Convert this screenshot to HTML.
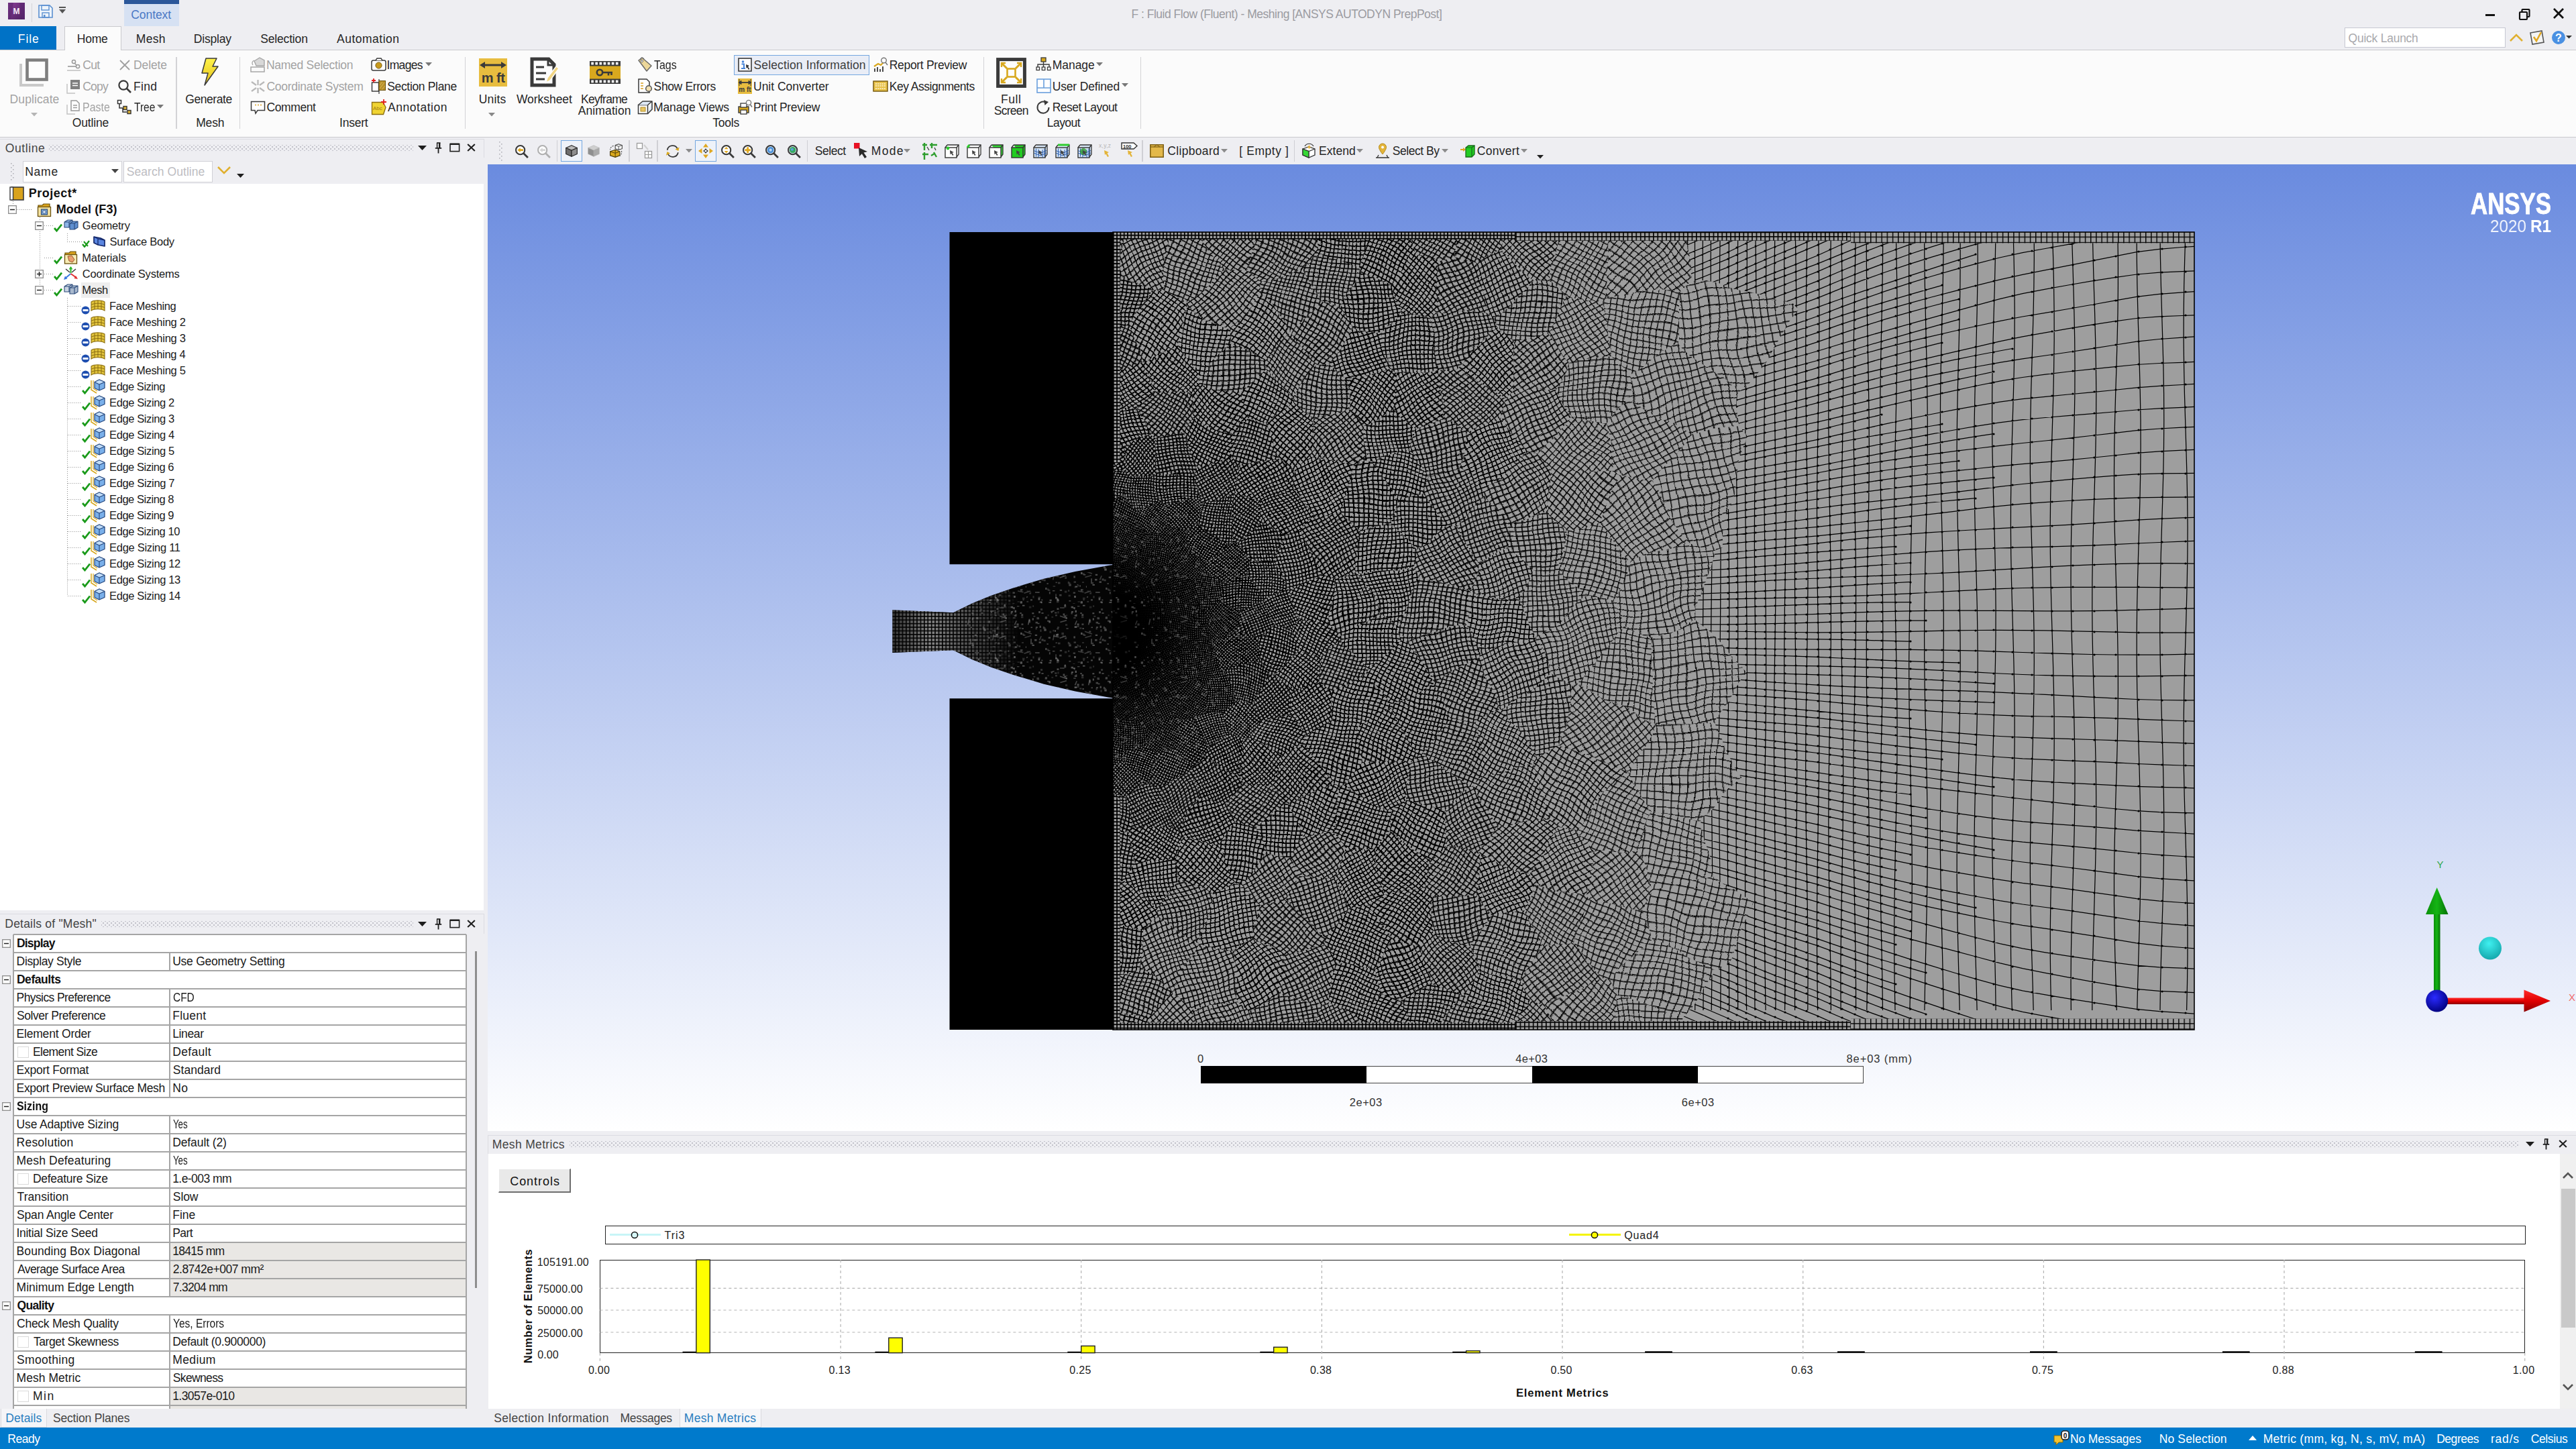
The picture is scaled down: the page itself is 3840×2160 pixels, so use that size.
<!DOCTYPE html><html><head><meta charset="utf-8"><title>Meshing</title><style>html,body{margin:0;padding:0;background:#eeeef2;}
body{width:3840px;height:2160px;position:relative;overflow:hidden;font-family:"Liberation Sans",sans-serif;}
.t{position:absolute;white-space:pre;line-height:1;}
.b{position:absolute;}
.dots{background-image:radial-gradient(circle,#c2c2ca 0.8px,transparent 1.15px),radial-gradient(circle,#c2c2ca 0.8px,transparent 1.15px);background-size:6px 6px;background-position:0 0,3px 3px;}
.hd{background-image:linear-gradient(90deg,#8c8c8c 1.2px,transparent 1.2px);background-size:3px 1.2px;}
.vd{background-image:linear-gradient(#8c8c8c 1.2px,transparent 1.2px);background-size:1.2px 3px;}
</style></head><body>
<div class="b" style="left:0.0px;top:0.0px;width:3840.0px;height:2160.0px;background:#eeeef2;"></div>
<span class="t" style="left:1686.5px;top:13.3px;font-size:17.5px;color:#9b9ba1;letter-spacing:-0.50px;">F : Fluid Flow (Fluent) - Meshing [ANSYS AUTODYN PrepPost]</span>
<svg class="b" style="left:12.0px;top:4.0px;" width="25" height="25" viewBox="0 0 25 25"><defs><linearGradient id="gM" x1="0" y1="0" x2="1" y2="1"><stop offset="0" stop-color="#8b3f98"/><stop offset="1" stop-color="#4a1f5e"/></linearGradient></defs><rect width="25" height="25" fill="url(#gM)"/><path d="M0 0L8 0L4 25L0 25Z" fill="#5a2670" opacity=".6"/><path d="M25 0L17 0L21 25L25 25Z" fill="#5a2670" opacity=".6"/><text x="12.5" y="17" font-family="Liberation Sans" font-weight="700" font-size="12" fill="#f3e9f7" text-anchor="middle">M</text></svg>
<div class="b" style="left:47.0px;top:5.0px;width:1.0px;height:28.0px;background:#d4d4d8;"></div>
<svg class="b" style="left:57.0px;top:7.0px;" width="22" height="20" viewBox="0 0 22 20"><path d="M1 1H17L21 5V19H1Z" fill="#eef4fb" stroke="#5b8fd0" stroke-width="1.6"/><rect x="5" y="1" width="11" height="7" fill="none" stroke="#5b8fd0" stroke-width="1.4"/><rect x="6" y="12" width="10" height="7" fill="none" stroke="#5b8fd0" stroke-width="1.4"/><rect x="8" y="15" width="2.5" height="4" fill="#5b8fd0"/></svg>
<svg class="b" style="left:87.0px;top:10.0px;" width="12" height="11" viewBox="0 0 12 11"><rect x="1" y="0" width="10" height="2" fill="#555"/><path d="M1 4H11L6 10Z" fill="#555"/></svg>
<div class="b" style="left:184.6px;top:0.0px;width:82.0px;height:38.5px;background:#d6e1f3;"></div>
<div class="b" style="left:184.6px;top:0.0px;width:82.0px;height:5.5px;background:#2b579a;"></div>
<span class="t" style="left:195.3px;top:14.3px;font-size:17.5px;color:#4a78c5;letter-spacing:-0.08px;">Context</span>
<div class="b" style="left:3704.5px;top:21.0px;width:14.5px;height:3.0px;background:#111;"></div>
<svg class="b" style="left:3754.0px;top:12.0px;" width="20" height="20" viewBox="0 0 20 20"><rect x="5.5" y="2" width="11" height="11" fill="none" stroke="#111" stroke-width="2.2" rx="1"/><rect x="2" y="6" width="11" height="11" fill="#eeeef2" stroke="#111" stroke-width="2.2" rx="1"/></svg>
<svg class="b" style="left:3804.0px;top:10.0px;" width="20" height="20" viewBox="0 0 20 20"><path d="M3 3L17 17M17 3L3 17" stroke="#111" stroke-width="2.8" fill="none"/></svg>
<div class="b" style="left:0.0px;top:39.0px;width:84.0px;height:35.0px;background:#0072c6;"></div>
<span class="t" style="left:26.8px;top:50.1px;font-size:17.5px;color:#fff;letter-spacing:0.92px;">File</span>
<div class="b" style="left:0.0px;top:73.5px;width:3840.0px;height:1.2px;background:#c9c9cd;"></div>
<div class="b" style="left:96.4px;top:39.3px;width:85.0px;height:36.0px;background:#fbfbfb;border:1.2px solid #c9c9cd;border-bottom:none;box-sizing:border-box;"></div>
<span class="t" style="left:114.8px;top:50.1px;font-size:17.5px;color:#262626;letter-spacing:-0.25px;">Home</span>
<span class="t" style="left:202.8px;top:50.1px;font-size:17.5px;color:#262626;letter-spacing:0.33px;">Mesh</span>
<span class="t" style="left:288.8px;top:50.1px;font-size:17.5px;color:#262626;letter-spacing:-0.21px;">Display</span>
<span class="t" style="left:388.2px;top:50.1px;font-size:17.5px;color:#262626;letter-spacing:-0.16px;">Selection</span>
<span class="t" style="left:502.0px;top:50.1px;font-size:17.5px;color:#262626;letter-spacing:0.50px;">Automation</span>
<div class="b" style="left:3495.4px;top:41.0px;width:239.2px;height:29.8px;background:#fff;border:1.2px solid #c6c8d2;box-sizing:border-box;"></div>
<span class="t" style="left:3500.6px;top:49.1px;font-size:17.5px;color:#a9a9ad;letter-spacing:-0.25px;">Quick Launch</span>
<svg class="b" style="left:3739.0px;top:48.0px;" width="24" height="16" viewBox="0 0 24 16"><path d="M3 13L12 4L21 13" fill="none" stroke="#e0b030" stroke-width="2.6"/></svg>
<svg class="b" style="left:3769.0px;top:44.0px;" width="26" height="24" viewBox="0 0 26 24"><path d="M3 5L20 2L23 19L6 22Z" fill="#f4f4f4" stroke="#555" stroke-width="1.6"/><path d="M8 11L12 17L19 4" fill="none" stroke="#e2a820" stroke-width="2.6"/></svg>
<svg class="b" style="left:3803.0px;top:45.0px;" width="32" height="22" viewBox="0 0 32 22"><circle cx="11" cy="11" r="10" fill="#4a90e2"/><text x="11" y="17" font-family="Liberation Sans" font-weight="700" font-size="16" fill="#fff" text-anchor="middle">?</text><path d="M22 8H31L26.5 12.5Z" fill="#333"/></svg>
<div class="b" style="left:0.0px;top:74.7px;width:3840.0px;height:129.3px;background:#fbfbfb;"></div>
<div class="b" style="left:0.0px;top:203.6px;width:3840.0px;height:1.4px;background:#c9c9cd;"></div>
<svg class="b" style="left:29.0px;top:86.0px;" width="44" height="43" viewBox="0 0 44 43"><path d="M2 9V41H36" fill="none" stroke="#c9c9c9" stroke-width="4"/><rect x="11.5" y="3.5" width="29" height="29" fill="#fdfdfd" stroke="#7f7f7f" stroke-width="4.6"/></svg>
<span class="t" style="left:14.6px;top:139.9px;font-size:17.5px;color:#a3a3a3;letter-spacing:0.10px;">Duplicate</span>
<svg class="b" style="left:45.7px;top:167.6px;" width="10.0" height="6.0" viewBox="0 0 10 6"><path d="M0 0H10L5 5.5Z" fill="#b5b5b5"/></svg>
<svg class="b" style="left:99.0px;top:86.0px;" width="22" height="22" viewBox="0 0 22 22"><path d="M1 19H21" stroke="#bbb" stroke-width="1.4"/><path d="M2 13H14" stroke="#999" stroke-width="1.6"/><circle cx="11" cy="6" r="2.6" fill="none" stroke="#999" stroke-width="1.5"/><circle cx="17" cy="13" r="2.6" fill="none" stroke="#999" stroke-width="1.5"/><path d="M12 8L15 11" stroke="#999" stroke-width="1.5"/></svg>
<span class="t" style="left:123.2px;top:89.4px;font-size:17.5px;color:#a3a3a3;letter-spacing:-0.62px;">Cut</span>
<svg class="b" style="left:99.0px;top:117.0px;" width="22" height="24" viewBox="0 0 22 24"><path d="M1 8V22H13" fill="none" stroke="#c4c4c4" stroke-width="1.5"/><rect x="6" y="2" width="14" height="14" fill="#7f7f7f"/><path d="M9 7H17M9 10.5H17" stroke="#fff" stroke-width="1.6"/></svg>
<span class="t" style="left:123.2px;top:120.9px;font-size:17.5px;color:#a3a3a3;letter-spacing:-0.77px;">Copy</span>
<svg class="b" style="left:99.0px;top:148.0px;" width="22" height="24" viewBox="0 0 22 24"><path d="M1 8V22H13" fill="none" stroke="#c4c4c4" stroke-width="1.5"/><path d="M7 2H15L19 6V17H7Z" fill="#fff" stroke="#999" stroke-width="1.5"/><path d="M10 9H16M10 12.5H16" stroke="#999" stroke-width="1.5"/></svg>
<span class="t" style="left:122.9px;top:152.4px;font-size:17.5px;color:#a3a3a3;transform:scaleX(0.912);transform-origin:0 0;">Paste</span>
<svg class="b" style="left:177.0px;top:88.0px;" width="18" height="18" viewBox="0 0 18 18"><path d="M2 2L16 16M16 2L2 16" stroke="#a0a0a0" stroke-width="1.8"/></svg>
<span class="t" style="left:199.1px;top:89.4px;font-size:17.5px;color:#a3a3a3;letter-spacing:-0.12px;">Delete</span>
<svg class="b" style="left:175.0px;top:118.0px;" width="22" height="22" viewBox="0 0 22 22"><circle cx="9" cy="9" r="6.6" fill="none" stroke="#3a3a3a" stroke-width="2.2"/><path d="M14 14L20 20" stroke="#3a3a3a" stroke-width="2.6"/></svg>
<span class="t" style="left:199.1px;top:120.9px;font-size:17.5px;color:#262626;letter-spacing:0.28px;">Find</span>
<svg class="b" style="left:174.0px;top:148.0px;" width="24" height="24" viewBox="0 0 24 24"><rect x="1.5" y="1.5" width="5" height="5" fill="#fff" stroke="#333" stroke-width="1.5"/><path d="M4 7V13H9M9 13V19H15" fill="none" stroke="#333" stroke-width="1.5"/><rect x="10" y="10.5" width="5" height="5" fill="#d9b036" stroke="#333" stroke-width="1.4"/><rect x="16" y="16.5" width="5" height="5" fill="#d9b036" stroke="#333" stroke-width="1.4"/></svg>
<span class="t" style="left:200.1px;top:152.4px;font-size:17.5px;color:#262626;transform:scaleX(0.888);transform-origin:0 0;">Tree</span>
<svg class="b" style="left:234.4px;top:155.5px;" width="10.0" height="6.0" viewBox="0 0 10 6"><path d="M0 0H10L5 5.5Z" fill="#777"/></svg>
<span class="t" style="left:107.8px;top:175.3px;font-size:17.5px;color:#262626;letter-spacing:-0.15px;">Outline</span>
<div class="b" style="left:262.4px;top:85.0px;width:1.3px;height:107.0px;background:#d3d3d6;"></div>
<svg class="b" style="left:298.0px;top:86.0px;" width="30" height="43" viewBox="0 0 30 43"><defs><linearGradient id="gL" x1="0" y1="0" x2="0" y2="1"><stop offset="0" stop-color="#fff34a"/><stop offset="1" stop-color="#e2bf1a"/></linearGradient></defs><path d="M9 1L25 1L19 13L27 13L7 41L12 23L3 23Z" fill="url(#gL)" stroke="#3a3a3a" stroke-width="1.5" stroke-linejoin="round"/></svg>
<span class="t" style="left:276.2px;top:139.9px;font-size:17.5px;color:#262626;letter-spacing:-0.41px;">Generate</span>
<span class="t" style="left:292.2px;top:175.3px;font-size:17.5px;color:#262626;letter-spacing:-0.17px;">Mesh</span>
<div class="b" style="left:356.8px;top:85.0px;width:1.3px;height:107.0px;background:#d3d3d6;"></div>
<svg class="b" style="left:373.0px;top:85.0px;" width="23" height="24" viewBox="0 0 23 24"><path d="M1 15H21V22H1Z" fill="#fafafa" stroke="#a6a6a6" stroke-width="1.5"/><path d="M6 6L14 1L21 5V13H9Z" fill="#d8d8d8" stroke="#a6a6a6" stroke-width="1.4"/><path d="M4 12C2 9 3 6 6 5" fill="none" stroke="#a6a6a6" stroke-width="1.3"/></svg>
<span class="t" style="left:396.9px;top:89.4px;font-size:17.5px;color:#a3a3a3;letter-spacing:-0.26px;">Named Selection</span>
<svg class="b" style="left:374.0px;top:118.0px;" width="21" height="22" viewBox="0 0 21 22"><path d="M10.5 1V9M10.5 13V21M1 4L8 9M13 13L20 18M20 4L13 9M8 13L1 18" stroke="#b9b9b9" stroke-width="2.2"/></svg>
<span class="t" style="left:397.4px;top:120.9px;font-size:17.5px;color:#a3a3a3;letter-spacing:-0.28px;">Coordinate System</span>
<svg class="b" style="left:373.0px;top:150.0px;" width="23" height="22" viewBox="0 0 23 22"><path d="M1.5 1.5H21.5V14.5H11L8 19L7 14.5H1.5Z" fill="#fff" stroke="#3a3a3a" stroke-width="1.5"/><path d="M7 6.5H9M11 6.5H13M15 6.5H17" stroke="#d9a020" stroke-width="1.4"/></svg>
<span class="t" style="left:397.4px;top:152.4px;font-size:17.5px;color:#262626;letter-spacing:-0.38px;">Comment</span>
<svg class="b" style="left:553.0px;top:86.0px;" width="23" height="22" viewBox="0 0 23 22"><rect x="1" y="4" width="21" height="15" rx="2.5" fill="#fff" stroke="#3a3a3a" stroke-width="1.5"/><path d="M7 4L9 1H15L17 4" fill="#fff" stroke="#3a3a3a" stroke-width="1.4"/><circle cx="11.5" cy="11.5" r="4.6" fill="#c89a1c" stroke="#7a5c10" stroke-width="1"/></svg>
<span class="t" style="left:576.5px;top:89.4px;font-size:17.5px;color:#262626;letter-spacing:-0.66px;">Images</span>
<svg class="b" style="left:633.6px;top:92.5px;" width="10.0" height="6.0" viewBox="0 0 10 6"><path d="M0 0H10L5 5.5Z" fill="#777"/></svg>
<svg class="b" style="left:553.0px;top:117.0px;" width="23" height="24" viewBox="0 0 23 24"><path d="M12 1V23" stroke="#333" stroke-width="1.2"/><rect x="1.5" y="6" width="10" height="13" fill="#fff" stroke="#333" stroke-width="1.4"/><rect x="12" y="3.5" width="9.5" height="14" fill="#b8902a" stroke="#6b520f" stroke-width="1"/><path d="M13 15L20 6M13 10L17 5M16 17L21 11" stroke="#d9b85a" stroke-width="1"/><path d="M1 3H7M4 0V6" stroke="#e02020" stroke-width="1.8"/></svg>
<span class="t" style="left:577.2px;top:120.9px;font-size:17.5px;color:#262626;letter-spacing:-0.33px;">Section Plane</span>
<svg class="b" style="left:553.0px;top:148.0px;" width="24" height="24" viewBox="0 0 24 24"><path d="M1.5 4.5H18L22 12L18.5 22.5H1.5Z" fill="#f0d432" stroke="#8a6d10" stroke-width="1.3"/><text x="3" y="16" font-family="Liberation Sans" font-size="8" fill="#a07a10">Abc</text><path d="M15 4H23M19 0V8" stroke="#e02020" stroke-width="1.8"/></svg>
<span class="t" style="left:578.0px;top:152.4px;font-size:17.5px;color:#262626;letter-spacing:0.54px;">Annotation</span>
<span class="t" style="left:506.1px;top:175.3px;font-size:17.5px;color:#262626;letter-spacing:-0.25px;">Insert</span>
<div class="b" style="left:692.9px;top:85.0px;width:1.3px;height:107.0px;background:#d3d3d6;"></div>
<svg class="b" style="left:714.0px;top:87.0px;" width="42" height="42" viewBox="0 0 42 42"><rect width="42" height="42" fill="#e8bd3f"/><path d="M4 10H38" stroke="#3a3a3a" stroke-width="3"/><path d="M1 10L9 5V15Z M41 10L33 5V15Z" fill="#3a3a3a"/><text x="21" y="36" font-family="Liberation Sans" font-weight="700" font-size="20" fill="#3a3a3a" text-anchor="middle" letter-spacing="-0.5">m ft</text></svg>
<span class="t" style="left:713.8px;top:139.9px;font-size:17.5px;color:#262626;letter-spacing:0.12px;">Units</span>
<svg class="b" style="left:727.6px;top:167.6px;" width="10.0" height="6.0" viewBox="0 0 10 6"><path d="M0 0H10L5 5.5Z" fill="#888"/></svg>
<svg class="b" style="left:790.0px;top:85.0px;" width="44" height="46" viewBox="0 0 44 46"><path d="M3 3H28L36 11V42H3Z" fill="#fdfdfd" stroke="#3a3a3a" stroke-width="5" stroke-linejoin="miter"/><path d="M27 3V12H36" fill="none" stroke="#3a3a3a" stroke-width="3"/><path d="M9 15H21M9 24H24M9 33H22" stroke="#3a3a3a" stroke-width="3"/><path d="M24 38L26 31L39 14L43 17L30 35Z" fill="#f1d584" stroke="#fdfdfd" stroke-width="1.5"/></svg>
<span class="t" style="left:769.9px;top:139.9px;font-size:17.5px;color:#262626;letter-spacing:-0.04px;">Worksheet</span>
<svg class="b" style="left:879.0px;top:91.0px;" width="46" height="34" viewBox="0 0 46 34"><rect x="0" y="0" width="46" height="34" fill="#3a3a3a"/><rect x="0" y="7.5" width="46" height="19" fill="#d8a81e"/><rect x="2.3" y="1.7" width="3.6" height="3.8" fill="#fff"/><rect x="2.3" y="28.5" width="3.6" height="3.8" fill="#fff"/><rect x="8.4" y="1.7" width="3.6" height="3.8" fill="#fff"/><rect x="8.4" y="28.5" width="3.6" height="3.8" fill="#fff"/><rect x="14.5" y="1.7" width="3.6" height="3.8" fill="#fff"/><rect x="14.5" y="28.5" width="3.6" height="3.8" fill="#fff"/><rect x="20.6" y="1.7" width="3.6" height="3.8" fill="#fff"/><rect x="20.6" y="28.5" width="3.6" height="3.8" fill="#fff"/><rect x="26.7" y="1.7" width="3.6" height="3.8" fill="#fff"/><rect x="26.7" y="28.5" width="3.6" height="3.8" fill="#fff"/><rect x="32.8" y="1.7" width="3.6" height="3.8" fill="#fff"/><rect x="32.8" y="28.5" width="3.6" height="3.8" fill="#fff"/><rect x="38.9" y="1.7" width="3.6" height="3.8" fill="#fff"/><rect x="38.9" y="28.5" width="3.6" height="3.8" fill="#fff"/><circle cx="15" cy="17" r="4.2" fill="none" stroke="#3a3a3a" stroke-width="2.6"/><path d="M19 17H34M28 17V21.5M32.5 17V21" stroke="#3a3a3a" stroke-width="2.6"/></svg>
<span class="t" style="left:866.0px;top:139.9px;font-size:17.5px;color:#262626;letter-spacing:-0.74px;">Keyframe</span>
<span class="t" style="left:861.7px;top:156.7px;font-size:17.5px;color:#262626;letter-spacing:0.12px;">Animation</span>
<svg class="b" style="left:950.0px;top:85.0px;" width="23" height="24" viewBox="0 0 23 24"><path d="M2 5L7 1L21 13L14 21Z" fill="#ecd79a" stroke="#6a6a6a" stroke-width="1.5" stroke-linejoin="round"/><circle cx="7" cy="6" r="1.6" fill="#fff" stroke="#6a6a6a"/><path d="M6 5C3 2 8 -1 10 3" fill="none" stroke="#6a6a6a" stroke-width="1.2"/></svg>
<span class="t" style="left:975.2px;top:89.4px;font-size:17.5px;color:#262626;transform:scaleX(0.910);transform-origin:0 0;">Tags</span>
<svg class="b" style="left:950.0px;top:116.0px;" width="24" height="24" viewBox="0 0 24 24"><path d="M2 2H14L18 6V22H2Z" fill="#fff" stroke="#3a3a3a" stroke-width="1.5"/><path d="M5 8H9M5 12H9M5 16H9" stroke="#d9a020" stroke-width="1.5"/><circle cx="17" cy="16" r="4.3" fill="#f0deb0" stroke="#555" stroke-width="1.5"/></svg>
<span class="t" style="left:974.6px;top:120.9px;font-size:17.5px;color:#262626;letter-spacing:-0.37px;">Show Errors</span>
<svg class="b" style="left:950.0px;top:149.0px;" width="24" height="22" viewBox="0 0 24 22"><path d="M1.5 7.5H15.5V20.5H1.5Z" fill="#fff" stroke="#3a3a3a" stroke-width="1.5"/><path d="M1.5 7.5L8 2H22L15.5 7.5M22 2V14L15.5 20.5" fill="#dfeaf7" stroke="#3a3a3a" stroke-width="1.5" stroke-linejoin="round"/><rect x="5" y="11" width="7" height="6" fill="#e8c766" stroke="#b08a20" stroke-width="1"/></svg>
<span class="t" style="left:974.1px;top:152.4px;font-size:17.5px;color:#262626;letter-spacing:-0.14px;">Manage Views</span>
<span class="t" style="left:1062.2px;top:175.3px;font-size:17.5px;color:#262626;letter-spacing:-0.22px;">Tools</span>
<div class="b" style="left:1094.0px;top:81.6px;width:201.8px;height:30.3px;background:#e9edf6;border:1.4px solid #74a7e0;box-sizing:border-box;"></div>
<svg class="b" style="left:1099.5px;top:86.0px;" width="21" height="21" viewBox="0 0 21 21"><rect x="1" y="1" width="19" height="19" fill="#fff" stroke="#3a3a3a" stroke-width="1.6"/><circle cx="7.5" cy="6" r="1.8" fill="#4a86d8"/><path d="M5.5 9.5H9V16H5.5M5 16H11" stroke="#4a86d8" stroke-width="2" fill="none"/><path d="M12 10L17 12L15 13.5L17.5 17L16 18L13.8 14.5L12.5 16Z" fill="#333"/></svg>
<span class="t" style="left:1123.5px;top:89.4px;font-size:17.5px;color:#3d3d3d;letter-spacing:0.13px;">Selection Information</span>
<svg class="b" style="left:1099.5px;top:117.0px;" width="21" height="23" viewBox="0 0 21 23"><rect width="21" height="23" fill="#e8bd3f"/><path d="M2 6H19" stroke="#3a3a3a" stroke-width="1.8"/><path d="M1 6L5 3.3V8.7Z M20 6L16 3.3V8.7Z M2 1V11M19 1V11" fill="#3a3a3a" stroke="#3a3a3a" stroke-width="1"/><text x="10.5" y="20" font-family="Liberation Sans" font-weight="700" font-size="10" fill="#3a3a3a" text-anchor="middle">m ft</text></svg>
<span class="t" style="left:1123.0px;top:120.9px;font-size:17.5px;color:#262626;letter-spacing:-0.01px;">Unit Converter</span>
<svg class="b" style="left:1099.5px;top:148.0px;" width="22" height="24" viewBox="0 0 22 24"><rect x="1" y="11" width="15" height="9" fill="#d9a81e" stroke="#3a3a3a" stroke-width="1.4"/><rect x="4" y="6" width="9" height="6" fill="#fff" stroke="#3a3a3a" stroke-width="1.3"/><rect x="4" y="16" width="9" height="6" fill="#fff" stroke="#3a3a3a" stroke-width="1.3"/><circle cx="16" cy="5" r="3.6" fill="#fff" stroke="#777" stroke-width="1.4"/><path d="M18.5 8L21 11.5" stroke="#777" stroke-width="1.6"/></svg>
<span class="t" style="left:1123.0px;top:152.4px;font-size:17.5px;color:#262626;letter-spacing:-0.31px;">Print Preview</span>
<svg class="b" style="left:1301.0px;top:85.0px;" width="23" height="24" viewBox="0 0 23 24"><path d="M3 22V17M7 22V15M11 22V18M15 22V14" stroke="#3a3a3a" stroke-width="1.8"/><path d="M2 14L8 10L12 12L17 7" fill="none" stroke="#d9a81e" stroke-width="2.2"/><circle cx="16.5" cy="5" r="3.8" fill="#fff" stroke="#777" stroke-width="1.4"/><path d="M19 8L22 12" stroke="#777" stroke-width="1.6"/></svg>
<span class="t" style="left:1325.7px;top:89.4px;font-size:17.5px;color:#262626;letter-spacing:-0.30px;">Report Preview</span>
<svg class="b" style="left:1301.0px;top:120.0px;" width="23" height="17" viewBox="0 0 23 17"><rect x="1" y="1" width="21" height="15" fill="#e8c24a" stroke="#7a5c10" stroke-width="1.5"/><path d="M4 5H19M4 8H19M4 12H19" stroke="#fff7dc" stroke-width="1.6" stroke-dasharray="2 1.2"/></svg>
<span class="t" style="left:1325.7px;top:120.9px;font-size:17.5px;color:#262626;letter-spacing:-0.48px;">Key Assignments</span>
<div class="b" style="left:1465.7px;top:85.0px;width:1.3px;height:107.0px;background:#d3d3d6;"></div>
<svg class="b" style="left:1485.0px;top:85.5px;" width="45" height="45" viewBox="0 0 45 45"><rect x="2.6" y="2.6" width="39.8" height="39.8" fill="#fdfdfd" stroke="#3a3a3a" stroke-width="5"/><rect x="16.5" y="16.5" width="12" height="12" fill="none" stroke="#d8a81e" stroke-width="2.6"/><path d="M16 16L9 9M29 16L36 9M16 29L9 36M29 29L36 36" stroke="#d8a81e" stroke-width="3"/><path d="M8 14V8H14M31 8H37V14M8 31V37H14M37 31V37H31" fill="none" stroke="#d8a81e" stroke-width="2.4"/></svg>
<span class="t" style="left:1492.0px;top:139.9px;font-size:17.5px;color:#262626;letter-spacing:0.55px;">Full</span>
<span class="t" style="left:1481.8px;top:156.7px;font-size:17.5px;color:#262626;letter-spacing:-0.77px;">Screen</span>
<svg class="b" style="left:1544.0px;top:85.0px;" width="23" height="22" viewBox="0 0 23 22"><rect x="8" y="1" width="7" height="6" fill="#d8a81e" stroke="#3a3a3a" stroke-width="1.3"/><path d="M11.5 7V11M3 15V11H20V15M11.5 11V15" fill="none" stroke="#3a3a3a" stroke-width="1.4"/><rect x="1" y="15" width="4.5" height="4.5" fill="#fff" stroke="#3a3a3a" stroke-width="1.3"/><rect x="9.3" y="15" width="4.5" height="4.5" fill="#fff" stroke="#3a3a3a" stroke-width="1.3"/><rect x="17.5" y="15" width="4.5" height="4.5" fill="#fff" stroke="#3a3a3a" stroke-width="1.3"/></svg>
<span class="t" style="left:1568.7px;top:89.4px;font-size:17.5px;color:#262626;letter-spacing:-0.03px;">Manage</span>
<svg class="b" style="left:1634.0px;top:92.5px;" width="10.0" height="6.0" viewBox="0 0 10 6"><path d="M0 0H10L5 5.5Z" fill="#777"/></svg>
<svg class="b" style="left:1544.5px;top:117.0px;" width="22" height="22" viewBox="0 0 22 22"><rect x="1" y="1" width="20" height="20" fill="#fff" stroke="#6a9fdc" stroke-width="1.6"/><path d="M11 1V14M1 14H21" stroke="#6a9fdc" stroke-width="1.6"/></svg>
<span class="t" style="left:1568.7px;top:120.9px;font-size:17.5px;color:#262626;letter-spacing:-0.15px;">User Defined</span>
<svg class="b" style="left:1671.6px;top:124.0px;" width="10.0" height="6.0" viewBox="0 0 10 6"><path d="M0 0H10L5 5.5Z" fill="#777"/></svg>
<svg class="b" style="left:1544.0px;top:149.0px;" width="23" height="22" viewBox="0 0 23 22"><path d="M14 3.2A8.5 8.5 0 1 0 19.5 11" fill="none" stroke="#3a3a3a" stroke-width="2"/><path d="M12 0L19 3L13.5 8Z" fill="#3a3a3a"/></svg>
<span class="t" style="left:1568.7px;top:152.4px;font-size:17.5px;color:#262626;letter-spacing:-0.53px;">Reset Layout</span>
<span class="t" style="left:1560.8px;top:175.3px;font-size:17.5px;color:#262626;letter-spacing:-0.55px;">Layout</span>
<div class="b" style="left:1699.7px;top:85.0px;width:1.3px;height:107.0px;background:#d3d3d6;"></div>
<svg class="b" style="left:744.0px;top:211.0px;" width="6" height="30" viewBox="0 0 6 30"><rect x="0" y="0" width="1.6" height="1.6" fill="#b4b4ba"/><rect x="3" y="3" width="1.6" height="1.6" fill="#b4b4ba"/><rect x="0" y="6" width="1.6" height="1.6" fill="#b4b4ba"/><rect x="3" y="9" width="1.6" height="1.6" fill="#b4b4ba"/><rect x="0" y="12" width="1.6" height="1.6" fill="#b4b4ba"/><rect x="3" y="15" width="1.6" height="1.6" fill="#b4b4ba"/><rect x="0" y="18" width="1.6" height="1.6" fill="#b4b4ba"/><rect x="3" y="21" width="1.6" height="1.6" fill="#b4b4ba"/><rect x="0" y="24" width="1.6" height="1.6" fill="#b4b4ba"/><rect x="3" y="27" width="1.6" height="1.6" fill="#b4b4ba"/></svg>
<svg class="b" style="left:766.5px;top:214.5px;" width="22.5" height="22.5" viewBox="0 0 26 26"><circle cx="10" cy="10" r="7.6" fill="#fff" stroke="#3a3a3a" stroke-width="2.4"/><path d="M15.5 15.5L23 23" stroke="#3a3a3a" stroke-width="3.2"/><path d="M5 10L10 6V8.5H15V11.5H10V14Z" fill="#e0a820"/></svg>
<svg class="b" style="left:799.5px;top:214.5px;" width="22.5" height="22.5" viewBox="0 0 26 26"><circle cx="10" cy="10" r="7.6" fill="#fff" stroke="#b0b0b0" stroke-width="2.4"/><path d="M15.5 15.5L23 23" stroke="#b0b0b0" stroke-width="3.2"/><path d="M5 10L10 6V8.5H15V11.5H10V14Z" fill="#d5d5d5"/></svg>
<div class="b" style="left:830.0px;top:209.0px;width:1.3px;height:32.0px;background:#cfcfd4;"></div>
<div class="b" style="left:835.5px;top:209.0px;width:32.3px;height:32.0px;background:#eef2f9;border:1.4px solid #74a7e0;box-sizing:border-box;"></div>
<svg class="b" style="left:841.7px;top:215.0px;" width="20" height="20" viewBox="0 0 24 24"><path d="M12 2L22 6.5L12 11L2 6.5Z" fill="#b9b9b9" stroke="#2a2a2a" stroke-width="1.4" stroke-linejoin="round"/><path d="M2 6.5L12 11V22L2 17.5Z" fill="#6e6e6e" stroke="#2a2a2a" stroke-width="1.4" stroke-linejoin="round"/><path d="M22 6.5L12 11V22L22 17.5Z" fill="#8d8d8d" stroke="#2a2a2a" stroke-width="1.4" stroke-linejoin="round"/></svg>
<svg class="b" style="left:875.0px;top:215.0px;" width="20" height="20" viewBox="0 0 24 24"><path d="M12 2L22 6.5L12 11L2 6.5Z" fill="#cfcfcf" stroke="#a9a9a9" stroke-width="0.6" stroke-linejoin="round"/><path d="M2 6.5L12 11V22L2 17.5Z" fill="#8f8f8f" stroke="#a9a9a9" stroke-width="0.6" stroke-linejoin="round"/><path d="M22 6.5L12 11V22L22 17.5Z" fill="#a9a9a9" stroke="#a9a9a9" stroke-width="0.6" stroke-linejoin="round"/></svg>
<svg class="b" style="left:907.0px;top:214.0px;" width="22" height="22" viewBox="0 0 26 26"><path d="M3 14L12 11L20 14V21L12 24L3 21Z" fill="#d9a81e" stroke="#4a3a08" stroke-width="1.3"/><path d="M12 11V24M3 14L12 17L20 14" fill="none" stroke="#4a3a08" stroke-width="1.1"/><path d="M12 3L18 1L24 3V9L18 11L12 9Z" fill="#fff" stroke="#333" stroke-width="1.2"/><path d="M18 5V11M12 3L18 5L24 3" fill="none" stroke="#333" stroke-width="1"/><path d="M9 4C5 5 3 8 3 11M23 13C24 17 22 20 20 22" fill="none" stroke="#555" stroke-width="1.3" stroke-dasharray="2.5 1.6"/></svg>
<div class="b" style="left:937.4px;top:209.0px;width:1.3px;height:32.0px;background:#cfcfd4;"></div>
<svg class="b" style="left:948.0px;top:212.0px;" width="26" height="26" viewBox="0 0 26 26"><rect x="1.5" y="1.5" width="8" height="8" fill="#fff" stroke="#9a9a9a" stroke-width="1.3"/><path d="M12 4L18 11" stroke="#cfcfcf" stroke-width="2"/><rect x="13.5" y="13.5" width="10" height="10" fill="#fff" stroke="#9a9a9a" stroke-width="1.3"/><path d="M18.5 13.5V23.5M13.5 18.5H23.5" stroke="#9a9a9a" stroke-width="1.2"/></svg>
<div class="b" style="left:979.4px;top:209.0px;width:1.3px;height:32.0px;background:#cfcfd4;"></div>
<svg class="b" style="left:991.5px;top:214.5px;" width="22" height="21" viewBox="0 0 25 24"><path d="M3 10A9.2 9.2 0 0 1 20.5 8" fill="none" stroke="#3a3a3a" stroke-width="2"/><path d="M21.5 14A9.2 9.2 0 0 1 4 16" fill="none" stroke="#3a3a3a" stroke-width="2"/><path d="M23.5 5L22 11.5L16.5 8.5Z" fill="#d9a81e"/><path d="M1 19L2.8 12.5L8 15.5Z" fill="#d9a81e"/></svg>
<svg class="b" style="left:1021.8px;top:222.0px;" width="10.0" height="6.0" viewBox="0 0 10 6"><path d="M0 0H10L5 5.5Z" fill="#8a8a8a"/></svg>
<div class="b" style="left:1035.5px;top:209.0px;width:32.3px;height:32.0px;background:#eef2f9;border:1.4px solid #74a7e0;box-sizing:border-box;"></div>
<svg class="b" style="left:1039.5px;top:213.0px;" width="24" height="24" viewBox="0 0 24 24"><path d="M12 1L16 6.5H8Z M12 23L16 17.5H8Z M1 12L6.5 8V16Z M23 12L17.5 8V16Z" fill="#e0a820"/><path d="M12 8.2L14 10.5H10Z M12 15.8L14 13.5H10Z M8.2 12L10.5 10V14Z M15.8 12L13.5 10V14Z" fill="#222"/></svg>
<svg class="b" style="left:1074.0px;top:214.5px;" width="22.5" height="22.5" viewBox="0 0 26 26"><circle cx="10" cy="10" r="7.6" fill="#fff" stroke="#3a3a3a" stroke-width="2.4"/><path d="M15.5 15.5L23 23" stroke="#3a3a3a" stroke-width="3.2"/><path d="M10 4.5L13.5 8.5H6.5Z M10 15.5L13.5 11.5H6.5Z" fill="#e0a820"/></svg>
<svg class="b" style="left:1106.3px;top:214.5px;" width="22.5" height="22.5" viewBox="0 0 26 26"><circle cx="10" cy="10" r="7.6" fill="#fff" stroke="#3a3a3a" stroke-width="2.4"/><path d="M15.5 15.5L23 23" stroke="#3a3a3a" stroke-width="3.2"/><path d="M5 10H15M10 5V15" stroke="#e0a820" stroke-width="3.4"/></svg>
<svg class="b" style="left:1139.5px;top:214.5px;" width="22.5" height="22.5" viewBox="0 0 26 26"><circle cx="10" cy="10" r="7.6" fill="#dfe8f2" stroke="#3a3a3a" stroke-width="2.4"/><path d="M15.5 15.5L23 23" stroke="#3a3a3a" stroke-width="3.2"/><circle cx="10" cy="10" r="5.4" fill="#4a90d9"/><circle cx="10" cy="10" r="2.4" fill="#bcd8f4"/></svg>
<svg class="b" style="left:1172.9px;top:214.5px;" width="22.5" height="22.5" viewBox="0 0 26 26"><circle cx="10" cy="10" r="7.6" fill="#dfe8f2" stroke="#3a3a3a" stroke-width="2.4"/><path d="M15.5 15.5L23 23" stroke="#3a3a3a" stroke-width="3.2"/><circle cx="10" cy="10" r="5.4" fill="#35a860"/><circle cx="9" cy="9" r="2.4" fill="#5aa0e0"/></svg>
<div class="b" style="left:1203.1px;top:209.0px;width:1.3px;height:32.0px;background:#cfcfd4;"></div>
<span class="t" style="left:1214.7px;top:217.4px;font-size:17.5px;color:#262626;letter-spacing:-0.45px;">Select</span>
<svg class="b" style="left:1273.0px;top:213.0px;" width="22" height="24" viewBox="0 0 22 24"><rect x="0" y="0" width="8.5" height="8.5" fill="#e81123"/><path d="M7 7L20 13L14.5 14.5L19 21L16 23L11.8 16.3L8 20Z" fill="#2a2a2a"/></svg>
<span class="t" style="left:1298.7px;top:217.4px;font-size:17.5px;color:#262626;letter-spacing:1.38px;">Mode</span>
<svg class="b" style="left:1347.3px;top:222.0px;" width="10.0" height="6.0" viewBox="0 0 10 6"><path d="M0 0H10L5 5.5Z" fill="#8a8a8a"/></svg>
<svg class="b" style="left:1373.0px;top:212.0px;" width="26" height="27" viewBox="0 0 26 27"><path d="M2 4H9M5 1V12M13 4H24M16 1V9M2 18H11M5 15V26M19 15L23 22M15 20L20 17" stroke="#2e9e2e" stroke-width="2.4" fill="none"/><path d="M9 7L12 12M20 8L22 12" stroke="#444" stroke-width="1.4"/></svg>
<svg class="b" style="left:1406.6px;top:213.0px;" width="25" height="25" viewBox="0 0 25 25"><path d="M5 3H22V17L19 21" fill="#fff" stroke="#333" stroke-width="1.3"/><path d="M2 7L5 3M19 7L22 3" stroke="#333" stroke-width="1.3"/><rect x="2" y="7" width="17" height="15" fill="#fff" stroke="#333" stroke-width="1.4"/><circle cx="6" cy="8" r="2.4" fill="#2ecc2e"/><path d="M9 11L15 14L12.5 14.8L14.5 18L13 19L11 15.7L9.5 17.5Z" fill="#444"/></svg>
<svg class="b" style="left:1439.7px;top:213.0px;" width="25" height="25" viewBox="0 0 25 25"><path d="M5 3H22V17L19 21" fill="#fff" stroke="#333" stroke-width="1.3"/><path d="M2 7L5 3M19 7L22 3" stroke="#333" stroke-width="1.3"/><rect x="2" y="7" width="17" height="15" fill="#fff" stroke="#333" stroke-width="1.4"/><path d="M2 7L5 3" stroke="#2ecc2e" stroke-width="3"/><path d="M9 11L15 14L12.5 14.8L14.5 18L13 19L11 15.7L9.5 17.5Z" fill="#444"/></svg>
<svg class="b" style="left:1473.0px;top:213.0px;" width="25" height="25" viewBox="0 0 25 25"><path d="M5 3H22V17L19 21" fill="#35d835" stroke="#333" stroke-width="1.3"/><path d="M2 7L5 3M19 7L22 3" stroke="#333" stroke-width="1.3"/><rect x="2" y="7" width="17" height="15" fill="#fff" stroke="#333" stroke-width="1.4"/><path d="M9 11L15 14L12.5 14.8L14.5 18L13 19L11 15.7L9.5 17.5Z" fill="#444"/></svg>
<svg class="b" style="left:1506.0px;top:213.0px;" width="25" height="25" viewBox="0 0 25 25"><path d="M5 3H22V17L19 21" fill="#22cc22" stroke="#333" stroke-width="1.3"/><path d="M2 7L5 3M19 7L22 3" stroke="#333" stroke-width="1.3"/><rect x="2" y="7" width="17" height="15" fill="#22cc22" stroke="#333" stroke-width="1.4"/><path d="M9 11L15 14L12.5 14.8L14.5 18L13 19L11 15.7L9.5 17.5Z" fill="#444"/></svg>
<svg class="b" style="left:1539.0px;top:213.0px;" width="25" height="25" viewBox="0 0 25 25"><path d="M5 3H22V17L19 21" fill="#d7e6f7" stroke="#333" stroke-width="1.3"/><path d="M2 7L5 3M19 7L22 3" stroke="#333" stroke-width="1.3"/><rect x="2" y="7" width="17" height="15" fill="#d7e6f7" stroke="#333" stroke-width="1.4"/><path d="M2 11.5L12 15.5M2 15L12 19M5.5 8.5V20.5M9 9.5V22M12 15.5L21 11.5M12 19L21 15M15 10V22M18 8.5V20.5" stroke="#2a5db0" stroke-width="1" fill="none"/><path d="M9 11L15 14L12.5 14.8L14.5 18L13 19L11 15.7L9.5 17.5Z" fill="#444"/></svg>
<svg class="b" style="left:1571.9px;top:213.0px;" width="25" height="25" viewBox="0 0 25 25"><path d="M5 3H22V17L19 21" fill="#d7e6f7" stroke="#333" stroke-width="1.3"/><path d="M2 7L5 3M19 7L22 3" stroke="#333" stroke-width="1.3"/><rect x="2" y="7" width="17" height="15" fill="#d7e6f7" stroke="#333" stroke-width="1.4"/><path d="M2 11.5L12 15.5M2 15L12 19M5.5 8.5V20.5M9 9.5V22M12 15.5L21 11.5M12 19L21 15M15 10V22M18 8.5V20.5" stroke="#2a5db0" stroke-width="1" fill="none"/><path d="M5 3H22" stroke="#2ecc2e" stroke-width="3"/><path d="M9 11L15 14L12.5 14.8L14.5 18L13 19L11 15.7L9.5 17.5Z" fill="#444"/></svg>
<svg class="b" style="left:1604.9px;top:213.0px;" width="25" height="25" viewBox="0 0 25 25"><path d="M5 3H22V17L19 21" fill="#d7e6f7" stroke="#333" stroke-width="1.3"/><path d="M2 7L5 3M19 7L22 3" stroke="#333" stroke-width="1.3"/><rect x="2" y="7" width="17" height="15" fill="#d7e6f7" stroke="#333" stroke-width="1.4"/><path d="M2 11.5L12 15.5M2 15L12 19M5.5 8.5V20.5M9 9.5V22M12 15.5L21 11.5M12 19L21 15M15 10V22M18 8.5V20.5" stroke="#2a5db0" stroke-width="1" fill="none"/><circle cx="10" cy="13" r="5" fill="#2a9a2a" opacity=".8"/><path d="M9 11L15 14L12.5 14.8L14.5 18L13 19L11 15.7L9.5 17.5Z" fill="#444"/></svg>
<svg class="b" style="left:1637.0px;top:211.0px;" width="26" height="28" viewBox="0 0 26 28"><text x="1" y="9" font-family="Liberation Sans" font-size="8.5" fill="#b5b5b5" letter-spacing="0.3">x,y,z</text><path d="M9 13L16 16L13.5 17.2L16 22L14 23L11.5 18.4L10 20Z" fill="#e3b43a"/></svg>
<svg class="b" style="left:1670.0px;top:211.0px;" width="28" height="28" viewBox="0 0 28 28"><path d="M2 2H20L25 6.5L20 11H2Z" fill="#fff" stroke="#333" stroke-width="1.4"/><text x="4" y="9.5" font-family="Liberation Sans" font-weight="700" font-size="7.5" fill="#333">100</text><path d="M11 13L18 16L15.5 17.2L18 22L16 23L13.5 18.4L12 20Z" fill="#e3b43a"/></svg>
<div class="b" style="left:1702.4px;top:209.0px;width:1.3px;height:32.0px;background:#cfcfd4;"></div>
<svg class="b" style="left:1714.0px;top:215.0px;" width="21" height="20" viewBox="0 0 21 20"><rect x="0.8" y="0.8" width="19.4" height="18.4" fill="#e3b84a" stroke="#7a5c10" stroke-width="1.5"/><path d="M1 4H20" stroke="#7a5c10" stroke-width="1.2"/><path d="M6 4L10.5 1L15 4" fill="none" stroke="#7a5c10" stroke-width="1"/></svg>
<span class="t" style="left:1740.3px;top:217.4px;font-size:17.5px;color:#262626;letter-spacing:0.32px;">Clipboard</span>
<svg class="b" style="left:1819.8px;top:222.0px;" width="10.0" height="6.0" viewBox="0 0 10 6"><path d="M0 0H10L5 5.5Z" fill="#8a8a8a"/></svg>
<span class="t" style="left:1847.3px;top:217.4px;font-size:17.5px;color:#262626;letter-spacing:0.57px;">[ Empty ]</span>
<div class="b" style="left:1928.6px;top:209.0px;width:1.3px;height:32.0px;background:#cfcfd4;"></div>
<svg class="b" style="left:1940.0px;top:213.0px;" width="23" height="23" viewBox="0 0 23 23"><path d="M2 9L11 6L20 9V18L11 22L2 18Z" fill="#fff" stroke="#333" stroke-width="1.3"/><path d="M2 9L11 12.5L20 9M11 12.5V22" fill="none" stroke="#333" stroke-width="1.2"/><path d="M2 9L11 12.5V22L2 18Z" fill="#35d835" stroke="#333" stroke-width="1.2"/><path d="M5 5C8 0 15 0 18 5" fill="none" stroke="#333" stroke-width="1.2"/><path d="M11.5 3L12.5 5.5L15 6L12.5 7L11.5 9.5L10.5 7L8 6L10.5 5.5Z" fill="#e0a820"/></svg>
<span class="t" style="left:1966.0px;top:217.4px;font-size:17.5px;color:#262626;letter-spacing:0.07px;">Extend</span>
<svg class="b" style="left:2022.2px;top:222.0px;" width="10.0" height="6.0" viewBox="0 0 10 6"><path d="M0 0H10L5 5.5Z" fill="#8a8a8a"/></svg>
<svg class="b" style="left:2050.0px;top:212.0px;" width="22" height="25" viewBox="0 0 22 25"><path d="M11 2A5.5 5.5 0 0 1 16.5 7.5C16.500 11 11 18 11 18C11 18 5.500 11 5.500 7.5A5.5 5.5 0 0 1 11 2Z" fill="#e3b43a" stroke="#b58a1a" stroke-width="1"/><circle cx="11" cy="7.5" r="2" fill="#fff"/><path d="M1 23H21M3 23L5 19M19 23L17 19" stroke="#333" stroke-width="1.3" fill="none"/></svg>
<span class="t" style="left:2075.7px;top:217.4px;font-size:17.5px;color:#262626;letter-spacing:-0.44px;">Select By</span>
<svg class="b" style="left:2148.6px;top:222.0px;" width="10.0" height="6.0" viewBox="0 0 10 6"><path d="M0 0H10L5 5.5Z" fill="#8a8a8a"/></svg>
<svg class="b" style="left:2176.0px;top:214.0px;" width="23" height="22" viewBox="0 0 23 22"><path d="M1 9H7" stroke="#e0a820" stroke-width="2"/><path d="M5 6L9 9L5 12Z" fill="#e0a820"/><path d="M9 6L13 3H22V16L18 20H9Z" fill="#22cc22" stroke="#1a6a1a" stroke-width="1.3"/><path d="M9 6H18V20M18 6L22 3" fill="none" stroke="#1a6a1a" stroke-width="1.2"/></svg>
<span class="t" style="left:2201.7px;top:217.4px;font-size:17.5px;color:#262626;letter-spacing:0.30px;">Convert</span>
<svg class="b" style="left:2267.0px;top:222.0px;" width="10.0" height="6.0" viewBox="0 0 10 6"><path d="M0 0H10L5 5.5Z" fill="#8a8a8a"/></svg>
<svg class="b" style="left:2291.3px;top:230.5px;" width="10.0" height="6.0" viewBox="0 0 10 6"><path d="M0 0H10L5 5.5Z" fill="#222"/></svg>
<div class="b" style="left:0.0px;top:207.0px;width:721.0px;height:27.5px;background:#eeeef2;"></div>
<div class="b" style="left:0.0px;top:206.6px;width:721.0px;height:1.0px;background:#dcdce2;"></div>
<div class="b" style="left:720.5px;top:207.0px;width:1.0px;height:28.0px;background:#dcdce2;"></div>
<span class="t" style="left:7.8px;top:212.6px;font-size:17.5px;color:#444;letter-spacing:0.57px;">Outline</span>
<div class="b dots" style="left:73.0px;top:215.5px;width:543.0px;height:9px"></div>
<svg class="b" style="left:622.8px;top:217.2px;" width="13" height="7.5" viewBox="0 0 13 7.5"><path d="M0 0H13L6.5 7Z" fill="#1e1e1e"/></svg>
<svg class="b" style="left:647.9px;top:211.7px;" width="11" height="17" viewBox="0 0 11 17"><path d="M3 1H8.5" stroke="#1e1e1e" stroke-width="1.6"/><path d="M3.6 1V8.5" stroke="#1e1e1e" stroke-width="1.5"/><rect x="6" y="1" width="2.4" height="7.5" fill="#1e1e1e"/><path d="M0.8 8.8H10.2M5.5 8.8V16.5" stroke="#1e1e1e" stroke-width="1.8"/></svg>
<svg class="b" style="left:670.4px;top:213.2px;" width="16" height="14" viewBox="0 0 16 14"><rect x="1" y="1.6" width="13.6" height="11" fill="none" stroke="#1e1e1e" stroke-width="1.6"/><path d="M1 1.8H14.6" stroke="#1e1e1e" stroke-width="2.4"/></svg>
<svg class="b" style="left:695.9px;top:214.2px;" width="13" height="12" viewBox="0 0 13 12"><path d="M1.2 1L11.8 11M11.8 1L1.2 11" stroke="#1e1e1e" stroke-width="2.1"/></svg>
<div class="b" style="left:0.0px;top:235.0px;width:721.0px;height:38.5px;background:#eeeef2;"></div>
<svg class="b" style="left:16.0px;top:243.0px;" width="6" height="27" viewBox="0 0 6 27"><rect x="0" y="0" width="1.6" height="1.6" fill="#b4b4ba"/><rect x="3" y="3" width="1.6" height="1.6" fill="#b4b4ba"/><rect x="0" y="6" width="1.6" height="1.6" fill="#b4b4ba"/><rect x="3" y="9" width="1.6" height="1.6" fill="#b4b4ba"/><rect x="0" y="12" width="1.6" height="1.6" fill="#b4b4ba"/><rect x="3" y="15" width="1.6" height="1.6" fill="#b4b4ba"/><rect x="0" y="18" width="1.6" height="1.6" fill="#b4b4ba"/><rect x="3" y="21" width="1.6" height="1.6" fill="#b4b4ba"/><rect x="0" y="24" width="1.6" height="1.6" fill="#b4b4ba"/></svg>
<div class="b" style="left:34.0px;top:239.6px;width:147.6px;height:32.2px;background:#fff;border:1.2px solid #d0d0d6;box-sizing:border-box;"></div>
<span class="t" style="left:37.2px;top:247.7px;font-size:17.5px;color:#262626;letter-spacing:0.75px;">Name</span>
<svg class="b" style="left:166.0px;top:252.0px;" width="12" height="7" viewBox="0 0 12 7"><path d="M0 0H11L5.5 6Z" fill="#444"/></svg>
<div class="b" style="left:183.9px;top:239.6px;width:133.5px;height:32.2px;background:#fff;border:1.2px solid #d0d0d6;box-sizing:border-box;"></div>
<span class="t" style="left:188.8px;top:247.7px;font-size:17.5px;color:#bdbdc2;letter-spacing:0.06px;">Search Outline</span>
<svg class="b" style="left:323.0px;top:247.0px;" width="22" height="14" viewBox="0 0 22 14"><path d="M2 2L11 11L20 2" fill="none" stroke="#e0b030" stroke-width="2.6"/></svg>
<svg class="b" style="left:353.0px;top:259.0px;" width="11" height="6" viewBox="0 0 11 6"><path d="M0 0H11L5.5 6Z" fill="#1e1e1e"/></svg>
<div class="b" style="left:0.0px;top:273.5px;width:721.0px;height:1083.2px;background:#fff;"></div>
<div class="b vd" style="left:18.7px;top:300.0px;width:1.2px;height:6.0px"></div>
<div class="b hd" style="left:25.0px;top:312.0px;width:22.0px;height:1.2px"></div>
<div class="b vd" style="left:58.9px;top:324.0px;width:1.2px;height:108.0px"></div>
<div class="b hd" style="left:66.0px;top:336.0px;width:14.0px;height:1.2px"></div>
<div class="b hd" style="left:66.0px;top:384.0px;width:14.0px;height:1.2px"></div>
<div class="b hd" style="left:66.0px;top:408.0px;width:14.0px;height:1.2px"></div>
<div class="b hd" style="left:66.0px;top:432.0px;width:14.0px;height:1.2px"></div>
<div class="b vd" style="left:100.0px;top:348.0px;width:1.2px;height:12.0px"></div>
<div class="b hd" style="left:100.0px;top:360.0px;width:22.0px;height:1.2px"></div>
<div class="b vd" style="left:100.0px;top:444.0px;width:1.2px;height:444.0px"></div>
<div class="b hd" style="left:101.0px;top:456.0px;width:21.0px;height:1.2px"></div>
<div class="b hd" style="left:101.0px;top:480.0px;width:21.0px;height:1.2px"></div>
<div class="b hd" style="left:101.0px;top:504.0px;width:21.0px;height:1.2px"></div>
<div class="b hd" style="left:101.0px;top:528.0px;width:21.0px;height:1.2px"></div>
<div class="b hd" style="left:101.0px;top:552.0px;width:21.0px;height:1.2px"></div>
<div class="b hd" style="left:101.0px;top:576.0px;width:21.0px;height:1.2px"></div>
<div class="b hd" style="left:101.0px;top:600.0px;width:21.0px;height:1.2px"></div>
<div class="b hd" style="left:101.0px;top:624.0px;width:21.0px;height:1.2px"></div>
<div class="b hd" style="left:101.0px;top:648.0px;width:21.0px;height:1.2px"></div>
<div class="b hd" style="left:101.0px;top:672.0px;width:21.0px;height:1.2px"></div>
<div class="b hd" style="left:101.0px;top:696.0px;width:21.0px;height:1.2px"></div>
<div class="b hd" style="left:101.0px;top:720.0px;width:21.0px;height:1.2px"></div>
<div class="b hd" style="left:101.0px;top:744.0px;width:21.0px;height:1.2px"></div>
<div class="b hd" style="left:101.0px;top:768.0px;width:21.0px;height:1.2px"></div>
<div class="b hd" style="left:101.0px;top:792.0px;width:21.0px;height:1.2px"></div>
<div class="b hd" style="left:101.0px;top:816.0px;width:21.0px;height:1.2px"></div>
<div class="b hd" style="left:101.0px;top:840.0px;width:21.0px;height:1.2px"></div>
<div class="b hd" style="left:101.0px;top:864.0px;width:21.0px;height:1.2px"></div>
<div class="b hd" style="left:101.0px;top:888.0px;width:21.0px;height:1.2px"></div>
<svg class="b" style="left:13.5px;top:277.5px;" width="22" height="21" viewBox="0 0 22 21"><rect x="3" y="1" width="18" height="19" fill="#d8a21c" stroke="#3a3a3a" stroke-width="1.6"/><rect x="1" y="1" width="4.5" height="19" fill="#fff" stroke="#3a3a3a" stroke-width="1.4"/></svg>
<span class="t" style="left:42.7px;top:279.3px;font-size:18px;color:#111;font-weight:700;letter-spacing:0.51px;">Project*</span>
<svg class="b" style="left:12.2px;top:305.5px;" width="13" height="13" viewBox="0 0 13 13"><rect x=".7" y=".7" width="11.6" height="11.6" fill="#fff" stroke="#8c8c8c" stroke-width="1.3"/><path d="M3 6.5H10" stroke="#222" stroke-width="1.5"/></svg>
<svg class="b" style="left:54.5px;top:301.5px;" width="22" height="22" viewBox="0 0 22 22"><path d="M2 4H8L10 2H19V7H2Z" fill="#d8a21c" stroke="#6b520f" stroke-width="1.2"/><rect x="1.5" y="6.5" width="19" height="14" fill="#f4e2a0" stroke="#6b520f" stroke-width="1.3"/><rect x="6.5" y="10" width="9" height="8" fill="#7aa7dc" stroke="#33507a" stroke-width="1.2"/><circle cx="11" cy="14" r="2.4" fill="#cfe0f4" stroke="#33507a" stroke-width=".8"/></svg>
<span class="t" style="left:83.7px;top:303.3px;font-size:18px;color:#111;font-weight:700;letter-spacing:0.09px;">Model (F3)</span>
<svg class="b" style="left:52.4px;top:329.5px;" width="13" height="13" viewBox="0 0 13 13"><rect x=".7" y=".7" width="11.6" height="11.6" fill="#fff" stroke="#8c8c8c" stroke-width="1.3"/><path d="M3 6.5H10" stroke="#222" stroke-width="1.5"/></svg>
<svg class="b" style="left:80.3px;top:333.0px;" width="13" height="13" viewBox="0 0 13 13"><path d="M1 7L4.5 11L12 1.5" fill="none" stroke="#1a9a1a" stroke-width="2.8"/></svg>
<svg class="b" style="left:94.5px;top:326.0px;" width="22" height="18" viewBox="0 0 22 18"><path d="M1 5L6 2H13L8 5Z M1 5H8V13H1Z M8 5L13 2V10L8 13Z" fill="#8db4e6" stroke="#2b4a7a" stroke-width="1.1" stroke-linejoin="round"/><path d="M9 7L14 4H21L16 7Z M9 7H16V16H9Z M16 7L21 4V13L16 16Z" fill="#5f8fd0" stroke="#2b4a7a" stroke-width="1.1" stroke-linejoin="round"/></svg>
<span class="t" style="left:122.8px;top:328.1px;font-size:16.5px;color:#1a1a1a;letter-spacing:-0.19px;">Geometry</span>
<svg class="b" style="left:121.5px;top:358.0px;" width="12" height="11" viewBox="0 0 12 11"><path d="M1 6L4 10L11 1" fill="none" stroke="#1a9a1a" stroke-width="2.2"/><path d="M3 2L9 9" stroke="#1a9a1a" stroke-width="2"/></svg>
<svg class="b" style="left:137.5px;top:351.0px;" width="20" height="18" viewBox="0 0 20 18"><path d="M2 2L12 4L18 7V16L8 14L2 11Z" fill="#5b86e0" stroke="#14286a" stroke-width="1.7" stroke-linejoin="round"/><path d="M2 2L8 5L18 7M8 5V14" fill="none" stroke="#14286a" stroke-width="1.3"/></svg>
<span class="t" style="left:163.6px;top:352.1px;font-size:16.5px;color:#1a1a1a;letter-spacing:-0.23px;">Surface Body</span>
<svg class="b" style="left:80.3px;top:381.0px;" width="13" height="13" viewBox="0 0 13 13"><path d="M1 7L4.5 11L12 1.5" fill="none" stroke="#1a9a1a" stroke-width="2.8"/></svg>
<svg class="b" style="left:95.0px;top:372.5px;" width="21" height="21" viewBox="0 0 21 21"><path d="M2 4H8L10 2H18V7H2Z" fill="#d8a21c" stroke="#6b520f" stroke-width="1.2"/><rect x="1.5" y="6.5" width="18" height="13.5" fill="#f7ecb5" stroke="#6b520f" stroke-width="1.3"/><path d="M6 9L12 8L16 14L13 18L8 16Z" fill="#e8a070" stroke="#9a5a30" stroke-width="1"/></svg>
<span class="t" style="left:122.2px;top:376.1px;font-size:16.5px;color:#1a1a1a;letter-spacing:-0.11px;">Materials</span>
<svg class="b" style="left:52.4px;top:401.5px;" width="13" height="13" viewBox="0 0 13 13"><rect x=".7" y=".7" width="11.6" height="11.6" fill="#fff" stroke="#8c8c8c" stroke-width="1.3"/><path d="M3 6.5H10" stroke="#222" stroke-width="1.5"/><path d="M6.5 3V10" stroke="#222" stroke-width="1.5"/></svg>
<svg class="b" style="left:80.3px;top:405.0px;" width="13" height="13" viewBox="0 0 13 13"><path d="M1 7L4.5 11L12 1.5" fill="none" stroke="#1a9a1a" stroke-width="2.8"/></svg>
<svg class="b" style="left:95.0px;top:397.0px;" width="21" height="21" viewBox="0 0 21 21"><path d="M10.5 1V10" stroke="#2eb82e" stroke-width="2"/><path d="M10.5 0L13.5 4.500H7.500Z" fill="#2eb82e"/><path d="M10.5 11L2 18" stroke="#3a78e0" stroke-width="2"/><path d="M0 20L2 14.500L5.500 18.500Z" fill="#3a78e0"/><path d="M10.5 11L19 17" stroke="#e03030" stroke-width="2"/><path d="M21 19L15.500 18L18 14Z" fill="#e03030"/><path d="M3 4L9 9M18 4L12 9" stroke="#333" stroke-width="1.4"/></svg>
<span class="t" style="left:122.8px;top:400.1px;font-size:16.5px;color:#1a1a1a;letter-spacing:-0.21px;">Coordinate Systems</span>
<svg class="b" style="left:52.4px;top:425.5px;" width="13" height="13" viewBox="0 0 13 13"><rect x=".7" y=".7" width="11.6" height="11.6" fill="#fff" stroke="#8c8c8c" stroke-width="1.3"/><path d="M3 6.5H10" stroke="#222" stroke-width="1.5"/></svg>
<svg class="b" style="left:80.3px;top:429.0px;" width="13" height="13" viewBox="0 0 13 13"><path d="M1 7L4.5 11L12 1.5" fill="none" stroke="#1a9a1a" stroke-width="2.8"/></svg>
<div class="b" style="left:121.2px;top:420.5px;width:43.1px;height:23.5px;background:#eeeeee;"></div>
<svg class="b" style="left:94.5px;top:422.0px;" width="22" height="18" viewBox="0 0 22 18"><path d="M1 5L6 2H13L8 5Z M1 5H8V13H1Z M8 5L13 2V10L8 13Z" fill="#c9d4e2" stroke="#2b4a7a" stroke-width="1.1" stroke-linejoin="round"/><path d="M9 7L14 4H21L16 7Z M9 7H16V16H9Z M16 7L21 4V13L16 16Z" fill="#a9b9ce" stroke="#2b4a7a" stroke-width="1.1" stroke-linejoin="round"/></svg>
<span class="t" style="left:122.2px;top:424.1px;font-size:16.5px;color:#1a1a1a;letter-spacing:-0.42px;">Mesh</span>
<svg class="b" style="left:121.0px;top:455.5px;" width="13" height="13" viewBox="0 0 13 13"><circle cx="6.5" cy="6.5" r="6" fill="#1f4fb0"/><rect x="2.5" y="5" width="8" height="3" fill="#fff"/></svg>
<svg class="b" style="left:135.0px;top:445.5px;" width="22" height="19" viewBox="0 0 22 19"><path d="M1 4C5 1 16 1 21 4V17C16 14 5 14 1 17Z" fill="#e2c43c" stroke="#8a6d10" stroke-width="1.1"/><path d="M6 2.500V15.200M11 2V14.800M16 2.500V15.200M1 8.300C6 5.500 16 5.500 21 8.300M1 12.600C6 9.800 16 9.800 21 12.600" fill="none" stroke="#8a6d10" stroke-width="1"/></svg>
<span class="t" style="left:163.1px;top:448.1px;font-size:16.5px;color:#1a1a1a;letter-spacing:-0.36px;">Face Meshing</span>
<svg class="b" style="left:121.0px;top:479.5px;" width="13" height="13" viewBox="0 0 13 13"><circle cx="6.5" cy="6.5" r="6" fill="#1f4fb0"/><rect x="2.5" y="5" width="8" height="3" fill="#fff"/></svg>
<svg class="b" style="left:135.0px;top:469.5px;" width="22" height="19" viewBox="0 0 22 19"><path d="M1 4C5 1 16 1 21 4V17C16 14 5 14 1 17Z" fill="#e2c43c" stroke="#8a6d10" stroke-width="1.1"/><path d="M6 2.500V15.200M11 2V14.800M16 2.500V15.200M1 8.300C6 5.500 16 5.500 21 8.300M1 12.600C6 9.800 16 9.800 21 12.600" fill="none" stroke="#8a6d10" stroke-width="1"/></svg>
<span class="t" style="left:163.1px;top:472.1px;font-size:16.5px;color:#1a1a1a;letter-spacing:-0.27px;">Face Meshing 2</span>
<svg class="b" style="left:121.0px;top:503.5px;" width="13" height="13" viewBox="0 0 13 13"><circle cx="6.5" cy="6.5" r="6" fill="#1f4fb0"/><rect x="2.5" y="5" width="8" height="3" fill="#fff"/></svg>
<svg class="b" style="left:135.0px;top:493.5px;" width="22" height="19" viewBox="0 0 22 19"><path d="M1 4C5 1 16 1 21 4V17C16 14 5 14 1 17Z" fill="#e2c43c" stroke="#8a6d10" stroke-width="1.1"/><path d="M6 2.500V15.200M11 2V14.800M16 2.500V15.200M1 8.300C6 5.500 16 5.500 21 8.300M1 12.600C6 9.800 16 9.800 21 12.600" fill="none" stroke="#8a6d10" stroke-width="1"/></svg>
<span class="t" style="left:163.1px;top:496.1px;font-size:16.5px;color:#1a1a1a;letter-spacing:-0.27px;">Face Meshing 3</span>
<svg class="b" style="left:121.0px;top:527.5px;" width="13" height="13" viewBox="0 0 13 13"><circle cx="6.5" cy="6.5" r="6" fill="#1f4fb0"/><rect x="2.5" y="5" width="8" height="3" fill="#fff"/></svg>
<svg class="b" style="left:135.0px;top:517.5px;" width="22" height="19" viewBox="0 0 22 19"><path d="M1 4C5 1 16 1 21 4V17C16 14 5 14 1 17Z" fill="#e2c43c" stroke="#8a6d10" stroke-width="1.1"/><path d="M6 2.500V15.200M11 2V14.800M16 2.500V15.200M1 8.300C6 5.500 16 5.500 21 8.300M1 12.600C6 9.800 16 9.800 21 12.600" fill="none" stroke="#8a6d10" stroke-width="1"/></svg>
<span class="t" style="left:163.1px;top:520.1px;font-size:16.5px;color:#1a1a1a;letter-spacing:-0.29px;">Face Meshing 4</span>
<svg class="b" style="left:121.0px;top:551.5px;" width="13" height="13" viewBox="0 0 13 13"><circle cx="6.5" cy="6.5" r="6" fill="#1f4fb0"/><rect x="2.5" y="5" width="8" height="3" fill="#fff"/></svg>
<svg class="b" style="left:135.0px;top:541.5px;" width="22" height="19" viewBox="0 0 22 19"><path d="M1 4C5 1 16 1 21 4V17C16 14 5 14 1 17Z" fill="#e2c43c" stroke="#8a6d10" stroke-width="1.1"/><path d="M6 2.500V15.200M11 2V14.800M16 2.500V15.200M1 8.300C6 5.500 16 5.500 21 8.300M1 12.600C6 9.800 16 9.800 21 12.600" fill="none" stroke="#8a6d10" stroke-width="1"/></svg>
<span class="t" style="left:163.1px;top:544.1px;font-size:16.5px;color:#1a1a1a;letter-spacing:-0.27px;">Face Meshing 5</span>
<svg class="b" style="left:121.5px;top:575.0px;" width="13" height="13" viewBox="0 0 13 13"><path d="M1 7L4.5 11L12 1.5" fill="none" stroke="#1a9a1a" stroke-width="2.8"/></svg>
<svg class="b" style="left:135.0px;top:564.5px;" width="22" height="22" viewBox="0 0 22 22"><path d="M1 2V16L9 21" fill="none" stroke="#d8a81e" stroke-width="1.5"/><path d="M4 2V14L10 18" fill="none" stroke="#d8a81e" stroke-width="1.2"/><path d="M13 1L21 4.500V13.500L13 17L6 13.500V4.500Z" fill="#7ab0ea" stroke="#23467e" stroke-width="1.2" stroke-linejoin="round"/><path d="M6 4.500L13 8L21 4.500M13 8V17" fill="none" stroke="#23467e" stroke-width="1.1"/><path d="M13 1L21 4.500L13 8L6 4.500Z" fill="#c0dcf8" stroke="#23467e" stroke-width="1"/></svg>
<span class="t" style="left:163.1px;top:568.1px;font-size:16.5px;color:#1a1a1a;letter-spacing:-0.47px;">Edge Sizing</span>
<svg class="b" style="left:121.5px;top:599.0px;" width="13" height="13" viewBox="0 0 13 13"><path d="M1 7L4.5 11L12 1.5" fill="none" stroke="#1a9a1a" stroke-width="2.8"/></svg>
<svg class="b" style="left:135.0px;top:588.5px;" width="22" height="22" viewBox="0 0 22 22"><path d="M1 2V16L9 21" fill="none" stroke="#d8a81e" stroke-width="1.5"/><path d="M4 2V14L10 18" fill="none" stroke="#d8a81e" stroke-width="1.2"/><path d="M13 1L21 4.500V13.500L13 17L6 13.500V4.500Z" fill="#7ab0ea" stroke="#23467e" stroke-width="1.2" stroke-linejoin="round"/><path d="M6 4.500L13 8L21 4.500M13 8V17" fill="none" stroke="#23467e" stroke-width="1.1"/><path d="M13 1L21 4.500L13 8L6 4.500Z" fill="#c0dcf8" stroke="#23467e" stroke-width="1"/></svg>
<span class="t" style="left:163.1px;top:592.1px;font-size:16.5px;color:#1a1a1a;letter-spacing:-0.40px;">Edge Sizing 2</span>
<svg class="b" style="left:121.5px;top:623.0px;" width="13" height="13" viewBox="0 0 13 13"><path d="M1 7L4.5 11L12 1.5" fill="none" stroke="#1a9a1a" stroke-width="2.8"/></svg>
<svg class="b" style="left:135.0px;top:612.5px;" width="22" height="22" viewBox="0 0 22 22"><path d="M1 2V16L9 21" fill="none" stroke="#d8a81e" stroke-width="1.5"/><path d="M4 2V14L10 18" fill="none" stroke="#d8a81e" stroke-width="1.2"/><path d="M13 1L21 4.500V13.500L13 17L6 13.500V4.500Z" fill="#7ab0ea" stroke="#23467e" stroke-width="1.2" stroke-linejoin="round"/><path d="M6 4.500L13 8L21 4.500M13 8V17" fill="none" stroke="#23467e" stroke-width="1.1"/><path d="M13 1L21 4.500L13 8L6 4.500Z" fill="#c0dcf8" stroke="#23467e" stroke-width="1"/></svg>
<span class="t" style="left:163.1px;top:616.1px;font-size:16.5px;color:#1a1a1a;letter-spacing:-0.40px;">Edge Sizing 3</span>
<svg class="b" style="left:121.5px;top:647.0px;" width="13" height="13" viewBox="0 0 13 13"><path d="M1 7L4.5 11L12 1.5" fill="none" stroke="#1a9a1a" stroke-width="2.8"/></svg>
<svg class="b" style="left:135.0px;top:636.5px;" width="22" height="22" viewBox="0 0 22 22"><path d="M1 2V16L9 21" fill="none" stroke="#d8a81e" stroke-width="1.5"/><path d="M4 2V14L10 18" fill="none" stroke="#d8a81e" stroke-width="1.2"/><path d="M13 1L21 4.500V13.500L13 17L6 13.500V4.500Z" fill="#7ab0ea" stroke="#23467e" stroke-width="1.2" stroke-linejoin="round"/><path d="M6 4.500L13 8L21 4.500M13 8V17" fill="none" stroke="#23467e" stroke-width="1.1"/><path d="M13 1L21 4.500L13 8L6 4.500Z" fill="#c0dcf8" stroke="#23467e" stroke-width="1"/></svg>
<span class="t" style="left:163.1px;top:640.1px;font-size:16.5px;color:#1a1a1a;letter-spacing:-0.40px;">Edge Sizing 4</span>
<svg class="b" style="left:121.5px;top:671.0px;" width="13" height="13" viewBox="0 0 13 13"><path d="M1 7L4.5 11L12 1.5" fill="none" stroke="#1a9a1a" stroke-width="2.8"/></svg>
<svg class="b" style="left:135.0px;top:660.5px;" width="22" height="22" viewBox="0 0 22 22"><path d="M1 2V16L9 21" fill="none" stroke="#d8a81e" stroke-width="1.5"/><path d="M4 2V14L10 18" fill="none" stroke="#d8a81e" stroke-width="1.2"/><path d="M13 1L21 4.500V13.500L13 17L6 13.500V4.500Z" fill="#7ab0ea" stroke="#23467e" stroke-width="1.2" stroke-linejoin="round"/><path d="M6 4.500L13 8L21 4.500M13 8V17" fill="none" stroke="#23467e" stroke-width="1.1"/><path d="M13 1L21 4.500L13 8L6 4.500Z" fill="#c0dcf8" stroke="#23467e" stroke-width="1"/></svg>
<span class="t" style="left:163.1px;top:664.1px;font-size:16.5px;color:#1a1a1a;letter-spacing:-0.40px;">Edge Sizing 5</span>
<svg class="b" style="left:121.5px;top:695.0px;" width="13" height="13" viewBox="0 0 13 13"><path d="M1 7L4.5 11L12 1.5" fill="none" stroke="#1a9a1a" stroke-width="2.8"/></svg>
<svg class="b" style="left:135.0px;top:684.5px;" width="22" height="22" viewBox="0 0 22 22"><path d="M1 2V16L9 21" fill="none" stroke="#d8a81e" stroke-width="1.5"/><path d="M4 2V14L10 18" fill="none" stroke="#d8a81e" stroke-width="1.2"/><path d="M13 1L21 4.500V13.500L13 17L6 13.500V4.500Z" fill="#7ab0ea" stroke="#23467e" stroke-width="1.2" stroke-linejoin="round"/><path d="M6 4.500L13 8L21 4.500M13 8V17" fill="none" stroke="#23467e" stroke-width="1.1"/><path d="M13 1L21 4.500L13 8L6 4.500Z" fill="#c0dcf8" stroke="#23467e" stroke-width="1"/></svg>
<span class="t" style="left:163.1px;top:688.1px;font-size:16.5px;color:#1a1a1a;letter-spacing:-0.45px;">Edge Sizing 6</span>
<svg class="b" style="left:121.5px;top:719.0px;" width="13" height="13" viewBox="0 0 13 13"><path d="M1 7L4.5 11L12 1.5" fill="none" stroke="#1a9a1a" stroke-width="2.8"/></svg>
<svg class="b" style="left:135.0px;top:708.5px;" width="22" height="22" viewBox="0 0 22 22"><path d="M1 2V16L9 21" fill="none" stroke="#d8a81e" stroke-width="1.5"/><path d="M4 2V14L10 18" fill="none" stroke="#d8a81e" stroke-width="1.2"/><path d="M13 1L21 4.500V13.500L13 17L6 13.500V4.500Z" fill="#7ab0ea" stroke="#23467e" stroke-width="1.2" stroke-linejoin="round"/><path d="M6 4.500L13 8L21 4.500M13 8V17" fill="none" stroke="#23467e" stroke-width="1.1"/><path d="M13 1L21 4.500L13 8L6 4.500Z" fill="#c0dcf8" stroke="#23467e" stroke-width="1"/></svg>
<span class="t" style="left:163.1px;top:712.1px;font-size:16.5px;color:#1a1a1a;letter-spacing:-0.38px;">Edge Sizing 7</span>
<svg class="b" style="left:121.5px;top:743.0px;" width="13" height="13" viewBox="0 0 13 13"><path d="M1 7L4.5 11L12 1.5" fill="none" stroke="#1a9a1a" stroke-width="2.8"/></svg>
<svg class="b" style="left:135.0px;top:732.5px;" width="22" height="22" viewBox="0 0 22 22"><path d="M1 2V16L9 21" fill="none" stroke="#d8a81e" stroke-width="1.5"/><path d="M4 2V14L10 18" fill="none" stroke="#d8a81e" stroke-width="1.2"/><path d="M13 1L21 4.500V13.500L13 17L6 13.500V4.500Z" fill="#7ab0ea" stroke="#23467e" stroke-width="1.2" stroke-linejoin="round"/><path d="M6 4.500L13 8L21 4.500M13 8V17" fill="none" stroke="#23467e" stroke-width="1.1"/><path d="M13 1L21 4.500L13 8L6 4.500Z" fill="#c0dcf8" stroke="#23467e" stroke-width="1"/></svg>
<span class="t" style="left:163.1px;top:736.1px;font-size:16.5px;color:#1a1a1a;letter-spacing:-0.45px;">Edge Sizing 8</span>
<svg class="b" style="left:121.5px;top:767.0px;" width="13" height="13" viewBox="0 0 13 13"><path d="M1 7L4.5 11L12 1.5" fill="none" stroke="#1a9a1a" stroke-width="2.8"/></svg>
<svg class="b" style="left:135.0px;top:756.5px;" width="22" height="22" viewBox="0 0 22 22"><path d="M1 2V16L9 21" fill="none" stroke="#d8a81e" stroke-width="1.5"/><path d="M4 2V14L10 18" fill="none" stroke="#d8a81e" stroke-width="1.2"/><path d="M13 1L21 4.500V13.500L13 17L6 13.500V4.500Z" fill="#7ab0ea" stroke="#23467e" stroke-width="1.2" stroke-linejoin="round"/><path d="M6 4.500L13 8L21 4.500M13 8V17" fill="none" stroke="#23467e" stroke-width="1.1"/><path d="M13 1L21 4.500L13 8L6 4.500Z" fill="#c0dcf8" stroke="#23467e" stroke-width="1"/></svg>
<span class="t" style="left:163.1px;top:760.1px;font-size:16.5px;color:#1a1a1a;letter-spacing:-0.45px;">Edge Sizing 9</span>
<svg class="b" style="left:121.5px;top:791.0px;" width="13" height="13" viewBox="0 0 13 13"><path d="M1 7L4.5 11L12 1.5" fill="none" stroke="#1a9a1a" stroke-width="2.8"/></svg>
<svg class="b" style="left:135.0px;top:780.5px;" width="22" height="22" viewBox="0 0 22 22"><path d="M1 2V16L9 21" fill="none" stroke="#d8a81e" stroke-width="1.5"/><path d="M4 2V14L10 18" fill="none" stroke="#d8a81e" stroke-width="1.2"/><path d="M13 1L21 4.500V13.500L13 17L6 13.500V4.500Z" fill="#7ab0ea" stroke="#23467e" stroke-width="1.2" stroke-linejoin="round"/><path d="M6 4.500L13 8L21 4.500M13 8V17" fill="none" stroke="#23467e" stroke-width="1.1"/><path d="M13 1L21 4.500L13 8L6 4.500Z" fill="#c0dcf8" stroke="#23467e" stroke-width="1"/></svg>
<span class="t" style="left:163.1px;top:784.1px;font-size:16.5px;color:#1a1a1a;letter-spacing:-0.44px;">Edge Sizing 10</span>
<svg class="b" style="left:121.5px;top:815.0px;" width="13" height="13" viewBox="0 0 13 13"><path d="M1 7L4.5 11L12 1.5" fill="none" stroke="#1a9a1a" stroke-width="2.8"/></svg>
<svg class="b" style="left:135.0px;top:804.5px;" width="22" height="22" viewBox="0 0 22 22"><path d="M1 2V16L9 21" fill="none" stroke="#d8a81e" stroke-width="1.5"/><path d="M4 2V14L10 18" fill="none" stroke="#d8a81e" stroke-width="1.2"/><path d="M13 1L21 4.500V13.500L13 17L6 13.500V4.500Z" fill="#7ab0ea" stroke="#23467e" stroke-width="1.2" stroke-linejoin="round"/><path d="M6 4.500L13 8L21 4.500M13 8V17" fill="none" stroke="#23467e" stroke-width="1.1"/><path d="M13 1L21 4.500L13 8L6 4.500Z" fill="#c0dcf8" stroke="#23467e" stroke-width="1"/></svg>
<span class="t" style="left:163.1px;top:808.1px;font-size:16.5px;color:#1a1a1a;letter-spacing:-0.30px;">Edge Sizing 11</span>
<svg class="b" style="left:121.5px;top:839.0px;" width="13" height="13" viewBox="0 0 13 13"><path d="M1 7L4.5 11L12 1.5" fill="none" stroke="#1a9a1a" stroke-width="2.8"/></svg>
<svg class="b" style="left:135.0px;top:828.5px;" width="22" height="22" viewBox="0 0 22 22"><path d="M1 2V16L9 21" fill="none" stroke="#d8a81e" stroke-width="1.5"/><path d="M4 2V14L10 18" fill="none" stroke="#d8a81e" stroke-width="1.2"/><path d="M13 1L21 4.500V13.500L13 17L6 13.500V4.500Z" fill="#7ab0ea" stroke="#23467e" stroke-width="1.2" stroke-linejoin="round"/><path d="M6 4.500L13 8L21 4.500M13 8V17" fill="none" stroke="#23467e" stroke-width="1.1"/><path d="M13 1L21 4.500L13 8L6 4.500Z" fill="#c0dcf8" stroke="#23467e" stroke-width="1"/></svg>
<span class="t" style="left:163.1px;top:832.1px;font-size:16.5px;color:#1a1a1a;letter-spacing:-0.38px;">Edge Sizing 12</span>
<svg class="b" style="left:121.5px;top:863.0px;" width="13" height="13" viewBox="0 0 13 13"><path d="M1 7L4.5 11L12 1.5" fill="none" stroke="#1a9a1a" stroke-width="2.8"/></svg>
<svg class="b" style="left:135.0px;top:852.5px;" width="22" height="22" viewBox="0 0 22 22"><path d="M1 2V16L9 21" fill="none" stroke="#d8a81e" stroke-width="1.5"/><path d="M4 2V14L10 18" fill="none" stroke="#d8a81e" stroke-width="1.2"/><path d="M13 1L21 4.500V13.500L13 17L6 13.500V4.500Z" fill="#7ab0ea" stroke="#23467e" stroke-width="1.2" stroke-linejoin="round"/><path d="M6 4.500L13 8L21 4.500M13 8V17" fill="none" stroke="#23467e" stroke-width="1.1"/><path d="M13 1L21 4.500L13 8L6 4.500Z" fill="#c0dcf8" stroke="#23467e" stroke-width="1"/></svg>
<span class="t" style="left:163.1px;top:856.1px;font-size:16.5px;color:#1a1a1a;letter-spacing:-0.38px;">Edge Sizing 13</span>
<svg class="b" style="left:121.5px;top:887.0px;" width="13" height="13" viewBox="0 0 13 13"><path d="M1 7L4.5 11L12 1.5" fill="none" stroke="#1a9a1a" stroke-width="2.8"/></svg>
<svg class="b" style="left:135.0px;top:876.5px;" width="22" height="22" viewBox="0 0 22 22"><path d="M1 2V16L9 21" fill="none" stroke="#d8a81e" stroke-width="1.5"/><path d="M4 2V14L10 18" fill="none" stroke="#d8a81e" stroke-width="1.2"/><path d="M13 1L21 4.500V13.500L13 17L6 13.500V4.500Z" fill="#7ab0ea" stroke="#23467e" stroke-width="1.2" stroke-linejoin="round"/><path d="M6 4.500L13 8L21 4.500M13 8V17" fill="none" stroke="#23467e" stroke-width="1.1"/><path d="M13 1L21 4.500L13 8L6 4.500Z" fill="#c0dcf8" stroke="#23467e" stroke-width="1"/></svg>
<span class="t" style="left:163.1px;top:880.1px;font-size:16.5px;color:#1a1a1a;letter-spacing:-0.38px;">Edge Sizing 14</span>
<div class="b" style="left:0.0px;top:1362.0px;width:721.0px;height:30.5px;background:#eeeef2;"></div>
<div class="b" style="left:0.0px;top:1361.6px;width:721.0px;height:1.0px;background:#dcdce2;"></div>
<div class="b" style="left:720.5px;top:1362.0px;width:1.0px;height:30.0px;background:#dcdce2;"></div>
<span class="t" style="left:7.3px;top:1369.3px;font-size:17.5px;color:#444;letter-spacing:0.21px;">Details of "Mesh"</span>
<div class="b dots" style="left:151.0px;top:1372.5px;width:465.0px;height:9px"></div>
<svg class="b" style="left:622.9px;top:1374.2px;" width="13" height="7.5" viewBox="0 0 13 7.5"><path d="M0 0H13L6.5 7Z" fill="#1e1e1e"/></svg>
<svg class="b" style="left:647.7px;top:1368.7px;" width="11" height="17" viewBox="0 0 11 17"><path d="M3 1H8.5" stroke="#1e1e1e" stroke-width="1.6"/><path d="M3.6 1V8.5" stroke="#1e1e1e" stroke-width="1.5"/><rect x="6" y="1" width="2.4" height="7.5" fill="#1e1e1e"/><path d="M0.8 8.8H10.2M5.5 8.8V16.5" stroke="#1e1e1e" stroke-width="1.8"/></svg>
<svg class="b" style="left:670.0px;top:1370.2px;" width="16" height="14" viewBox="0 0 16 14"><rect x="1" y="1.6" width="13.6" height="11" fill="none" stroke="#1e1e1e" stroke-width="1.6"/><path d="M1 1.8H14.6" stroke="#1e1e1e" stroke-width="2.4"/></svg>
<svg class="b" style="left:695.9px;top:1371.2px;" width="13" height="12" viewBox="0 0 13 12"><path d="M1.2 1L11.8 11M11.8 1L1.2 11" stroke="#1e1e1e" stroke-width="2.1"/></svg>
<div class="b" style="left:0.0px;top:1392.0px;width:721.0px;height:708.5px;background:#eeeef2;"></div>
<div class="b" style="left:20.0px;top:1392.9px;width:675.2px;height:707.5px;background:#fff;"></div>
<svg class="b" style="left:3.0px;top:1400.2px;" width="13" height="13" viewBox="0 0 13 13"><rect x=".7" y=".7" width="11.6" height="11.6" fill="#fff" stroke="#8c8c8c" stroke-width="1.3"/><path d="M3 6.500H10" stroke="#222" stroke-width="1.5"/></svg>
<span class="t" style="left:24.9px;top:1397.9px;font-size:17.5px;color:#111;font-weight:700;letter-spacing:-0.79px;">Display</span>
<div class="b" style="left:20.0px;top:1392.0px;width:675.2px;height:1.8px;background:#a5a5a5;"></div>
<span class="t" style="left:24.6px;top:1424.9px;font-size:17.5px;color:#1a1a1a;letter-spacing:-0.35px;">Display Style</span>
<span class="t" style="left:257.2px;top:1424.9px;font-size:17.5px;color:#1a1a1a;letter-spacing:-0.24px;">Use Geometry Setting</span>
<div class="b" style="left:252.0px;top:1419.9px;width:1.8px;height:27.0px;background:#a5a5a5;"></div>
<div class="b" style="left:20.0px;top:1419.0px;width:675.2px;height:1.8px;background:#a5a5a5;"></div>
<svg class="b" style="left:3.0px;top:1454.2px;" width="13" height="13" viewBox="0 0 13 13"><rect x=".7" y=".7" width="11.6" height="11.6" fill="#fff" stroke="#8c8c8c" stroke-width="1.3"/><path d="M3 6.500H10" stroke="#222" stroke-width="1.5"/></svg>
<span class="t" style="left:24.9px;top:1451.9px;font-size:17.5px;color:#111;font-weight:700;letter-spacing:-0.43px;">Defaults</span>
<div class="b" style="left:20.0px;top:1446.0px;width:675.2px;height:1.8px;background:#a5a5a5;"></div>
<span class="t" style="left:24.6px;top:1478.9px;font-size:17.5px;color:#1a1a1a;letter-spacing:-0.60px;">Physics Preference</span>
<span class="t" style="left:257.8px;top:1478.9px;font-size:17.5px;color:#1a1a1a;transform:scaleX(0.884);transform-origin:0 0;">CFD</span>
<div class="b" style="left:252.0px;top:1473.9px;width:1.8px;height:27.0px;background:#a5a5a5;"></div>
<div class="b" style="left:20.0px;top:1473.0px;width:675.2px;height:1.8px;background:#a5a5a5;"></div>
<span class="t" style="left:25.1px;top:1505.9px;font-size:17.5px;color:#1a1a1a;letter-spacing:-0.47px;">Solver Preference</span>
<span class="t" style="left:257.2px;top:1505.9px;font-size:17.5px;color:#1a1a1a;letter-spacing:0.25px;">Fluent</span>
<div class="b" style="left:252.0px;top:1500.9px;width:1.8px;height:27.0px;background:#a5a5a5;"></div>
<div class="b" style="left:20.0px;top:1500.0px;width:675.2px;height:1.8px;background:#a5a5a5;"></div>
<span class="t" style="left:24.6px;top:1532.9px;font-size:17.5px;color:#1a1a1a;letter-spacing:-0.21px;">Element Order</span>
<span class="t" style="left:257.2px;top:1532.9px;font-size:17.5px;color:#1a1a1a;letter-spacing:-0.35px;">Linear</span>
<div class="b" style="left:252.0px;top:1527.9px;width:1.8px;height:27.0px;background:#a5a5a5;"></div>
<div class="b" style="left:20.0px;top:1527.0px;width:675.2px;height:1.8px;background:#a5a5a5;"></div>
<div class="b" style="left:25.9px;top:1559.9px;width:17.0px;height:17.0px;background:#fff;border:1.2px solid #d9d9d9;box-sizing:border-box;"></div>
<span class="t" style="left:49.0px;top:1559.9px;font-size:17.5px;color:#1a1a1a;letter-spacing:-0.57px;">Element Size</span>
<span class="t" style="left:257.2px;top:1559.9px;font-size:17.5px;color:#1a1a1a;letter-spacing:0.33px;">Default</span>
<div class="b" style="left:252.0px;top:1554.9px;width:1.8px;height:27.0px;background:#a5a5a5;"></div>
<div class="b" style="left:20.0px;top:1554.0px;width:675.2px;height:1.8px;background:#a5a5a5;"></div>
<span class="t" style="left:24.6px;top:1586.9px;font-size:17.5px;color:#1a1a1a;letter-spacing:-0.25px;">Export Format</span>
<span class="t" style="left:257.8px;top:1586.9px;font-size:17.5px;color:#1a1a1a;letter-spacing:0.04px;">Standard</span>
<div class="b" style="left:252.0px;top:1581.9px;width:1.8px;height:27.0px;background:#a5a5a5;"></div>
<div class="b" style="left:20.0px;top:1581.0px;width:675.2px;height:1.8px;background:#a5a5a5;"></div>
<span class="t" style="left:24.6px;top:1613.9px;font-size:17.5px;color:#1a1a1a;letter-spacing:-0.34px;">Export Preview Surface Mesh</span>
<span class="t" style="left:257.2px;top:1613.9px;font-size:17.5px;color:#1a1a1a;letter-spacing:0.50px;">No</span>
<div class="b" style="left:252.0px;top:1608.9px;width:1.8px;height:27.0px;background:#a5a5a5;"></div>
<div class="b" style="left:20.0px;top:1608.0px;width:675.2px;height:1.8px;background:#a5a5a5;"></div>
<svg class="b" style="left:3.0px;top:1643.2px;" width="13" height="13" viewBox="0 0 13 13"><rect x=".7" y=".7" width="11.6" height="11.6" fill="#fff" stroke="#8c8c8c" stroke-width="1.3"/><path d="M3 6.500H10" stroke="#222" stroke-width="1.5"/></svg>
<span class="t" style="left:25.4px;top:1640.9px;font-size:17.5px;color:#111;font-weight:700;transform:scaleX(0.910);transform-origin:0 0;">Sizing</span>
<div class="b" style="left:20.0px;top:1635.0px;width:675.2px;height:1.8px;background:#a5a5a5;"></div>
<span class="t" style="left:24.6px;top:1667.9px;font-size:17.5px;color:#1a1a1a;letter-spacing:-0.17px;">Use Adaptive Sizing</span>
<span class="t" style="left:258.3px;top:1667.9px;font-size:17.5px;color:#1a1a1a;transform:scaleX(0.757);transform-origin:0 0;">Yes</span>
<div class="b" style="left:252.0px;top:1662.9px;width:1.8px;height:27.0px;background:#a5a5a5;"></div>
<div class="b" style="left:20.0px;top:1662.0px;width:675.2px;height:1.8px;background:#a5a5a5;"></div>
<span class="t" style="left:24.6px;top:1694.9px;font-size:17.5px;color:#1a1a1a;letter-spacing:0.22px;">Resolution</span>
<span class="t" style="left:257.2px;top:1694.9px;font-size:17.5px;color:#1a1a1a;letter-spacing:-0.10px;">Default (2)</span>
<div class="b" style="left:252.0px;top:1689.9px;width:1.8px;height:27.0px;background:#a5a5a5;"></div>
<div class="b" style="left:20.0px;top:1689.0px;width:675.2px;height:1.8px;background:#a5a5a5;"></div>
<span class="t" style="left:24.6px;top:1721.9px;font-size:17.5px;color:#1a1a1a;letter-spacing:0.17px;">Mesh Defeaturing</span>
<span class="t" style="left:258.3px;top:1721.9px;font-size:17.5px;color:#1a1a1a;transform:scaleX(0.757);transform-origin:0 0;">Yes</span>
<div class="b" style="left:252.0px;top:1716.9px;width:1.8px;height:27.0px;background:#a5a5a5;"></div>
<div class="b" style="left:20.0px;top:1716.0px;width:675.2px;height:1.8px;background:#a5a5a5;"></div>
<div class="b" style="left:25.9px;top:1748.9px;width:17.0px;height:17.0px;background:#fff;border:1.2px solid #d9d9d9;box-sizing:border-box;"></div>
<span class="t" style="left:49.0px;top:1748.9px;font-size:17.5px;color:#1a1a1a;letter-spacing:-0.29px;">Defeature Size</span>
<span class="t" style="left:257.2px;top:1748.9px;font-size:17.5px;color:#1a1a1a;letter-spacing:-0.56px;">1.e-003 mm</span>
<div class="b" style="left:252.0px;top:1743.9px;width:1.8px;height:27.0px;background:#a5a5a5;"></div>
<div class="b" style="left:20.0px;top:1743.0px;width:675.2px;height:1.8px;background:#a5a5a5;"></div>
<span class="t" style="left:25.6px;top:1775.9px;font-size:17.5px;color:#1a1a1a;letter-spacing:0.06px;">Transition</span>
<span class="t" style="left:257.8px;top:1775.9px;font-size:17.5px;color:#1a1a1a;letter-spacing:-0.08px;">Slow</span>
<div class="b" style="left:252.0px;top:1770.9px;width:1.8px;height:27.0px;background:#a5a5a5;"></div>
<div class="b" style="left:20.0px;top:1770.0px;width:675.2px;height:1.8px;background:#a5a5a5;"></div>
<span class="t" style="left:25.1px;top:1802.9px;font-size:17.5px;color:#1a1a1a;letter-spacing:-0.19px;">Span Angle Center</span>
<span class="t" style="left:257.2px;top:1802.9px;font-size:17.5px;color:#1a1a1a;">Fine</span>
<div class="b" style="left:252.0px;top:1797.9px;width:1.8px;height:27.0px;background:#a5a5a5;"></div>
<div class="b" style="left:20.0px;top:1797.0px;width:675.2px;height:1.8px;background:#a5a5a5;"></div>
<span class="t" style="left:24.4px;top:1829.9px;font-size:17.5px;color:#1a1a1a;letter-spacing:-0.25px;">Initial Size Seed</span>
<span class="t" style="left:257.2px;top:1829.9px;font-size:17.5px;color:#1a1a1a;letter-spacing:-0.58px;">Part</span>
<div class="b" style="left:252.0px;top:1824.9px;width:1.8px;height:27.0px;background:#a5a5a5;"></div>
<div class="b" style="left:20.0px;top:1824.0px;width:675.2px;height:1.8px;background:#a5a5a5;"></div>
<div class="b" style="left:252.8px;top:1851.9px;width:442.4px;height:27.0px;background:#e9e7e4;"></div>
<span class="t" style="left:24.6px;top:1856.9px;font-size:17.5px;color:#1a1a1a;letter-spacing:0.07px;">Bounding Box Diagonal</span>
<span class="t" style="left:257.2px;top:1856.9px;font-size:17.5px;color:#1a1a1a;letter-spacing:-0.68px;">18415 mm</span>
<div class="b" style="left:252.0px;top:1851.9px;width:1.8px;height:27.0px;background:#a5a5a5;"></div>
<div class="b" style="left:20.0px;top:1851.0px;width:675.2px;height:1.8px;background:#a5a5a5;"></div>
<div class="b" style="left:252.8px;top:1878.9px;width:442.4px;height:27.0px;background:#e9e7e4;"></div>
<span class="t" style="left:25.9px;top:1883.9px;font-size:17.5px;color:#1a1a1a;letter-spacing:-0.55px;">Average Surface Area</span>
<span class="t" style="left:257.8px;top:1883.9px;font-size:17.5px;color:#1a1a1a;letter-spacing:-0.50px;">2.8742e+007 mm²</span>
<div class="b" style="left:252.0px;top:1878.9px;width:1.8px;height:27.0px;background:#a5a5a5;"></div>
<div class="b" style="left:20.0px;top:1878.0px;width:675.2px;height:1.8px;background:#a5a5a5;"></div>
<div class="b" style="left:252.8px;top:1905.9px;width:442.4px;height:27.0px;background:#e9e7e4;"></div>
<span class="t" style="left:24.6px;top:1910.9px;font-size:17.5px;color:#1a1a1a;">Minimum Edge Length</span>
<span class="t" style="left:257.8px;top:1910.9px;font-size:17.5px;color:#1a1a1a;letter-spacing:-0.72px;">7.3204 mm</span>
<div class="b" style="left:252.0px;top:1905.9px;width:1.8px;height:27.0px;background:#a5a5a5;"></div>
<div class="b" style="left:20.0px;top:1905.0px;width:675.2px;height:1.8px;background:#a5a5a5;"></div>
<svg class="b" style="left:3.0px;top:1940.2px;" width="13" height="13" viewBox="0 0 13 13"><rect x=".7" y=".7" width="11.6" height="11.6" fill="#fff" stroke="#8c8c8c" stroke-width="1.3"/><path d="M3 6.500H10" stroke="#222" stroke-width="1.5"/></svg>
<span class="t" style="left:25.4px;top:1937.9px;font-size:17.5px;color:#111;font-weight:700;letter-spacing:-0.62px;">Quality</span>
<div class="b" style="left:20.0px;top:1932.0px;width:675.2px;height:1.8px;background:#a5a5a5;"></div>
<span class="t" style="left:25.1px;top:1964.9px;font-size:17.5px;color:#1a1a1a;letter-spacing:-0.28px;">Check Mesh Quality</span>
<span class="t" style="left:258.3px;top:1964.9px;font-size:17.5px;color:#1a1a1a;transform:scaleX(0.886);transform-origin:0 0;">Yes, Errors</span>
<div class="b" style="left:252.0px;top:1959.9px;width:1.8px;height:27.0px;background:#a5a5a5;"></div>
<div class="b" style="left:20.0px;top:1959.0px;width:675.2px;height:1.8px;background:#a5a5a5;"></div>
<div class="b" style="left:25.9px;top:1991.9px;width:17.0px;height:17.0px;background:#fff;border:1.2px solid #d9d9d9;box-sizing:border-box;"></div>
<span class="t" style="left:50.0px;top:1991.9px;font-size:17.5px;color:#1a1a1a;letter-spacing:-0.43px;">Target Skewness</span>
<span class="t" style="left:257.2px;top:1991.9px;font-size:17.5px;color:#1a1a1a;letter-spacing:-0.34px;">Default (0.900000)</span>
<div class="b" style="left:252.0px;top:1986.9px;width:1.8px;height:27.0px;background:#a5a5a5;"></div>
<div class="b" style="left:20.0px;top:1986.0px;width:675.2px;height:1.8px;background:#a5a5a5;"></div>
<span class="t" style="left:25.1px;top:2018.9px;font-size:17.5px;color:#1a1a1a;letter-spacing:0.31px;">Smoothing</span>
<span class="t" style="left:257.2px;top:2018.9px;font-size:17.5px;color:#1a1a1a;letter-spacing:0.40px;">Medium</span>
<div class="b" style="left:252.0px;top:2013.9px;width:1.8px;height:27.0px;background:#a5a5a5;"></div>
<div class="b" style="left:20.0px;top:2013.0px;width:675.2px;height:1.8px;background:#a5a5a5;"></div>
<span class="t" style="left:24.6px;top:2045.9px;font-size:17.5px;color:#1a1a1a;letter-spacing:0.03px;">Mesh Metric</span>
<span class="t" style="left:257.8px;top:2045.9px;font-size:17.5px;color:#1a1a1a;letter-spacing:-0.64px;">Skewness</span>
<div class="b" style="left:252.0px;top:2040.9px;width:1.8px;height:27.0px;background:#a5a5a5;"></div>
<div class="b" style="left:20.0px;top:2040.0px;width:675.2px;height:1.8px;background:#a5a5a5;"></div>
<div class="b" style="left:252.8px;top:2067.9px;width:442.4px;height:27.0px;background:#e9e7e4;"></div>
<div class="b" style="left:25.9px;top:2072.9px;width:17.0px;height:17.0px;background:#fff;border:1.2px solid #d9d9d9;box-sizing:border-box;"></div>
<span class="t" style="left:49.0px;top:2072.9px;font-size:17.5px;color:#1a1a1a;letter-spacing:1.50px;">Min</span>
<span class="t" style="left:257.2px;top:2072.9px;font-size:17.5px;color:#1a1a1a;letter-spacing:-0.55px;">1.3057e-010</span>
<div class="b" style="left:252.0px;top:2067.9px;width:1.8px;height:27.0px;background:#a5a5a5;"></div>
<div class="b" style="left:20.0px;top:2067.0px;width:675.2px;height:1.8px;background:#a5a5a5;"></div>
<div class="b" style="left:252.8px;top:2094.9px;width:442.4px;height:5.5px;background:#e9e7e4;"></div>
<div class="b" style="left:25.9px;top:2099.9px;width:17.0px;height:0.5px;background:#fff;border:1.2px solid #d9d9d9;box-sizing:border-box;border-bottom:none;"></div>
<div class="b" style="left:252.0px;top:2094.9px;width:1.8px;height:5.5px;background:#a5a5a5;"></div>
<div class="b" style="left:20.0px;top:2094.0px;width:675.2px;height:1.8px;background:#a5a5a5;"></div>
<div class="b" style="left:19.3px;top:1392.9px;width:1.8px;height:707.5px;background:#a5a5a5;"></div>
<div class="b" style="left:694.3px;top:1392.9px;width:1.8px;height:707.5px;background:#a5a5a5;"></div>
<div class="b" style="left:708.0px;top:1418.0px;width:3.4px;height:502.0px;background:#8e8e8e;"></div>
<div class="b" style="left:0.0px;top:2100.4px;width:721.0px;height:27.6px;background:#eeeef2;"></div>
<div class="b" style="left:1.0px;top:2100.4px;width:68.5px;height:27.6px;background:#f5f5f8;border:1px solid #dadade;box-sizing:border-box;border-top:none;"></div>
<span class="t" style="left:8.3px;top:2105.7px;font-size:17.5px;color:#2b7fc0;letter-spacing:0.06px;">Details</span>
<span class="t" style="left:79.0px;top:2105.7px;font-size:17.5px;color:#444;letter-spacing:-0.18px;">Section Planes</span>
<div class="b" style="left:727px;top:244.7px;width:3113px;height:1441.3px;background:linear-gradient(#6a8bdf 0%,#ffffff 100%)"></div>
<span class="t" style="left:3683.2px;top:280.8px;font-size:45px;color:#fff;font-weight:700;transform:scaleX(0.774);transform-origin:0 0;-webkit-text-stroke:0.9px #fff;">ANSYS</span>
<span class="t" style="left:3711.8px;top:323.9px;font-size:26px;color:#eef2fc;transform:scaleX(0.933);transform-origin:0 0;">2020</span>
<span class="t" style="left:3771.6px;top:323.9px;font-size:26px;color:#fff;font-weight:700;transform:scaleX(0.935);transform-origin:0 0;">R1</span>
<svg class="b" style="left:3600.0px;top:1270.0px;" width="240" height="260" viewBox="0 0 240 260"><defs><radialGradient id="gb" cx=".4" cy=".35" r=".7"><stop offset="0" stop-color="#2a2aff"/><stop offset="1" stop-color="#00007a"/></radialGradient><radialGradient id="gc" cx=".45" cy=".3" r=".75"><stop offset="0" stop-color="#3ff0f0"/><stop offset="1" stop-color="#12a3a8"/></radialGradient><linearGradient id="gg" x1="0" x2="1"><stop offset="0" stop-color="#0a8f0a"/><stop offset=".5" stop-color="#14b414"/><stop offset="1" stop-color="#067006"/></linearGradient><linearGradient id="gr" x1="0" x2="0" y1="0" y2="1"><stop offset="0" stop-color="#ff2a2a"/><stop offset=".5" stop-color="#e00000"/><stop offset="1" stop-color="#8a0000"/></linearGradient></defs><rect x="28" y="92" width="9.500" height="130" fill="url(#gg)"/><path d="M32.700 53L49.500 93H16Z" fill="url(#gg)"/><rect x="34" y="217.500" width="130" height="9.500" fill="url(#gr)"/><path d="M202 222L162.500 205.500V238.500Z" fill="url(#gr)"/><circle cx="32.700" cy="222" r="16.500" fill="url(#gb)"/><circle cx="112" cy="143.500" r="17" fill="url(#gc)"/><text x="37.500" y="23.5" font-family="Liberation Sans" font-size="15" fill="#2ea84a" text-anchor="middle">Y</text><text x="229" y="222" font-family="Liberation Sans" font-size="15" fill="#f06a6a">X</text></svg>
<div class="b" style="left:1789.5px;top:1588.6px;width:988.4px;height:26.0px;background:#fff;border:1.3px solid #444;box-sizing:border-box;"></div>
<div class="b" style="left:1789.5px;top:1588.6px;width:247.1px;height:26.0px;background:#000;"></div>
<div class="b" style="left:2283.7px;top:1588.6px;width:247.1px;height:26.0px;background:#000;"></div>
<span class="t" style="left:1784.9px;top:1570.4px;font-size:16.5px;color:#333;letter-spacing:-0.25px;">0</span>
<span class="t" style="left:2259.2px;top:1570.4px;font-size:16.5px;color:#333;letter-spacing:0.38px;">4e+03</span>
<span class="t" style="left:2752.5px;top:1570.4px;font-size:16.5px;color:#333;letter-spacing:0.89px;">8e+03 (mm)</span>
<span class="t" style="left:2011.8px;top:1635.4px;font-size:16.5px;color:#333;letter-spacing:0.50px;">2e+03</span>
<span class="t" style="left:2506.8px;top:1635.4px;font-size:16.5px;color:#333;letter-spacing:0.50px;">6e+03</span>
<svg class="b" style="left:0;top:0" width="3840" height="1700" viewBox="0 0 3840 1700">
<defs>
<clipPath id="mc"><rect x="1659.0" y="346.0" width="1612.0" height="1189.0"/></clipPath>
<clipPath id="nc"><path d="M1330.3 909.3L1421.0 913.2L1449.0 899.5L1477.0 888.0L1509.6 876.7L1556.0 862.7L1602.8 852.0L1655.0 842.4L1660.0 842.0L1660.0 1040.4L1655.0 1040.0L1602.8 1030.4L1556.0 1019.7L1509.6 1005.7L1477.0 994.4L1449.0 982.9L1421.0 969.2L1330.3 973.1Z"/></clipPath>
<filter id="wob" x="1619.0" y="306.0" width="1116.0" height="1269.0" filterUnits="userSpaceOnUse" color-interpolation-filters="sRGB">
<feTurbulence type="fractalNoise" baseFrequency="0.012" numOctaves="2" seed="5" result="n"/>
<feDisplacementMap in="SourceGraphic" in2="n" scale="22" xChannelSelector="R" yChannelSelector="G"/><feGaussianBlur stdDeviation="0.45"/>
</filter>
<pattern id="p5" width="5.3" height="5.3" patternUnits="userSpaceOnUse"><rect width="5.3" height="5.3" fill="#9e9e9e"/><path d="M0 0H5.3M0 0V5.3" stroke="#000" stroke-width="3.4"/></pattern><pattern id="p6" width="6.4" height="6.4" patternUnits="userSpaceOnUse"><rect width="6.4" height="6.4" fill="#9e9e9e"/><path d="M0 0H6.4M0 0V6.4" stroke="#000" stroke-width="3.2"/></pattern><pattern id="p8" width="8.2" height="8.2" patternUnits="userSpaceOnUse"><rect width="8.2" height="8.2" fill="#9e9e9e"/><path d="M0 0H8.2M0 0V8.2" stroke="#000" stroke-width="2.8"/></pattern><pattern id="p4" width="5.4" height="5.4" patternUnits="userSpaceOnUse"><rect width="5.4" height="5.4" fill="#8c8c8c"/><path d="M0 0H5.4M0 0V5.4" stroke="#000" stroke-width="3.2"/></pattern>
<pattern id="q0" width="3.10" height="3.10" patternUnits="userSpaceOnUse" patternTransform="translate(1785 940) rotate(-4) translate(3.1 1.0)"><rect width="3.20" height="3.20" fill="#9e9e9e"/><path d="M0 0H3.10M0 0V3.10" stroke="#000" stroke-width="3.70"/></pattern><pattern id="q1" width="7.58" height="7.58" patternUnits="userSpaceOnUse" patternTransform="translate(2284 371) rotate(-45) translate(2.8 0.5)"><rect width="7.68" height="7.68" fill="#9e9e9e"/><path d="M0 0H7.58M0 0V7.58" stroke="#000" stroke-width="3.18"/></pattern><pattern id="q2" width="7.35" height="7.35" patternUnits="userSpaceOnUse" patternTransform="translate(1805 1458) rotate(-16) translate(1.7 2.8)"><rect width="7.45" height="7.45" fill="#9e9e9e"/><path d="M0 0H7.35M0 0V7.35" stroke="#000" stroke-width="3.27"/></pattern><pattern id="q3" width="7.03" height="7.03" patternUnits="userSpaceOnUse" patternTransform="translate(1723 493) rotate(36) translate(5.0 0.9)"><rect width="7.13" height="7.13" fill="#9e9e9e"/><path d="M0 0H7.03M0 0V7.03" stroke="#000" stroke-width="3.40"/></pattern><pattern id="q5" width="6.33" height="6.33" patternUnits="userSpaceOnUse" patternTransform="translate(2039 954) rotate(0) translate(1.9 5.4)"><rect width="6.43" height="6.43" fill="#9e9e9e"/><path d="M0 0H6.33M0 0V6.33" stroke="#000" stroke-width="3.69"/></pattern><pattern id="q6" width="8.16" height="8.16" patternUnits="userSpaceOnUse" patternTransform="translate(2349 669) rotate(42) translate(0.7 3.4)"><rect width="8.26" height="8.26" fill="#9e9e9e"/><path d="M0 0H8.16M0 0V8.16" stroke="#000" stroke-width="2.94"/></pattern><pattern id="q7" width="6.27" height="6.27" patternUnits="userSpaceOnUse" patternTransform="translate(1795 1289) rotate(38) translate(2.7 1.0)"><rect width="6.37" height="6.37" fill="#9e9e9e"/><path d="M0 0H6.27M0 0V6.27" stroke="#000" stroke-width="3.70"/></pattern><pattern id="q8" width="8.23" height="8.23" patternUnits="userSpaceOnUse" patternTransform="translate(2357 955) rotate(-15) translate(7.5 6.9)"><rect width="8.33" height="8.33" fill="#9e9e9e"/><path d="M0 0H8.23M0 0V8.23" stroke="#000" stroke-width="2.91"/></pattern><pattern id="q9" width="11.34" height="11.34" patternUnits="userSpaceOnUse" patternTransform="translate(2511 1000) rotate(-6) translate(1.6 3.2)"><rect width="11.44" height="11.44" fill="#9e9e9e"/><path d="M0 0H11.34M0 0V11.34" stroke="#000" stroke-width="2.80"/></pattern><pattern id="q11" width="7.13" height="7.13" patternUnits="userSpaceOnUse" patternTransform="translate(2234 921) rotate(4) translate(5.1 5.2)"><rect width="7.23" height="7.23" fill="#9e9e9e"/><path d="M0 0H7.13M0 0V7.13" stroke="#000" stroke-width="3.36"/></pattern><pattern id="q12" width="6.32" height="6.32" patternUnits="userSpaceOnUse" patternTransform="translate(2022 1051) rotate(15) translate(0.9 3.2)"><rect width="6.42" height="6.42" fill="#9e9e9e"/><path d="M0 0H6.32M0 0V6.32" stroke="#000" stroke-width="3.69"/></pattern><pattern id="q13" width="6.86" height="6.86" patternUnits="userSpaceOnUse" patternTransform="translate(1897 1306) rotate(-33) translate(1.6 3.9)"><rect width="6.96" height="6.96" fill="#9e9e9e"/><path d="M0 0H6.86M0 0V6.86" stroke="#000" stroke-width="3.47"/></pattern><pattern id="q14" width="12.69" height="12.69" patternUnits="userSpaceOnUse" patternTransform="translate(2565 492) rotate(-8) translate(9.0 1.6)"><rect width="12.79" height="12.79" fill="#9e9e9e"/><path d="M0 0H12.69M0 0V12.69" stroke="#000" stroke-width="2.80"/></pattern><pattern id="q15" width="6.71" height="6.71" patternUnits="userSpaceOnUse" patternTransform="translate(2142 671) rotate(-14) translate(5.9 5.7)"><rect width="6.81" height="6.81" fill="#9e9e9e"/><path d="M0 0H6.71M0 0V6.71" stroke="#000" stroke-width="3.53"/></pattern><pattern id="q16" width="7.34" height="7.34" patternUnits="userSpaceOnUse" patternTransform="translate(1737 1419) rotate(-23) translate(5.5 0.9)"><rect width="7.44" height="7.44" fill="#9e9e9e"/><path d="M0 0H7.34M0 0V7.34" stroke="#000" stroke-width="3.27"/></pattern><pattern id="q17" width="6.57" height="6.57" patternUnits="userSpaceOnUse" patternTransform="translate(2103 515) rotate(-6) translate(2.8 0.8)"><rect width="6.67" height="6.67" fill="#9e9e9e"/><path d="M0 0H6.57M0 0V6.57" stroke="#000" stroke-width="3.59"/></pattern><pattern id="q18" width="8.25" height="8.25" patternUnits="userSpaceOnUse" patternTransform="translate(2360 580) rotate(-2) translate(2.2 1.6)"><rect width="8.35" height="8.35" fill="#9e9e9e"/><path d="M0 0H8.25M0 0V8.25" stroke="#000" stroke-width="2.90"/></pattern><pattern id="q19" width="6.19" height="6.19" patternUnits="userSpaceOnUse" patternTransform="translate(1684 579) rotate(-42) translate(1.6 5.2)"><rect width="6.29" height="6.29" fill="#9e9e9e"/><path d="M0 0H6.19M0 0V6.19" stroke="#000" stroke-width="3.70"/></pattern><pattern id="q20" width="6.13" height="6.13" patternUnits="userSpaceOnUse" patternTransform="translate(2014 903) rotate(-8) translate(3.0 6.1)"><rect width="6.23" height="6.23" fill="#9e9e9e"/><path d="M0 0H6.13M0 0V6.13" stroke="#000" stroke-width="3.70"/></pattern><pattern id="q21" width="6.61" height="6.61" patternUnits="userSpaceOnUse" patternTransform="translate(2007 356) rotate(7) translate(2.7 4.8)"><rect width="6.71" height="6.71" fill="#9e9e9e"/><path d="M0 0H6.61M0 0V6.61" stroke="#000" stroke-width="3.57"/></pattern><pattern id="q22" width="7.32" height="7.32" patternUnits="userSpaceOnUse" patternTransform="translate(1818 1541) rotate(-18) translate(1.8 6.2)"><rect width="7.42" height="7.42" fill="#9e9e9e"/><path d="M0 0H7.32M0 0V7.32" stroke="#000" stroke-width="3.28"/></pattern><pattern id="q23" width="6.68" height="6.68" patternUnits="userSpaceOnUse" patternTransform="translate(2134 1171) rotate(-11) translate(3.7 5.1)"><rect width="6.78" height="6.78" fill="#9e9e9e"/><path d="M0 0H6.68M0 0V6.68" stroke="#000" stroke-width="3.54"/></pattern><pattern id="q24" width="7.27" height="7.27" patternUnits="userSpaceOnUse" patternTransform="translate(1707 377) rotate(-27) translate(3.3 0.5)"><rect width="7.37" height="7.37" fill="#9e9e9e"/><path d="M0 0H7.27M0 0V7.27" stroke="#000" stroke-width="3.30"/></pattern><pattern id="q25" width="6.38" height="6.38" patternUnits="userSpaceOnUse" patternTransform="translate(1975 720) rotate(-24) translate(2.7 4.2)"><rect width="6.48" height="6.48" fill="#9e9e9e"/><path d="M0 0H6.38M0 0V6.38" stroke="#000" stroke-width="3.67"/></pattern><pattern id="q26" width="6.43" height="6.43" patternUnits="userSpaceOnUse" patternTransform="translate(1675 1351) rotate(-32) translate(3.9 5.0)"><rect width="6.53" height="6.53" fill="#9e9e9e"/><path d="M0 0H6.43M0 0V6.43" stroke="#000" stroke-width="3.65"/></pattern><pattern id="q27" width="3.12" height="3.12" patternUnits="userSpaceOnUse" patternTransform="translate(1714 1059) rotate(-28) translate(2.2 2.0)"><rect width="3.22" height="3.22" fill="#9e9e9e"/><path d="M0 0H3.12M0 0V3.12" stroke="#000" stroke-width="3.70"/></pattern><pattern id="q29" width="6.56" height="6.56" patternUnits="userSpaceOnUse" patternTransform="translate(1958 1215) rotate(23) translate(4.3 1.2)"><rect width="6.66" height="6.66" fill="#9e9e9e"/><path d="M0 0H6.56M0 0V6.56" stroke="#000" stroke-width="3.59"/></pattern><pattern id="q30" width="6.82" height="6.82" patternUnits="userSpaceOnUse" patternTransform="translate(2170 1367) rotate(-12) translate(0.3 4.6)"><rect width="6.92" height="6.92" fill="#9e9e9e"/><path d="M0 0H6.82M0 0V6.82" stroke="#000" stroke-width="3.49"/></pattern><pattern id="q31" width="5.67" height="5.67" patternUnits="userSpaceOnUse" patternTransform="translate(1878 717) rotate(-34) translate(2.8 3.4)"><rect width="5.77" height="5.77" fill="#9e9e9e"/><path d="M0 0H5.67M0 0V5.67" stroke="#000" stroke-width="3.70"/></pattern><pattern id="q32" width="6.95" height="6.95" patternUnits="userSpaceOnUse" patternTransform="translate(1922 1519) rotate(-12) translate(4.1 5.8)"><rect width="7.05" height="7.05" fill="#9e9e9e"/><path d="M0 0H6.95M0 0V6.95" stroke="#000" stroke-width="3.43"/></pattern><pattern id="q34" width="9.53" height="9.53" patternUnits="userSpaceOnUse" patternTransform="translate(2437 384) rotate(-44) translate(2.6 9.1)"><rect width="9.63" height="9.63" fill="#9e9e9e"/><path d="M0 0H9.53M0 0V9.53" stroke="#000" stroke-width="2.80"/></pattern><pattern id="q35" width="3.13" height="3.13" patternUnits="userSpaceOnUse" patternTransform="translate(1720 824) rotate(11) translate(1.0 1.9)"><rect width="3.23" height="3.23" fill="#9e9e9e"/><path d="M0 0H3.13M0 0V3.13" stroke="#000" stroke-width="3.70"/></pattern><pattern id="q36" width="8.14" height="8.14" patternUnits="userSpaceOnUse" patternTransform="translate(2348 1173) rotate(35) translate(2.4 4.7)"><rect width="8.24" height="8.24" fill="#9e9e9e"/><path d="M0 0H8.14M0 0V8.14" stroke="#000" stroke-width="2.95"/></pattern><pattern id="q37" width="10.42" height="10.42" patternUnits="userSpaceOnUse" patternTransform="translate(2474 1457) rotate(10) translate(8.7 2.7)"><rect width="10.52" height="10.52" fill="#9e9e9e"/><path d="M0 0H10.42M0 0V10.42" stroke="#000" stroke-width="2.80"/></pattern><pattern id="q38" width="4.14" height="4.14" patternUnits="userSpaceOnUse" patternTransform="translate(1807 1093) rotate(-21) translate(1.4 1.0)"><rect width="4.24" height="4.24" fill="#9e9e9e"/><path d="M0 0H4.14M0 0V4.14" stroke="#000" stroke-width="3.70"/></pattern><pattern id="q39" width="3.24" height="3.24" patternUnits="userSpaceOnUse" patternTransform="translate(1801 872) rotate(-5) translate(2.3 2.9)"><rect width="3.34" height="3.34" fill="#9e9e9e"/><path d="M0 0H3.24M0 0V3.24" stroke="#000" stroke-width="3.70"/></pattern><pattern id="q40" width="6.52" height="6.52" patternUnits="userSpaceOnUse" patternTransform="translate(2029 533) rotate(-18) translate(1.4 4.7)"><rect width="6.62" height="6.62" fill="#9e9e9e"/><path d="M0 0H6.52M0 0V6.52" stroke="#000" stroke-width="3.61"/></pattern><pattern id="q41" width="5.51" height="5.51" patternUnits="userSpaceOnUse" patternTransform="translate(1907 768) rotate(-32) translate(5.4 4.9)"><rect width="5.61" height="5.61" fill="#9e9e9e"/><path d="M0 0H5.51M0 0V5.51" stroke="#000" stroke-width="3.70"/></pattern><pattern id="q42" width="6.84" height="6.84" patternUnits="userSpaceOnUse" patternTransform="translate(2175 431) rotate(-27) translate(1.6 5.7)"><rect width="6.94" height="6.94" fill="#9e9e9e"/><path d="M0 0H6.84M0 0V6.84" stroke="#000" stroke-width="3.48"/></pattern><pattern id="q43" width="7.67" height="7.67" patternUnits="userSpaceOnUse" patternTransform="translate(2294 616) rotate(-28) translate(3.7 7.1)"><rect width="7.77" height="7.77" fill="#9e9e9e"/><path d="M0 0H7.67M0 0V7.67" stroke="#000" stroke-width="3.14"/></pattern><pattern id="q44" width="7.15" height="7.15" patternUnits="userSpaceOnUse" patternTransform="translate(2235 1106) rotate(27) translate(1.0 0.8)"><rect width="7.25" height="7.25" fill="#9e9e9e"/><path d="M0 0H7.15M0 0V7.15" stroke="#000" stroke-width="3.35"/></pattern><pattern id="q45" width="6.29" height="6.29" patternUnits="userSpaceOnUse" patternTransform="translate(1992 1114) rotate(12) translate(1.9 4.6)"><rect width="6.39" height="6.39" fill="#9e9e9e"/><path d="M0 0H6.29M0 0V6.29" stroke="#000" stroke-width="3.70"/></pattern><pattern id="q46" width="6.05" height="6.05" patternUnits="userSpaceOnUse" patternTransform="translate(1982 814) rotate(-33) translate(3.5 3.1)"><rect width="6.15" height="6.15" fill="#9e9e9e"/><path d="M0 0H6.05M0 0V6.05" stroke="#000" stroke-width="3.70"/></pattern><pattern id="q47" width="3.02" height="3.02" patternUnits="userSpaceOnUse" patternTransform="translate(1740 1015) rotate(-35) translate(2.0 0.3)"><rect width="3.12" height="3.12" fill="#9e9e9e"/><path d="M0 0H3.02M0 0V3.02" stroke="#000" stroke-width="3.70"/></pattern><pattern id="q49" width="11.08" height="11.08" patternUnits="userSpaceOnUse" patternTransform="translate(2501 1162) rotate(1) translate(2.2 6.3)"><rect width="11.18" height="11.18" fill="#9e9e9e"/><path d="M0 0H11.08M0 0V11.08" stroke="#000" stroke-width="2.80"/></pattern><pattern id="q50" width="8.82" height="8.82" patternUnits="userSpaceOnUse" patternTransform="translate(2408 1309) rotate(-41) translate(8.4 7.8)"><rect width="8.92" height="8.92" fill="#9e9e9e"/><path d="M0 0H8.82M0 0V8.82" stroke="#000" stroke-width="2.80"/></pattern><pattern id="q51" width="9.89" height="9.89" patternUnits="userSpaceOnUse" patternTransform="translate(2452 659) rotate(-27) translate(1.8 2.1)"><rect width="9.99" height="9.99" fill="#9e9e9e"/><path d="M0 0H9.89M0 0V9.89" stroke="#000" stroke-width="2.80"/></pattern><pattern id="q52" width="3.70" height="3.70" patternUnits="userSpaceOnUse" patternTransform="translate(1795 808) rotate(32) translate(1.0 2.9)"><rect width="3.80" height="3.80" fill="#9e9e9e"/><path d="M0 0H3.70M0 0V3.70" stroke="#000" stroke-width="3.70"/></pattern><pattern id="q53" width="7.62" height="7.62" patternUnits="userSpaceOnUse" patternTransform="translate(2289 1064) rotate(-7) translate(3.2 0.7)"><rect width="7.72" height="7.72" fill="#9e9e9e"/><path d="M0 0H7.62M0 0V7.62" stroke="#000" stroke-width="3.16"/></pattern><pattern id="q54" width="5.25" height="5.25" patternUnits="userSpaceOnUse" patternTransform="translate(1902 1089) rotate(22) translate(5.2 1.4)"><rect width="5.35" height="5.35" fill="#9e9e9e"/><path d="M0 0H5.25M0 0V5.25" stroke="#000" stroke-width="3.70"/></pattern><pattern id="q55" width="6.53" height="6.53" patternUnits="userSpaceOnUse" patternTransform="translate(2026 1224) rotate(20) translate(2.4 1.0)"><rect width="6.63" height="6.63" fill="#9e9e9e"/><path d="M0 0H6.53M0 0V6.53" stroke="#000" stroke-width="3.61"/></pattern><pattern id="q56" width="6.51" height="6.51" patternUnits="userSpaceOnUse" patternTransform="translate(2087 1005) rotate(24) translate(5.6 6.5)"><rect width="6.61" height="6.61" fill="#9e9e9e"/><path d="M0 0H6.51M0 0V6.51" stroke="#000" stroke-width="3.62"/></pattern><pattern id="q57" width="4.45" height="4.45" patternUnits="userSpaceOnUse" patternTransform="translate(1750 729) rotate(-3) translate(4.0 0.4)"><rect width="4.55" height="4.55" fill="#9e9e9e"/><path d="M0 0H4.45M0 0V4.45" stroke="#000" stroke-width="3.70"/></pattern><pattern id="q59" width="10.47" height="10.47" patternUnits="userSpaceOnUse" patternTransform="translate(2476 877) rotate(-7) translate(7.3 1.1)"><rect width="10.57" height="10.57" fill="#9e9e9e"/><path d="M0 0H10.47M0 0V10.47" stroke="#000" stroke-width="2.80"/></pattern><pattern id="q60" width="7.14" height="7.14" patternUnits="userSpaceOnUse" patternTransform="translate(2235 1321) rotate(-22) translate(3.6 5.8)"><rect width="7.24" height="7.24" fill="#9e9e9e"/><path d="M0 0H7.14M0 0V7.14" stroke="#000" stroke-width="3.35"/></pattern><pattern id="q61" width="6.47" height="6.47" patternUnits="userSpaceOnUse" patternTransform="translate(2041 446) rotate(-7) translate(1.3 4.0)"><rect width="6.57" height="6.57" fill="#9e9e9e"/><path d="M0 0H6.47M0 0V6.47" stroke="#000" stroke-width="3.63"/></pattern><pattern id="q62" width="7.75" height="7.75" patternUnits="userSpaceOnUse" patternTransform="translate(2303 886) rotate(-3) translate(2.7 7.7)"><rect width="7.85" height="7.85" fill="#9e9e9e"/><path d="M0 0H7.75M0 0V7.75" stroke="#000" stroke-width="3.11"/></pattern><pattern id="q63" width="6.56" height="6.56" patternUnits="userSpaceOnUse" patternTransform="translate(2101 1366) rotate(34) translate(1.7 2.9)"><rect width="6.66" height="6.66" fill="#9e9e9e"/><path d="M0 0H6.56M0 0V6.56" stroke="#000" stroke-width="3.59"/></pattern><pattern id="q64" width="6.84" height="6.84" patternUnits="userSpaceOnUse" patternTransform="translate(2176 498) rotate(-14) translate(2.6 6.2)"><rect width="6.94" height="6.94" fill="#9e9e9e"/><path d="M0 0H6.84M0 0V6.84" stroke="#000" stroke-width="3.48"/></pattern><pattern id="q65" width="7.28" height="7.28" patternUnits="userSpaceOnUse" patternTransform="translate(1830 350) rotate(39) translate(0.9 5.8)"><rect width="7.38" height="7.38" fill="#9e9e9e"/><path d="M0 0H7.28M0 0V7.28" stroke="#000" stroke-width="3.30"/></pattern><pattern id="q66" width="2.89" height="2.89" patternUnits="userSpaceOnUse" patternTransform="translate(1720 892) rotate(-19) translate(0.5 0.4)"><rect width="2.99" height="2.99" fill="#9e9e9e"/><path d="M0 0H2.89M0 0V2.89" stroke="#000" stroke-width="3.70"/></pattern><pattern id="q67" width="3.22" height="3.22" patternUnits="userSpaceOnUse" patternTransform="translate(1776 842) rotate(44) translate(1.6 0.8)"><rect width="3.32" height="3.32" fill="#9e9e9e"/><path d="M0 0H3.22M0 0V3.22" stroke="#000" stroke-width="3.70"/></pattern><pattern id="q68" width="5.92" height="5.92" patternUnits="userSpaceOnUse" patternTransform="translate(1868 1199) rotate(36) translate(3.4 1.1)"><rect width="6.02" height="6.02" fill="#9e9e9e"/><path d="M0 0H5.92M0 0V5.92" stroke="#000" stroke-width="3.70"/></pattern><pattern id="q69" width="7.02" height="7.02" patternUnits="userSpaceOnUse" patternTransform="translate(2221 684) rotate(-24) translate(6.4 6.1)"><rect width="7.12" height="7.12" fill="#9e9e9e"/><path d="M0 0H7.02M0 0V7.02" stroke="#000" stroke-width="3.41"/></pattern><pattern id="q70" width="6.96" height="6.96" patternUnits="userSpaceOnUse" patternTransform="translate(1919 1384) rotate(42) translate(1.7 5.2)"><rect width="7.06" height="7.06" fill="#9e9e9e"/><path d="M0 0H6.96M0 0V6.96" stroke="#000" stroke-width="3.43"/></pattern><pattern id="q71" width="4.43" height="4.43" patternUnits="userSpaceOnUse" patternTransform="translate(1817 774) rotate(8) translate(3.6 1.0)"><rect width="4.53" height="4.53" fill="#9e9e9e"/><path d="M0 0H4.43M0 0V4.43" stroke="#000" stroke-width="3.70"/></pattern><pattern id="q72" width="6.50" height="6.50" patternUnits="userSpaceOnUse" patternTransform="translate(2035 1409) rotate(27) translate(0.3 5.5)"><rect width="6.60" height="6.60" fill="#9e9e9e"/><path d="M0 0H6.50M0 0V6.50" stroke="#000" stroke-width="3.62"/></pattern><pattern id="q73" width="9.52" height="9.52" patternUnits="userSpaceOnUse" patternTransform="translate(2437 778) rotate(-38) translate(9.5 5.7)"><rect width="9.62" height="9.62" fill="#9e9e9e"/><path d="M0 0H9.52M0 0V9.52" stroke="#000" stroke-width="2.80"/></pattern><pattern id="q74" width="3.44" height="3.44" patternUnits="userSpaceOnUse" patternTransform="translate(1811 1031) rotate(-1) translate(2.6 1.0)"><rect width="3.54" height="3.54" fill="#9e9e9e"/><path d="M0 0H3.44M0 0V3.44" stroke="#000" stroke-width="3.70"/></pattern><pattern id="q75" width="4.16" height="4.16" patternUnits="userSpaceOnUse" patternTransform="translate(1740 1138) rotate(30) translate(2.1 0.7)"><rect width="4.26" height="4.26" fill="#9e9e9e"/><path d="M0 0H4.16M0 0V4.16" stroke="#000" stroke-width="3.70"/></pattern><pattern id="q76" width="6.64" height="6.64" patternUnits="userSpaceOnUse" patternTransform="translate(2123 1506) rotate(8) translate(5.0 1.0)"><rect width="6.74" height="6.74" fill="#9e9e9e"/><path d="M0 0H6.64M0 0V6.64" stroke="#000" stroke-width="3.56"/></pattern><pattern id="q77" width="3.28" height="3.28" patternUnits="userSpaceOnUse" patternTransform="translate(1824 925) rotate(45) translate(1.1 0.6)"><rect width="3.38" height="3.38" fill="#9e9e9e"/><path d="M0 0H3.28M0 0V3.28" stroke="#000" stroke-width="3.70"/></pattern><pattern id="q78" width="6.80" height="6.80" patternUnits="userSpaceOnUse" patternTransform="translate(2165 737) rotate(-19) translate(2.4 4.4)"><rect width="6.90" height="6.90" fill="#9e9e9e"/><path d="M0 0H6.80M0 0V6.80" stroke="#000" stroke-width="3.50"/></pattern><pattern id="q79" width="3.14" height="3.14" patternUnits="userSpaceOnUse" patternTransform="translate(1683 809) rotate(26) translate(1.0 0.8)"><rect width="3.24" height="3.24" fill="#9e9e9e"/><path d="M0 0H3.14M0 0V3.14" stroke="#000" stroke-width="3.70"/></pattern><pattern id="q80" width="6.75" height="6.75" patternUnits="userSpaceOnUse" patternTransform="translate(2153 969) rotate(-13) translate(2.0 5.7)"><rect width="6.85" height="6.85" fill="#9e9e9e"/><path d="M0 0H6.75M0 0V6.75" stroke="#000" stroke-width="3.51"/></pattern><pattern id="q81" width="6.44" height="6.44" patternUnits="userSpaceOnUse" patternTransform="translate(2069 819) rotate(-2) translate(1.8 6.0)"><rect width="6.54" height="6.54" fill="#9e9e9e"/><path d="M0 0H6.44M0 0V6.44" stroke="#000" stroke-width="3.64"/></pattern><pattern id="q82" width="7.00" height="7.00" patternUnits="userSpaceOnUse" patternTransform="translate(1909 371) rotate(27) translate(0.7 1.3)"><rect width="7.10" height="7.10" fill="#9e9e9e"/><path d="M0 0H7.00M0 0V7.00" stroke="#000" stroke-width="3.41"/></pattern><pattern id="q83" width="6.59" height="6.59" patternUnits="userSpaceOnUse" patternTransform="translate(2109 776) rotate(1) translate(4.4 4.4)"><rect width="6.69" height="6.69" fill="#9e9e9e"/><path d="M0 0H6.59M0 0V6.59" stroke="#000" stroke-width="3.58"/></pattern><pattern id="q84" width="3.03" height="3.03" patternUnits="userSpaceOnUse" patternTransform="translate(1661 1052) rotate(-44) translate(3.0 0.5)"><rect width="3.13" height="3.13" fill="#9e9e9e"/><path d="M0 0H3.03M0 0V3.03" stroke="#000" stroke-width="3.70"/></pattern><pattern id="q85" width="6.51" height="6.51" patternUnits="userSpaceOnUse" patternTransform="translate(2088 1286) rotate(43) translate(3.9 3.3)"><rect width="6.61" height="6.61" fill="#9e9e9e"/><path d="M0 0H6.51M0 0V6.51" stroke="#000" stroke-width="3.61"/></pattern><pattern id="q86" width="6.46" height="6.46" patternUnits="userSpaceOnUse" patternTransform="translate(2045 744) rotate(1) translate(3.5 6.3)"><rect width="6.56" height="6.56" fill="#9e9e9e"/><path d="M0 0H6.46M0 0V6.46" stroke="#000" stroke-width="3.64"/></pattern><pattern id="q87" width="7.23" height="7.23" patternUnits="userSpaceOnUse" patternTransform="translate(2244 1409) rotate(15) translate(0.7 2.4)"><rect width="7.33" height="7.33" fill="#9e9e9e"/><path d="M0 0H7.23M0 0V7.23" stroke="#000" stroke-width="3.32"/></pattern><pattern id="q88" width="6.61" height="6.61" patternUnits="userSpaceOnUse" patternTransform="translate(2116 596) rotate(-32) translate(4.6 4.2)"><rect width="6.71" height="6.71" fill="#9e9e9e"/><path d="M0 0H6.61M0 0V6.61" stroke="#000" stroke-width="3.57"/></pattern><pattern id="q89" width="8.35" height="8.35" patternUnits="userSpaceOnUse" patternTransform="translate(2370 826) rotate(12) translate(3.8 4.0)"><rect width="8.45" height="8.45" fill="#9e9e9e"/><path d="M0 0H8.35M0 0V8.35" stroke="#000" stroke-width="2.86"/></pattern><pattern id="q90" width="6.80" height="6.80" patternUnits="userSpaceOnUse" patternTransform="translate(1960 1337) rotate(-21) translate(0.4 3.0)"><rect width="6.90" height="6.90" fill="#9e9e9e"/><path d="M0 0H6.80M0 0V6.80" stroke="#000" stroke-width="3.50"/></pattern><pattern id="q91" width="6.08" height="6.08" patternUnits="userSpaceOnUse" patternTransform="translate(1935 1157) rotate(-45) translate(1.1 5.1)"><rect width="6.18" height="6.18" fill="#9e9e9e"/><path d="M0 0H6.08M0 0V6.08" stroke="#000" stroke-width="3.70"/></pattern><pattern id="q92" width="6.76" height="6.76" patternUnits="userSpaceOnUse" patternTransform="translate(1838 555) rotate(3) translate(6.6 4.7)"><rect width="6.86" height="6.86" fill="#9e9e9e"/><path d="M0 0H6.76M0 0V6.76" stroke="#000" stroke-width="3.51"/></pattern><pattern id="q93" width="7.13" height="7.13" patternUnits="userSpaceOnUse" patternTransform="translate(2233 1499) rotate(19) translate(1.1 6.0)"><rect width="7.23" height="7.23" fill="#9e9e9e"/><path d="M0 0H7.13M0 0V7.13" stroke="#000" stroke-width="3.36"/></pattern><pattern id="q94" width="3.68" height="3.68" patternUnits="userSpaceOnUse" patternTransform="translate(1846 971) rotate(-41) translate(0.4 3.4)"><rect width="3.78" height="3.78" fill="#9e9e9e"/><path d="M0 0H3.68M0 0V3.68" stroke="#000" stroke-width="3.70"/></pattern><pattern id="q95" width="6.69" height="6.69" patternUnits="userSpaceOnUse" patternTransform="translate(2136 911) rotate(6) translate(4.5 4.8)"><rect width="6.79" height="6.79" fill="#9e9e9e"/><path d="M0 0H6.69M0 0V6.69" stroke="#000" stroke-width="3.54"/></pattern><pattern id="q96" width="6.48" height="6.48" patternUnits="userSpaceOnUse" patternTransform="translate(1922 643) rotate(41) translate(3.4 4.9)"><rect width="6.58" height="6.58" fill="#9e9e9e"/><path d="M0 0H6.48M0 0V6.48" stroke="#000" stroke-width="3.63"/></pattern><pattern id="q97" width="7.27" height="7.27" patternUnits="userSpaceOnUse" patternTransform="translate(2249 1193) rotate(27) translate(6.6 6.3)"><rect width="7.37" height="7.37" fill="#9e9e9e"/><path d="M0 0H7.27M0 0V7.27" stroke="#000" stroke-width="3.31"/></pattern><pattern id="q98" width="4.16" height="4.16" patternUnits="userSpaceOnUse" patternTransform="translate(1672 1154) rotate(-43) translate(3.2 1.1)"><rect width="4.26" height="4.26" fill="#9e9e9e"/><path d="M0 0H4.16M0 0V4.16" stroke="#000" stroke-width="3.70"/></pattern><pattern id="q99" width="6.74" height="6.74" patternUnits="userSpaceOnUse" patternTransform="translate(2150 1431) rotate(-37) translate(1.4 3.3)"><rect width="6.84" height="6.84" fill="#9e9e9e"/><path d="M0 0H6.74M0 0V6.74" stroke="#000" stroke-width="3.52"/></pattern><pattern id="q100" width="6.22" height="6.22" patternUnits="userSpaceOnUse" patternTransform="translate(1823 612) rotate(41) translate(4.5 5.8)"><rect width="6.32" height="6.32" fill="#9e9e9e"/><path d="M0 0H6.22M0 0V6.22" stroke="#000" stroke-width="3.70"/></pattern><pattern id="q101" width="5.13" height="5.13" patternUnits="userSpaceOnUse" patternTransform="translate(1752 681) rotate(-11) translate(4.5 1.8)"><rect width="5.23" height="5.23" fill="#9e9e9e"/><path d="M0 0H5.13M0 0V5.13" stroke="#000" stroke-width="3.70"/></pattern><pattern id="q102" width="7.12" height="7.12" patternUnits="userSpaceOnUse" patternTransform="translate(1879 1448) rotate(-31) translate(4.6 4.0)"><rect width="7.22" height="7.22" fill="#9e9e9e"/><path d="M0 0H7.12M0 0V7.12" stroke="#000" stroke-width="3.36"/></pattern><pattern id="q103" width="4.70" height="4.70" patternUnits="userSpaceOnUse" patternTransform="translate(1905 963) rotate(13) translate(3.5 3.0)"><rect width="4.80" height="4.80" fill="#9e9e9e"/><path d="M0 0H4.70M0 0V4.70" stroke="#000" stroke-width="3.70"/></pattern><pattern id="q104" width="4.80" height="4.80" patternUnits="userSpaceOnUse" patternTransform="translate(1911 913) rotate(-27) translate(2.3 4.4)"><rect width="4.90" height="4.90" fill="#9e9e9e"/><path d="M0 0H4.80M0 0V4.80" stroke="#000" stroke-width="3.70"/></pattern><pattern id="q105" width="4.90" height="4.90" patternUnits="userSpaceOnUse" patternTransform="translate(1697 684) rotate(-45) translate(4.4 0.5)"><rect width="5.00" height="5.00" fill="#9e9e9e"/><path d="M0 0H4.90M0 0V4.90" stroke="#000" stroke-width="3.70"/></pattern><pattern id="q106" width="8.23" height="8.23" patternUnits="userSpaceOnUse" patternTransform="translate(2358 386) rotate(26) translate(6.8 7.4)"><rect width="8.33" height="8.33" fill="#9e9e9e"/><path d="M0 0H8.23M0 0V8.23" stroke="#000" stroke-width="2.91"/></pattern><pattern id="q107" width="7.93" height="7.93" patternUnits="userSpaceOnUse" patternTransform="translate(2324 1450) rotate(-40) translate(3.7 2.1)"><rect width="8.03" height="8.03" fill="#9e9e9e"/><path d="M0 0H7.93M0 0V7.93" stroke="#000" stroke-width="3.03"/></pattern><pattern id="q108" width="8.22" height="8.22" patternUnits="userSpaceOnUse" patternTransform="translate(2357 1515) rotate(43) translate(7.2 2.2)"><rect width="8.32" height="8.32" fill="#9e9e9e"/><path d="M0 0H8.22M0 0V8.22" stroke="#000" stroke-width="2.91"/></pattern><pattern id="q109" width="3.08" height="3.08" patternUnits="userSpaceOnUse" patternTransform="translate(1763 878) rotate(-22) translate(2.7 2.9)"><rect width="3.18" height="3.18" fill="#9e9e9e"/><path d="M0 0H3.08M0 0V3.08" stroke="#000" stroke-width="3.70"/></pattern><pattern id="q110" width="6.87" height="6.87" patternUnits="userSpaceOnUse" patternTransform="translate(1942 1456) rotate(-26) translate(2.5 1.7)"><rect width="6.97" height="6.97" fill="#9e9e9e"/><path d="M0 0H6.87M0 0V6.87" stroke="#000" stroke-width="3.47"/></pattern><pattern id="q111" width="5.74" height="5.74" patternUnits="userSpaceOnUse" patternTransform="translate(1714 1255) rotate(33) translate(1.6 0.9)"><rect width="5.84" height="5.84" fill="#9e9e9e"/><path d="M0 0H5.74M0 0V5.74" stroke="#000" stroke-width="3.70"/></pattern><pattern id="q112" width="6.70" height="6.70" patternUnits="userSpaceOnUse" patternTransform="translate(2139 344) rotate(29) translate(6.6 4.9)"><rect width="6.80" height="6.80" fill="#9e9e9e"/><path d="M0 0H6.70M0 0V6.70" stroke="#000" stroke-width="3.54"/></pattern><pattern id="q113" width="6.62" height="6.62" patternUnits="userSpaceOnUse" patternTransform="translate(2117 1070) rotate(16) translate(1.3 2.9)"><rect width="6.72" height="6.72" fill="#9e9e9e"/><path d="M0 0H6.62M0 0V6.62" stroke="#000" stroke-width="3.57"/></pattern><pattern id="q114" width="7.29" height="7.29" patternUnits="userSpaceOnUse" patternTransform="translate(1827 450) rotate(45) translate(3.3 0.5)"><rect width="7.39" height="7.39" fill="#9e9e9e"/><path d="M0 0H7.29M0 0V7.29" stroke="#000" stroke-width="3.29"/></pattern><pattern id="q115" width="6.93" height="6.93" patternUnits="userSpaceOnUse" patternTransform="translate(1927 543) rotate(34) translate(1.6 0.9)"><rect width="7.03" height="7.03" fill="#9e9e9e"/><path d="M0 0H6.93M0 0V6.93" stroke="#000" stroke-width="3.44"/></pattern><pattern id="q116" width="4.13" height="4.13" patternUnits="userSpaceOnUse" patternTransform="translate(1855 1020) rotate(11) translate(1.4 1.6)"><rect width="4.23" height="4.23" fill="#9e9e9e"/><path d="M0 0H4.13M0 0V4.13" stroke="#000" stroke-width="3.70"/></pattern><pattern id="q117" width="3.12" height="3.12" patternUnits="userSpaceOnUse" patternTransform="translate(1783 984) rotate(-6) translate(0.3 1.3)"><rect width="3.22" height="3.22" fill="#9e9e9e"/><path d="M0 0H3.12M0 0V3.12" stroke="#000" stroke-width="3.70"/></pattern><pattern id="q118" width="6.77" height="6.77" patternUnits="userSpaceOnUse" patternTransform="translate(2157 829) rotate(-28) translate(2.8 1.4)"><rect width="6.87" height="6.87" fill="#9e9e9e"/><path d="M0 0H6.77M0 0V6.77" stroke="#000" stroke-width="3.51"/></pattern><pattern id="q119" width="7.62" height="7.62" patternUnits="userSpaceOnUse" patternTransform="translate(2288 808) rotate(-5) translate(4.9 3.9)"><rect width="7.72" height="7.72" fill="#9e9e9e"/><path d="M0 0H7.62M0 0V7.62" stroke="#000" stroke-width="3.16"/></pattern><pattern id="q120" width="4.54" height="4.54" patternUnits="userSpaceOnUse" patternTransform="translate(1883 864) rotate(-4) translate(0.9 2.2)"><rect width="4.64" height="4.64" fill="#9e9e9e"/><path d="M0 0H4.54M0 0V4.54" stroke="#000" stroke-width="3.70"/></pattern><pattern id="q121" width="7.43" height="7.43" patternUnits="userSpaceOnUse" patternTransform="translate(1778 391) rotate(20) translate(2.3 3.3)"><rect width="7.53" height="7.53" fill="#9e9e9e"/><path d="M0 0H7.43M0 0V7.43" stroke="#000" stroke-width="3.24"/></pattern><pattern id="q122" width="5.30" height="5.30" patternUnits="userSpaceOnUse" patternTransform="translate(1942 997) rotate(34) translate(4.9 4.6)"><rect width="5.40" height="5.40" fill="#9e9e9e"/><path d="M0 0H5.30M0 0V5.30" stroke="#000" stroke-width="3.70"/></pattern><pattern id="q123" width="5.96" height="5.96" patternUnits="userSpaceOnUse" patternTransform="translate(1735 613) rotate(36) translate(4.1 4.7)"><rect width="6.06" height="6.06" fill="#9e9e9e"/><path d="M0 0H5.96M0 0V5.96" stroke="#000" stroke-width="3.70"/></pattern><pattern id="q124" width="6.66" height="6.66" patternUnits="userSpaceOnUse" patternTransform="translate(1684 1481) rotate(20) translate(2.3 3.9)"><rect width="6.76" height="6.76" fill="#9e9e9e"/><path d="M0 0H6.66M0 0V6.66" stroke="#000" stroke-width="3.55"/></pattern><pattern id="q125" width="6.91" height="6.91" patternUnits="userSpaceOnUse" patternTransform="translate(1933 447) rotate(16) translate(2.4 1.5)"><rect width="7.01" height="7.01" fill="#9e9e9e"/><path d="M0 0H6.91M0 0V6.91" stroke="#000" stroke-width="3.45"/></pattern><pattern id="q126" width="7.53" height="7.53" patternUnits="userSpaceOnUse" patternTransform="translate(2279 469) rotate(5) translate(0.2 1.4)"><rect width="7.63" height="7.63" fill="#9e9e9e"/><path d="M0 0H7.53M0 0V7.53" stroke="#000" stroke-width="3.20"/></pattern><pattern id="q127" width="6.54" height="6.54" patternUnits="userSpaceOnUse" patternTransform="translate(2025 1474) rotate(20) translate(5.4 3.2)"><rect width="6.64" height="6.64" fill="#9e9e9e"/><path d="M0 0H6.54M0 0V6.54" stroke="#000" stroke-width="3.60"/></pattern><pattern id="q128" width="5.71" height="5.71" patternUnits="userSpaceOnUse" patternTransform="translate(1807 1221) rotate(-21) translate(1.7 1.9)"><rect width="5.81" height="5.81" fill="#9e9e9e"/><path d="M0 0H5.71M0 0V5.71" stroke="#000" stroke-width="3.70"/></pattern><pattern id="q129" width="6.67" height="6.67" patternUnits="userSpaceOnUse" patternTransform="translate(1992 1543) rotate(-26) translate(6.1 2.1)"><rect width="6.77" height="6.77" fill="#9e9e9e"/><path d="M0 0H6.67M0 0V6.67" stroke="#000" stroke-width="3.55"/></pattern><pattern id="q130" width="7.06" height="7.06" patternUnits="userSpaceOnUse" patternTransform="translate(2225 542) rotate(-41) translate(6.5 3.0)"><rect width="7.16" height="7.16" fill="#9e9e9e"/><path d="M0 0H7.06M0 0V7.06" stroke="#000" stroke-width="3.39"/></pattern><pattern id="q131" width="9.59" height="9.59" patternUnits="userSpaceOnUse" patternTransform="translate(2440 491) rotate(11) translate(2.1 3.8)"><rect width="9.69" height="9.69" fill="#9e9e9e"/><path d="M0 0H9.59M0 0V9.59" stroke="#000" stroke-width="2.80"/></pattern><pattern id="q132" width="6.06" height="6.06" patternUnits="userSpaceOnUse" patternTransform="translate(1868 661) rotate(16) translate(5.8 1.6)"><rect width="6.16" height="6.16" fill="#9e9e9e"/><path d="M0 0H6.06M0 0V6.06" stroke="#000" stroke-width="3.70"/></pattern><pattern id="q133" width="1.83" height="1.83" patternUnits="userSpaceOnUse" patternTransform="translate(1682 926) rotate(-32) translate(1.2 1.4)"><rect width="1.93" height="1.93" fill="#9e9e9e"/><path d="M0 0H1.83M0 0V1.83" stroke="#000" stroke-width="3.70"/></pattern><pattern id="q134" width="6.45" height="6.45" patternUnits="userSpaceOnUse" patternTransform="translate(2072 646) rotate(-4) translate(2.5 2.8)"><rect width="6.55" height="6.55" fill="#9e9e9e"/><path d="M0 0H6.45M0 0V6.45" stroke="#000" stroke-width="3.64"/></pattern><pattern id="q135" width="7.90" height="7.90" patternUnits="userSpaceOnUse" patternTransform="translate(2321 1366) rotate(31) translate(1.4 3.0)"><rect width="8.00" height="8.00" fill="#9e9e9e"/><path d="M0 0H7.90M0 0V7.90" stroke="#000" stroke-width="3.04"/></pattern><pattern id="q136" width="3.25" height="3.25" patternUnits="userSpaceOnUse" patternTransform="translate(1684 1097) rotate(-6) translate(2.9 1.9)"><rect width="3.35" height="3.35" fill="#9e9e9e"/><path d="M0 0H3.25M0 0V3.25" stroke="#000" stroke-width="3.70"/></pattern><pattern id="q137" width="4.87" height="4.87" patternUnits="userSpaceOnUse" patternTransform="translate(1650 683) rotate(-35) translate(2.5 3.8)"><rect width="4.97" height="4.97" fill="#9e9e9e"/><path d="M0 0H4.87M0 0V4.87" stroke="#000" stroke-width="3.70"/></pattern><pattern id="q138" width="8.02" height="8.02" patternUnits="userSpaceOnUse" patternTransform="translate(2334 1293) rotate(-31) translate(7.4 7.8)"><rect width="8.12" height="8.12" fill="#9e9e9e"/><path d="M0 0H8.02M0 0V8.02" stroke="#000" stroke-width="3.00"/></pattern><pattern id="q139" width="6.75" height="6.75" patternUnits="userSpaceOnUse" patternTransform="translate(1971 499) rotate(32) translate(0.3 2.3)"><rect width="6.85" height="6.85" fill="#9e9e9e"/><path d="M0 0H6.75M0 0V6.75" stroke="#000" stroke-width="3.52"/></pattern><pattern id="q140" width="5.00" height="5.00" patternUnits="userSpaceOnUse" patternTransform="translate(1758 1189) rotate(-28) translate(4.3 0.9)"><rect width="5.10" height="5.10" fill="#9e9e9e"/><path d="M0 0H5.00M0 0V5.00" stroke="#000" stroke-width="3.70"/></pattern><pattern id="q141" width="5.10" height="5.10" patternUnits="userSpaceOnUse" patternTransform="translate(1813 1167) rotate(-32) translate(3.6 0.9)"><rect width="5.20" height="5.20" fill="#9e9e9e"/><path d="M0 0H5.10M0 0V5.10" stroke="#000" stroke-width="3.70"/></pattern><pattern id="q142" width="6.62" height="6.62" patternUnits="userSpaceOnUse" patternTransform="translate(2119 1231) rotate(24) translate(4.9 6.1)"><rect width="6.72" height="6.72" fill="#9e9e9e"/><path d="M0 0H6.62M0 0V6.62" stroke="#000" stroke-width="3.57"/></pattern><pattern id="q143" width="5.40" height="5.40" patternUnits="userSpaceOnUse" patternTransform="translate(1954 948) rotate(32) translate(0.4 1.7)"><rect width="5.50" height="5.50" fill="#9e9e9e"/><path d="M0 0H5.40M0 0V5.40" stroke="#000" stroke-width="3.70"/></pattern><pattern id="q144" width="4.87" height="4.87" patternUnits="userSpaceOnUse" patternTransform="translate(1882 812) rotate(-4) translate(1.5 1.2)"><rect width="4.97" height="4.97" fill="#9e9e9e"/><path d="M0 0H4.87M0 0V4.87" stroke="#000" stroke-width="3.70"/></pattern><pattern id="q145" width="4.78" height="4.78" patternUnits="userSpaceOnUse" patternTransform="translate(1830 1126) rotate(-29) translate(3.4 0.7)"><rect width="4.88" height="4.88" fill="#9e9e9e"/><path d="M0 0H4.78M0 0V4.78" stroke="#000" stroke-width="3.70"/></pattern><pattern id="q146" width="3.92" height="3.92" patternUnits="userSpaceOnUse" patternTransform="translate(1772 1108) rotate(35) translate(3.6 2.4)"><rect width="4.02" height="4.02" fill="#9e9e9e"/><path d="M0 0H3.92M0 0V3.92" stroke="#000" stroke-width="3.70"/></pattern><pattern id="q147" width="6.40" height="6.40" patternUnits="userSpaceOnUse" patternTransform="translate(2059 1104) rotate(21) translate(4.8 1.9)"><rect width="6.50" height="6.50" fill="#9e9e9e"/><path d="M0 0H6.40M0 0V6.40" stroke="#000" stroke-width="3.66"/></pattern><pattern id="q148" width="10.80" height="10.80" patternUnits="userSpaceOnUse" patternTransform="translate(2489 1267) rotate(11) translate(1.8 7.3)"><rect width="10.90" height="10.90" fill="#9e9e9e"/><path d="M0 0H10.80M0 0V10.80" stroke="#000" stroke-width="2.80"/></pattern><pattern id="q149" width="6.60" height="6.60" patternUnits="userSpaceOnUse" patternTransform="translate(2114 427) rotate(41) translate(5.4 0.9)"><rect width="6.70" height="6.70" fill="#9e9e9e"/><path d="M0 0H6.60M0 0V6.60" stroke="#000" stroke-width="3.58"/></pattern><pattern id="q150" width="6.68" height="6.68" patternUnits="userSpaceOnUse" patternTransform="translate(1989 647) rotate(-43) translate(3.2 0.6)"><rect width="6.78" height="6.78" fill="#9e9e9e"/><path d="M0 0H6.68M0 0V6.68" stroke="#000" stroke-width="3.55"/></pattern><pattern id="q151" width="5.53" height="5.53" patternUnits="userSpaceOnUse" patternTransform="translate(1676 638) rotate(-12) translate(0.6 4.5)"><rect width="5.63" height="5.63" fill="#9e9e9e"/><path d="M0 0H5.53M0 0V5.53" stroke="#000" stroke-width="3.70"/></pattern><pattern id="q152" width="5.45" height="5.45" patternUnits="userSpaceOnUse" patternTransform="translate(1954 897) rotate(19) translate(2.2 3.9)"><rect width="5.55" height="5.55" fill="#9e9e9e"/><path d="M0 0H5.45M0 0V5.45" stroke="#000" stroke-width="3.70"/></pattern><pattern id="q153" width="7.09" height="7.09" patternUnits="userSpaceOnUse" patternTransform="translate(1834 1366) rotate(-11) translate(5.5 1.1)"><rect width="7.19" height="7.19" fill="#9e9e9e"/><path d="M0 0H7.09M0 0V7.09" stroke="#000" stroke-width="3.38"/></pattern><pattern id="q155" width="2.98" height="2.98" patternUnits="userSpaceOnUse" patternTransform="translate(1756 914) rotate(6) translate(2.1 1.6)"><rect width="3.08" height="3.08" fill="#9e9e9e"/><path d="M0 0H2.98M0 0V2.98" stroke="#000" stroke-width="3.70"/></pattern><pattern id="q156" width="8.46" height="8.46" patternUnits="userSpaceOnUse" patternTransform="translate(2384 1081) rotate(-38) translate(2.9 8.4)"><rect width="8.56" height="8.56" fill="#9e9e9e"/><path d="M0 0H8.46M0 0V8.46" stroke="#000" stroke-width="2.82"/></pattern><pattern id="q157" width="6.82" height="6.82" patternUnits="userSpaceOnUse" patternTransform="translate(2171 1304) rotate(38) translate(1.0 5.7)"><rect width="6.92" height="6.92" fill="#9e9e9e"/><path d="M0 0H6.82M0 0V6.82" stroke="#000" stroke-width="3.49"/></pattern><pattern id="q158" width="6.88" height="6.88" patternUnits="userSpaceOnUse" patternTransform="translate(2187 1026) rotate(18) translate(6.4 5.6)"><rect width="6.98" height="6.98" fill="#9e9e9e"/><path d="M0 0H6.88M0 0V6.88" stroke="#000" stroke-width="3.46"/></pattern><pattern id="q160" width="6.41" height="6.41" patternUnits="userSpaceOnUse" patternTransform="translate(1674 1540) rotate(19) translate(3.1 3.8)"><rect width="6.51" height="6.51" fill="#9e9e9e"/><path d="M0 0H6.41M0 0V6.41" stroke="#000" stroke-width="3.66"/></pattern><pattern id="q161" width="8.80" height="8.80" patternUnits="userSpaceOnUse" patternTransform="translate(2407 1228) rotate(26) translate(1.6 1.6)"><rect width="8.90" height="8.90" fill="#9e9e9e"/><path d="M0 0H8.80M0 0V8.80" stroke="#000" stroke-width="2.80"/></pattern><pattern id="q162" width="6.18" height="6.18" patternUnits="userSpaceOnUse" patternTransform="translate(1666 1417) rotate(6) translate(5.7 5.6)"><rect width="6.28" height="6.28" fill="#9e9e9e"/><path d="M0 0H6.18M0 0V6.18" stroke="#000" stroke-width="3.70"/></pattern><pattern id="q163" width="2.89" height="2.89" patternUnits="userSpaceOnUse" patternTransform="translate(1663 862) rotate(4) translate(1.4 1.6)"><rect width="2.99" height="2.99" fill="#9e9e9e"/><path d="M0 0H2.89M0 0V2.89" stroke="#000" stroke-width="3.70"/></pattern><pattern id="q164" width="6.41" height="6.41" patternUnits="userSpaceOnUse" patternTransform="translate(2061 1166) rotate(-26) translate(4.5 3.2)"><rect width="6.51" height="6.51" fill="#9e9e9e"/><path d="M0 0H6.41M0 0V6.41" stroke="#000" stroke-width="3.66"/></pattern><pattern id="q165" width="3.93" height="3.93" patternUnits="userSpaceOnUse" patternTransform="translate(1761 767) rotate(41) translate(2.1 3.4)"><rect width="4.03" height="4.03" fill="#9e9e9e"/><path d="M0 0H3.93M0 0V3.93" stroke="#000" stroke-width="3.70"/></pattern><pattern id="q166" width="5.90" height="5.90" patternUnits="userSpaceOnUse" patternTransform="translate(1660 1271) rotate(5) translate(4.5 4.6)"><rect width="6.00" height="6.00" fill="#9e9e9e"/><path d="M0 0H5.90M0 0V5.90" stroke="#000" stroke-width="3.70"/></pattern><pattern id="q168" width="5.13" height="5.13" patternUnits="userSpaceOnUse" patternTransform="translate(1811 710) rotate(-27) translate(5.0 5.1)"><rect width="5.23" height="5.23" fill="#9e9e9e"/><path d="M0 0H5.13M0 0V5.13" stroke="#000" stroke-width="3.70"/></pattern><pattern id="q169" width="6.99" height="6.99" patternUnits="userSpaceOnUse" patternTransform="translate(2218 796) rotate(-16) translate(5.0 5.7)"><rect width="7.09" height="7.09" fill="#9e9e9e"/><path d="M0 0H6.99M0 0V6.99" stroke="#000" stroke-width="3.42"/></pattern><pattern id="q170" width="8.14" height="8.14" patternUnits="userSpaceOnUse" patternTransform="translate(2347 742) rotate(38) translate(3.2 1.8)"><rect width="8.24" height="8.24" fill="#9e9e9e"/><path d="M0 0H8.14M0 0V8.14" stroke="#000" stroke-width="2.95"/></pattern><pattern id="q171" width="10.98" height="10.98" patternUnits="userSpaceOnUse" patternTransform="translate(2497 575) rotate(-14) translate(9.8 5.7)"><rect width="11.08" height="11.08" fill="#9e9e9e"/><path d="M0 0H10.98M0 0V10.98" stroke="#000" stroke-width="2.80"/></pattern><pattern id="q172" width="6.73" height="6.73" patternUnits="userSpaceOnUse" patternTransform="translate(1768 1350) rotate(-18) translate(3.2 3.9)"><rect width="6.83" height="6.83" fill="#9e9e9e"/><path d="M0 0H6.73M0 0V6.73" stroke="#000" stroke-width="3.52"/></pattern><pattern id="q173" width="6.87" height="6.87" patternUnits="userSpaceOnUse" patternTransform="translate(2184 597) rotate(-42) translate(2.2 1.3)"><rect width="6.97" height="6.97" fill="#9e9e9e"/><path d="M0 0H6.87M0 0V6.87" stroke="#000" stroke-width="3.47"/></pattern><pattern id="q174" width="3.55" height="3.55" patternUnits="userSpaceOnUse" patternTransform="translate(1721 770) rotate(35) translate(0.2 1.6)"><rect width="3.65" height="3.65" fill="#9e9e9e"/><path d="M0 0H3.55M0 0V3.55" stroke="#000" stroke-width="3.70"/></pattern><pattern id="q175" width="6.06" height="6.06" patternUnits="userSpaceOnUse" patternTransform="translate(1661 457) rotate(7) translate(2.3 0.2)"><rect width="6.16" height="6.16" fill="#9e9e9e"/><path d="M0 0H6.06M0 0V6.06" stroke="#000" stroke-width="3.70"/></pattern><pattern id="q176" width="6.69" height="6.69" patternUnits="userSpaceOnUse" patternTransform="translate(1987 417) rotate(3) translate(4.3 5.3)"><rect width="6.79" height="6.79" fill="#9e9e9e"/><path d="M0 0H6.69M0 0V6.69" stroke="#000" stroke-width="3.54"/></pattern><pattern id="q177" width="6.43" height="6.43" patternUnits="userSpaceOnUse" patternTransform="translate(2067 1524) rotate(25) translate(5.5 6.4)"><rect width="6.53" height="6.53" fill="#9e9e9e"/><path d="M0 0H6.43M0 0V6.43" stroke="#000" stroke-width="3.65"/></pattern><pattern id="q178" width="6.45" height="6.45" patternUnits="userSpaceOnUse" patternTransform="translate(2072 878) rotate(-8) translate(0.4 2.1)"><rect width="6.55" height="6.55" fill="#9e9e9e"/><path d="M0 0H6.45M0 0V6.45" stroke="#000" stroke-width="3.64"/></pattern><pattern id="q179" width="6.53" height="6.53" patternUnits="userSpaceOnUse" patternTransform="translate(2026 1298) rotate(-35) translate(5.5 3.0)"><rect width="6.63" height="6.63" fill="#9e9e9e"/><path d="M0 0H6.53M0 0V6.53" stroke="#000" stroke-width="3.60"/></pattern><pattern id="q180" width="6.48" height="6.48" patternUnits="userSpaceOnUse" patternTransform="translate(1745 553) rotate(40) translate(2.0 5.3)"><rect width="6.58" height="6.58" fill="#9e9e9e"/><path d="M0 0H6.48M0 0V6.48" stroke="#000" stroke-width="3.63"/></pattern><pattern id="q181" width="3.33" height="3.33" patternUnits="userSpaceOnUse" patternTransform="translate(1731 1097) rotate(36) translate(0.7 1.2)"><rect width="3.43" height="3.43" fill="#9e9e9e"/><path d="M0 0H3.33M0 0V3.33" stroke="#000" stroke-width="3.70"/></pattern><pattern id="q182" width="3.79" height="3.79" patternUnits="userSpaceOnUse" patternTransform="translate(1828 845) rotate(-40) translate(0.4 3.7)"><rect width="3.89" height="3.89" fill="#9e9e9e"/><path d="M0 0H3.79M0 0V3.79" stroke="#000" stroke-width="3.70"/></pattern><pattern id="q183" width="4.12" height="4.12" patternUnits="userSpaceOnUse" patternTransform="translate(1870 925) rotate(-22) translate(4.0 1.8)"><rect width="4.22" height="4.22" fill="#9e9e9e"/><path d="M0 0H4.12M0 0V4.12" stroke="#000" stroke-width="3.70"/></pattern><pattern id="q184" width="4.23" height="4.23" patternUnits="userSpaceOnUse" patternTransform="translate(1659 724) rotate(10) translate(1.9 1.2)"><rect width="4.33" height="4.33" fill="#9e9e9e"/><path d="M0 0H4.23M0 0V4.23" stroke="#000" stroke-width="3.70"/></pattern><pattern id="q185" width="6.52" height="6.52" patternUnits="userSpaceOnUse" patternTransform="translate(2090 1448) rotate(-24) translate(1.4 4.8)"><rect width="6.62" height="6.62" fill="#9e9e9e"/><path d="M0 0H6.52M0 0V6.52" stroke="#000" stroke-width="3.61"/></pattern><pattern id="q186" width="7.54" height="7.54" patternUnits="userSpaceOnUse" patternTransform="translate(1739 1544) rotate(-41) translate(5.1 3.1)"><rect width="7.64" height="7.64" fill="#9e9e9e"/><path d="M0 0H7.54M0 0V7.54" stroke="#000" stroke-width="3.19"/></pattern><pattern id="q187" width="3.44" height="3.44" patternUnits="userSpaceOnUse" patternTransform="translate(1667 764) rotate(33) translate(2.2 1.5)"><rect width="3.54" height="3.54" fill="#9e9e9e"/><path d="M0 0H3.44M0 0V3.44" stroke="#000" stroke-width="3.70"/></pattern><pattern id="q188" width="1.88" height="1.88" patternUnits="userSpaceOnUse" patternTransform="translate(1676 967) rotate(13) translate(1.1 1.1)"><rect width="1.98" height="1.98" fill="#9e9e9e"/><path d="M0 0H1.88M0 0V1.88" stroke="#000" stroke-width="3.70"/></pattern><pattern id="q189" width="6.74" height="6.74" patternUnits="userSpaceOnUse" patternTransform="translate(1975 584) rotate(12) translate(2.6 4.3)"><rect width="6.84" height="6.84" fill="#9e9e9e"/><path d="M0 0H6.74M0 0V6.74" stroke="#000" stroke-width="3.52"/></pattern><pattern id="q190" width="7.26" height="7.26" patternUnits="userSpaceOnUse" patternTransform="translate(2248 1003) rotate(-17) translate(0.6 2.0)"><rect width="7.36" height="7.36" fill="#9e9e9e"/><path d="M0 0H7.26M0 0V7.26" stroke="#000" stroke-width="3.31"/></pattern><pattern id="q191" width="3.20" height="3.20" patternUnits="userSpaceOnUse" patternTransform="translate(1773 1037) rotate(33) translate(2.3 0.3)"><rect width="3.30" height="3.30" fill="#9e9e9e"/><path d="M0 0H3.20M0 0V3.20" stroke="#000" stroke-width="3.70"/></pattern><pattern id="q192" width="6.43" height="6.43" patternUnits="userSpaceOnUse" patternTransform="translate(2068 383) rotate(29) translate(4.4 4.1)"><rect width="6.53" height="6.53" fill="#9e9e9e"/><path d="M0 0H6.43M0 0V6.43" stroke="#000" stroke-width="3.65"/></pattern><pattern id="q193" width="5.33" height="5.33" patternUnits="userSpaceOnUse" patternTransform="translate(1875 1135) rotate(-43) translate(2.9 1.4)"><rect width="5.43" height="5.43" fill="#9e9e9e"/><path d="M0 0H5.33M0 0V5.33" stroke="#000" stroke-width="3.70"/></pattern><pattern id="q194" width="8.57" height="8.57" patternUnits="userSpaceOnUse" patternTransform="translate(2396 1388) rotate(22) translate(4.6 1.9)"><rect width="8.67" height="8.67" fill="#9e9e9e"/><path d="M0 0H8.57M0 0V8.57" stroke="#000" stroke-width="2.80"/></pattern><pattern id="q195" width="8.17" height="8.17" patternUnits="userSpaceOnUse" patternTransform="translate(2351 499) rotate(-30) translate(4.7 0.8)"><rect width="8.27" height="8.27" fill="#9e9e9e"/><path d="M0 0H8.17M0 0V8.17" stroke="#000" stroke-width="2.94"/></pattern><pattern id="q196" width="2.87" height="2.87" patternUnits="userSpaceOnUse" patternTransform="translate(1731 966) rotate(-28) translate(0.6 1.0)"><rect width="2.97" height="2.97" fill="#9e9e9e"/><path d="M0 0H2.87M0 0V2.87" stroke="#000" stroke-width="3.70"/></pattern><pattern id="q197" width="4.47" height="4.47" patternUnits="userSpaceOnUse" patternTransform="translate(1851 1072) rotate(34) translate(4.3 1.3)"><rect width="4.57" height="4.57" fill="#9e9e9e"/><path d="M0 0H4.47M0 0V4.47" stroke="#000" stroke-width="3.70"/></pattern><pattern id="q198" width="11.52" height="11.52" patternUnits="userSpaceOnUse" patternTransform="translate(2519 1370) rotate(12) translate(8.5 0.7)"><rect width="11.62" height="11.62" fill="#9e9e9e"/><path d="M0 0H11.52M0 0V11.52" stroke="#000" stroke-width="2.80"/></pattern><pattern id="q199" width="5.05" height="5.05" patternUnits="userSpaceOnUse" patternTransform="translate(1651 1212) rotate(9) translate(3.9 2.1)"><rect width="5.15" height="5.15" fill="#9e9e9e"/><path d="M0 0H5.05M0 0V5.05" stroke="#000" stroke-width="3.70"/></pattern><pattern id="q200" width="4.87" height="4.87" patternUnits="userSpaceOnUse" patternTransform="translate(1896 1044) rotate(-37) translate(1.5 0.1)"><rect width="4.97" height="4.97" fill="#9e9e9e"/><path d="M0 0H4.87M0 0V4.87" stroke="#000" stroke-width="3.70"/></pattern><pattern id="q201" width="5.65" height="5.65" patternUnits="userSpaceOnUse" patternTransform="translate(1952 1049) rotate(-29) translate(1.7 3.6)"><rect width="5.75" height="5.75" fill="#9e9e9e"/><path d="M0 0H5.65M0 0V5.65" stroke="#000" stroke-width="3.70"/></pattern><pattern id="q202" width="6.46" height="6.46" patternUnits="userSpaceOnUse" patternTransform="translate(2043 591) rotate(35) translate(4.2 5.4)"><rect width="6.56" height="6.56" fill="#9e9e9e"/><path d="M0 0H6.46M0 0V6.46" stroke="#000" stroke-width="3.63"/></pattern><pattern id="q203" width="4.05" height="4.05" patternUnits="userSpaceOnUse" patternTransform="translate(1702 738) rotate(-1) translate(0.5 3.4)"><rect width="4.15" height="4.15" fill="#9e9e9e"/><path d="M0 0H4.05M0 0V4.05" stroke="#000" stroke-width="3.70"/></pattern><pattern id="q204" width="2.87" height="2.87" patternUnits="userSpaceOnUse" patternTransform="translate(1699 1004) rotate(-23) translate(0.9 0.2)"><rect width="2.97" height="2.97" fill="#9e9e9e"/><path d="M0 0H2.87M0 0V2.87" stroke="#000" stroke-width="3.70"/></pattern><pattern id="q205" width="6.78" height="6.78" patternUnits="userSpaceOnUse" patternTransform="translate(1964 1276) rotate(-33) translate(0.3 0.3)"><rect width="6.88" height="6.88" fill="#9e9e9e"/><path d="M0 0H6.78M0 0V6.78" stroke="#000" stroke-width="3.50"/></pattern><pattern id="q206" width="5.04" height="5.04" patternUnits="userSpaceOnUse" patternTransform="translate(1714 1206) rotate(-24) translate(1.0 3.4)"><rect width="5.14" height="5.14" fill="#9e9e9e"/><path d="M0 0H5.04M0 0V5.04" stroke="#000" stroke-width="3.70"/></pattern><pattern id="q207" width="7.14" height="7.14" patternUnits="userSpaceOnUse" patternTransform="translate(1874 497) rotate(35) translate(3.2 2.6)"><rect width="7.24" height="7.24" fill="#9e9e9e"/><path d="M0 0H7.14M0 0V7.14" stroke="#000" stroke-width="3.36"/></pattern><pattern id="q208" width="5.98" height="5.98" patternUnits="userSpaceOnUse" patternTransform="translate(1994 992) rotate(18) translate(5.3 1.8)"><rect width="6.08" height="6.08" fill="#9e9e9e"/><path d="M0 0H5.98M0 0V5.98" stroke="#000" stroke-width="3.70"/></pattern><pattern id="q209" width="6.90" height="6.90" patternUnits="userSpaceOnUse" patternTransform="translate(2192 1229) rotate(-27) translate(0.5 3.7)"><rect width="7.00" height="7.00" fill="#9e9e9e"/><path d="M0 0H6.90M0 0V6.90" stroke="#000" stroke-width="3.46"/></pattern><pattern id="q210" width="2.85" height="2.85" patternUnits="userSpaceOnUse" patternTransform="translate(1660 1012) rotate(-29) translate(0.7 2.7)"><rect width="2.95" height="2.95" fill="#9e9e9e"/><path d="M0 0H2.85M0 0V2.85" stroke="#000" stroke-width="3.70"/></pattern><pattern id="q211" width="6.94" height="6.94" patternUnits="userSpaceOnUse" patternTransform="translate(2203 351) rotate(32) translate(6.1 4.9)"><rect width="7.04" height="7.04" fill="#9e9e9e"/><path d="M0 0H6.94M0 0V6.94" stroke="#000" stroke-width="3.44"/></pattern><pattern id="q212" width="6.81" height="6.81" patternUnits="userSpaceOnUse" patternTransform="translate(2169 1119) rotate(22) translate(5.5 6.0)"><rect width="6.91" height="6.91" fill="#9e9e9e"/><path d="M0 0H6.81M0 0V6.81" stroke="#000" stroke-width="3.49"/></pattern><pattern id="q213" width="5.31" height="5.31" patternUnits="userSpaceOnUse" patternTransform="translate(1928 837) rotate(-13) translate(2.6 4.3)"><rect width="5.41" height="5.41" fill="#9e9e9e"/><path d="M0 0H5.31M0 0V5.31" stroke="#000" stroke-width="3.70"/></pattern><pattern id="q214" width="3.26" height="3.26" patternUnits="userSpaceOnUse" patternTransform="translate(1757 812) rotate(42) translate(2.2 2.7)"><rect width="3.36" height="3.36" fill="#9e9e9e"/><path d="M0 0H3.26M0 0V3.26" stroke="#000" stroke-width="3.70"/></pattern><pattern id="q215" width="7.21" height="7.21" patternUnits="userSpaceOnUse" patternTransform="translate(2242 857) rotate(-15) translate(2.6 6.3)"><rect width="7.31" height="7.31" fill="#9e9e9e"/><path d="M0 0H7.21M0 0V7.21" stroke="#000" stroke-width="3.33"/></pattern><pattern id="q216" width="7.43" height="7.43" patternUnits="userSpaceOnUse" patternTransform="translate(2268 731) rotate(-31) translate(2.3 2.0)"><rect width="7.53" height="7.53" fill="#9e9e9e"/><path d="M0 0H7.43M0 0V7.43" stroke="#000" stroke-width="3.24"/></pattern><pattern id="q217" width="6.00" height="6.00" patternUnits="userSpaceOnUse" patternTransform="translate(1657 513) rotate(27) translate(0.6 4.9)"><rect width="6.10" height="6.10" fill="#9e9e9e"/><path d="M0 0H6.00M0 0V6.00" stroke="#000" stroke-width="3.70"/></pattern><pattern id="q218" width="6.00" height="6.00" patternUnits="userSpaceOnUse" patternTransform="translate(1649 346) rotate(-20) translate(5.0 5.1)"><rect width="6.10" height="6.10" fill="#9e9e9e"/><path d="M0 0H6.00M0 0V6.00" stroke="#000" stroke-width="3.70"/></pattern><pattern id="q219" width="6.56" height="6.56" patternUnits="userSpaceOnUse" patternTransform="translate(1880 600) rotate(22) translate(6.1 2.3)"><rect width="6.66" height="6.66" fill="#9e9e9e"/><path d="M0 0H6.56M0 0V6.56" stroke="#000" stroke-width="3.59"/></pattern><pattern id="q220" width="6.86" height="6.86" patternUnits="userSpaceOnUse" patternTransform="translate(2183 1540) rotate(14) translate(4.0 1.9)"><rect width="6.96" height="6.96" fill="#9e9e9e"/><path d="M0 0H6.86M0 0V6.86" stroke="#000" stroke-width="3.47"/></pattern><pattern id="q221" width="6.30" height="6.30" patternUnits="userSpaceOnUse" patternTransform="translate(1854 1264) rotate(12) translate(2.6 5.1)"><rect width="6.40" height="6.40" fill="#9e9e9e"/><path d="M0 0H6.30M0 0V6.30" stroke="#000" stroke-width="3.70"/></pattern><pattern id="q222" width="9.54" height="9.54" patternUnits="userSpaceOnUse" patternTransform="translate(2441 1541) rotate(2) translate(4.9 4.3)"><rect width="9.64" height="9.64" fill="#9e9e9e"/><path d="M0 0H9.54M0 0V9.54" stroke="#000" stroke-width="2.80"/></pattern><pattern id="q223" width="7.36" height="7.36" patternUnits="userSpaceOnUse" patternTransform="translate(2260 1260) rotate(41) translate(6.3 4.4)"><rect width="7.46" height="7.46" fill="#9e9e9e"/><path d="M0 0H7.36M0 0V7.36" stroke="#000" stroke-width="3.26"/></pattern><pattern id="q224" width="3.48" height="3.48" patternUnits="userSpaceOnUse" patternTransform="translate(1656 1120) rotate(9) translate(1.2 2.6)"><rect width="3.58" height="3.58" fill="#9e9e9e"/><path d="M0 0H3.48M0 0V3.48" stroke="#000" stroke-width="3.70"/></pattern><pattern id="q225" width="3.87" height="3.87" patternUnits="userSpaceOnUse" patternTransform="translate(1851 890) rotate(1) translate(3.6 2.3)"><rect width="3.97" height="3.97" fill="#9e9e9e"/><path d="M0 0H3.87M0 0V3.87" stroke="#000" stroke-width="3.70"/></pattern><pattern id="q226" width="6.52" height="6.52" patternUnits="userSpaceOnUse" patternTransform="translate(2091 709) rotate(11) translate(4.4 4.7)"><rect width="6.62" height="6.62" fill="#9e9e9e"/><path d="M0 0H6.52M0 0V6.52" stroke="#000" stroke-width="3.61"/></pattern><pattern id="q227" width="7.59" height="7.59" patternUnits="userSpaceOnUse" patternTransform="translate(2285 1543) rotate(-43) translate(1.3 1.1)"><rect width="7.69" height="7.69" fill="#9e9e9e"/><path d="M0 0H7.59M0 0V7.59" stroke="#000" stroke-width="3.17"/></pattern><pattern id="q228" width="4.92" height="4.92" patternUnits="userSpaceOnUse" patternTransform="translate(1860 774) rotate(38) translate(4.7 2.4)"><rect width="5.02" height="5.02" fill="#9e9e9e"/><path d="M0 0H4.92M0 0V4.92" stroke="#000" stroke-width="3.70"/></pattern><pattern id="q229" width="7.01" height="7.01" patternUnits="userSpaceOnUse" patternTransform="translate(1794 511) rotate(9) translate(3.0 3.4)"><rect width="7.11" height="7.11" fill="#9e9e9e"/><path d="M0 0H7.01M0 0V7.01" stroke="#000" stroke-width="3.41"/></pattern><pattern id="q230" width="7.66" height="7.66" patternUnits="userSpaceOnUse" patternTransform="translate(2293 542) rotate(-36) translate(5.4 0.0)"><rect width="7.76" height="7.76" fill="#9e9e9e"/><path d="M0 0H7.66M0 0V7.66" stroke="#000" stroke-width="3.15"/></pattern><pattern id="q231" width="11.66" height="11.66" patternUnits="userSpaceOnUse" patternTransform="translate(2524 724) rotate(-12) translate(8.2 2.9)"><rect width="11.76" height="11.76" fill="#9e9e9e"/><path d="M0 0H11.66M0 0V11.66" stroke="#000" stroke-width="2.80"/></pattern><pattern id="q232" width="9.04" height="9.04" patternUnits="userSpaceOnUse" patternTransform="translate(2417 1008) rotate(7) translate(5.2 8.9)"><rect width="9.14" height="9.14" fill="#9e9e9e"/><path d="M0 0H9.04M0 0V9.04" stroke="#000" stroke-width="2.80"/></pattern><pattern id="q233" width="2.96" height="2.96" patternUnits="userSpaceOnUse" patternTransform="translate(1705 859) rotate(32) translate(1.9 1.4)"><rect width="3.06" height="3.06" fill="#9e9e9e"/><path d="M0 0H2.96M0 0V2.96" stroke="#000" stroke-width="3.70"/></pattern><pattern id="q234" width="1.95" height="1.95" patternUnits="userSpaceOnUse" patternTransform="translate(1651 905) rotate(-0) translate(0.8 0.7)"><rect width="2.05" height="2.05" fill="#9e9e9e"/><path d="M0 0H1.95M0 0V1.95" stroke="#000" stroke-width="3.70"/></pattern><pattern id="q235" width="6.28" height="6.28" patternUnits="userSpaceOnUse" patternTransform="translate(1718 1311) rotate(-10) translate(6.2 0.9)"><rect width="6.38" height="6.38" fill="#9e9e9e"/><path d="M0 0H6.28M0 0V6.28" stroke="#000" stroke-width="3.70"/></pattern><pattern id="q236" width="3.78" height="3.78" patternUnits="userSpaceOnUse" patternTransform="translate(1701 1130) rotate(18) translate(3.5 2.1)"><rect width="3.88" height="3.88" fill="#9e9e9e"/><path d="M0 0H3.78M0 0V3.78" stroke="#000" stroke-width="3.70"/></pattern><pattern id="q237" width="5.67" height="5.67" patternUnits="userSpaceOnUse" patternTransform="translate(1801 661) rotate(29) translate(3.0 5.5)"><rect width="5.77" height="5.77" fill="#9e9e9e"/><path d="M0 0H5.67M0 0V5.67" stroke="#000" stroke-width="3.70"/></pattern><pattern id="q238" width="6.42" height="6.42" patternUnits="userSpaceOnUse" patternTransform="translate(1907 1243) rotate(0) translate(3.8 0.2)"><rect width="6.52" height="6.52" fill="#9e9e9e"/><path d="M0 0H6.42M0 0V6.42" stroke="#000" stroke-width="3.65"/></pattern><pattern id="q239" width="7.15" height="7.15" patternUnits="userSpaceOnUse" patternTransform="translate(2236 418) rotate(-23) translate(1.6 5.9)"><rect width="7.25" height="7.25" fill="#9e9e9e"/><path d="M0 0H7.15M0 0V7.15" stroke="#000" stroke-width="3.35"/></pattern><pattern id="q240" width="2.80" height="2.80" patternUnits="userSpaceOnUse" patternTransform="translate(1719 931) rotate(-4) translate(1.1 1.9)"><rect width="2.90" height="2.90" fill="#9e9e9e"/><path d="M0 0H2.80M0 0V2.80" stroke="#000" stroke-width="3.70"/></pattern><pattern id="spk" width="90" height="90" patternUnits="userSpaceOnUse"><rect x="84.9" y="46.0" width="3.5" height="1.6" fill="#9a9a9a" opacity="0.71"/><rect x="33.9" y="72.2" width="1.8" height="3.3" fill="#9a9a9a" opacity="0.68"/><rect x="81.2" y="42.9" width="2.3" height="3.1" fill="#9a9a9a" opacity="0.94"/><rect x="33.3" y="87.2" width="3.4" height="1.8" fill="#9a9a9a" opacity="0.72"/><rect x="63.4" y="84.9" width="2.9" height="1.7" fill="#9a9a9a" opacity="0.65"/><rect x="44.4" y="45.0" width="3.5" height="2.2" fill="#9a9a9a" opacity="0.48"/><rect x="47.0" y="57.7" width="3.5" height="2.7" fill="#9a9a9a" opacity="0.51"/><rect x="83.7" y="44.3" width="2.9" height="2.4" fill="#9a9a9a" opacity="0.48"/><rect x="62.3" y="69.4" width="1.8" height="2.4" fill="#9a9a9a" opacity="0.57"/><rect x="15.4" y="19.9" width="3.5" height="3.3" fill="#9a9a9a" opacity="0.58"/><rect x="66.6" y="3.8" width="3.4" height="2.6" fill="#9a9a9a" opacity="0.84"/><rect x="24.8" y="33.9" width="2.2" height="3.5" fill="#9a9a9a" opacity="0.61"/><rect x="45.0" y="86.0" width="3.4" height="2.3" fill="#9a9a9a" opacity="0.53"/><rect x="72.6" y="9.7" width="2.3" height="3.3" fill="#9a9a9a" opacity="0.90"/><rect x="21.0" y="7.1" width="3.1" height="2.8" fill="#9a9a9a" opacity="0.49"/><rect x="45.5" y="6.4" width="2.9" height="2.6" fill="#9a9a9a" opacity="0.77"/><rect x="7.9" y="58.0" width="2.2" height="2.5" fill="#9a9a9a" opacity="0.55"/><rect x="57.1" y="51.1" width="2.8" height="1.5" fill="#9a9a9a" opacity="0.49"/><rect x="6.5" y="34.5" width="2.5" height="1.6" fill="#9a9a9a" opacity="0.75"/><rect x="43.9" y="45.0" width="2.7" height="3.5" fill="#9a9a9a" opacity="0.70"/><rect x="8.4" y="13.2" width="2.9" height="2.1" fill="#9a9a9a" opacity="0.80"/><rect x="46.0" y="34.2" width="3.0" height="1.8" fill="#9a9a9a" opacity="0.52"/><rect x="26.3" y="37.4" width="3.4" height="3.2" fill="#9a9a9a" opacity="0.84"/><rect x="56.8" y="0.7" width="2.0" height="2.5" fill="#9a9a9a" opacity="0.89"/><rect x="32.7" y="49.6" width="3.3" height="2.2" fill="#9a9a9a" opacity="0.80"/><rect x="53.6" y="47.3" width="2.8" height="2.5" fill="#9a9a9a" opacity="0.42"/><rect x="80.7" y="87.3" width="3.2" height="2.2" fill="#9a9a9a" opacity="0.73"/><rect x="69.4" y="5.6" width="3.1" height="1.6" fill="#9a9a9a" opacity="0.91"/><rect x="21.7" y="86.7" width="1.9" height="2.6" fill="#9a9a9a" opacity="0.85"/><rect x="88.9" y="63.5" width="3.2" height="2.3" fill="#9a9a9a" opacity="0.80"/><rect x="34.6" y="83.7" width="3.1" height="2.2" fill="#9a9a9a" opacity="0.82"/><rect x="6.0" y="83.3" width="2.9" height="2.1" fill="#9a9a9a" opacity="0.74"/><rect x="70.6" y="56.5" width="3.4" height="2.3" fill="#9a9a9a" opacity="0.54"/><rect x="33.4" y="25.4" width="2.5" height="3.1" fill="#9a9a9a" opacity="0.87"/><rect x="56.9" y="70.7" width="3.5" height="2.9" fill="#9a9a9a" opacity="0.40"/><rect x="56.3" y="1.8" width="2.9" height="3.6" fill="#9a9a9a" opacity="0.64"/><rect x="84.0" y="1.8" width="3.5" height="1.8" fill="#9a9a9a" opacity="0.85"/><rect x="26.8" y="35.4" width="1.7" height="1.5" fill="#9a9a9a" opacity="0.80"/><rect x="67.1" y="11.1" width="2.8" height="2.0" fill="#9a9a9a" opacity="0.89"/><rect x="12.1" y="52.9" width="3.4" height="2.6" fill="#9a9a9a" opacity="0.75"/><rect x="72.9" y="63.6" width="3.2" height="1.9" fill="#9a9a9a" opacity="0.90"/><rect x="45.3" y="82.4" width="2.9" height="3.0" fill="#9a9a9a" opacity="0.92"/><rect x="9.5" y="78.3" width="2.0" height="3.2" fill="#9a9a9a" opacity="0.48"/><rect x="42.2" y="12.5" width="3.2" height="2.0" fill="#9a9a9a" opacity="0.63"/><rect x="71.6" y="33.4" width="3.3" height="2.5" fill="#9a9a9a" opacity="0.92"/><rect x="69.4" y="89.4" width="3.0" height="2.1" fill="#9a9a9a" opacity="0.67"/><rect x="84.6" y="83.2" width="2.0" height="2.0" fill="#9a9a9a" opacity="0.50"/><rect x="56.3" y="17.5" width="3.0" height="2.1" fill="#9a9a9a" opacity="0.85"/><rect x="22.2" y="83.4" width="2.1" height="1.5" fill="#9a9a9a" opacity="0.45"/><rect x="73.5" y="15.3" width="2.0" height="3.6" fill="#9a9a9a" opacity="0.60"/><rect x="57.8" y="49.0" width="2.4" height="3.4" fill="#9a9a9a" opacity="0.37"/><rect x="34.3" y="40.6" width="2.9" height="3.0" fill="#9a9a9a" opacity="0.35"/><rect x="8.8" y="21.5" width="2.1" height="3.1" fill="#9a9a9a" opacity="0.80"/><rect x="83.5" y="36.2" width="2.3" height="1.7" fill="#9a9a9a" opacity="0.89"/><rect x="80.9" y="86.0" width="3.0" height="3.3" fill="#9a9a9a" opacity="0.69"/><rect x="75.5" y="29.4" width="3.1" height="3.1" fill="#9a9a9a" opacity="0.72"/><rect x="75.5" y="60.9" width="1.9" height="1.5" fill="#9a9a9a" opacity="0.55"/><rect x="17.6" y="81.5" width="2.6" height="3.0" fill="#9a9a9a" opacity="0.91"/><rect x="71.2" y="78.0" width="2.6" height="3.1" fill="#9a9a9a" opacity="0.92"/><rect x="39.6" y="63.1" width="3.5" height="1.9" fill="#9a9a9a" opacity="0.39"/><rect x="43.3" y="80.1" width="2.5" height="1.9" fill="#9a9a9a" opacity="0.94"/><rect x="42.4" y="39.4" width="1.6" height="2.3" fill="#9a9a9a" opacity="0.94"/><rect x="39.0" y="70.0" width="3.4" height="1.4" fill="#9a9a9a" opacity="0.77"/><rect x="12.8" y="45.8" width="3.3" height="2.2" fill="#9a9a9a" opacity="0.78"/><rect x="25.7" y="53.7" width="3.0" height="2.6" fill="#9a9a9a" opacity="0.54"/><rect x="66.6" y="12.4" width="2.1" height="3.1" fill="#9a9a9a" opacity="0.65"/><rect x="8.5" y="61.0" width="3.4" height="1.8" fill="#9a9a9a" opacity="0.90"/><rect x="0.4" y="85.9" width="2.7" height="2.0" fill="#9a9a9a" opacity="0.45"/><rect x="39.3" y="38.9" width="2.5" height="2.5" fill="#9a9a9a" opacity="0.40"/><rect x="22.4" y="13.1" width="3.2" height="1.7" fill="#9a9a9a" opacity="0.75"/><path d="M7.1 52.2l-0.1 8.0" stroke="#8a8a8a" stroke-width="1.6" opacity=".8"/><path d="M59.9 24.8l-9.5 2.7" stroke="#8a8a8a" stroke-width="1.6" opacity=".8"/><path d="M58.9 48.0l-9.3 3.3" stroke="#8a8a8a" stroke-width="1.6" opacity=".8"/><path d="M2.0 79.6l-7.8 2.7" stroke="#8a8a8a" stroke-width="1.6" opacity=".8"/><path d="M4.6 22.7l-1.9 8.7" stroke="#8a8a8a" stroke-width="1.6" opacity=".8"/><path d="M75.2 25.3l-2.7 6.1" stroke="#8a8a8a" stroke-width="1.6" opacity=".8"/><path d="M13.0 73.0l6.6 0.1" stroke="#8a8a8a" stroke-width="1.6" opacity=".8"/><path d="M50.1 18.2l10.8 3.7" stroke="#8a8a8a" stroke-width="1.6" opacity=".8"/><path d="M40.1 48.0l8.3 1.6" stroke="#8a8a8a" stroke-width="1.6" opacity=".8"/><path d="M41.5 10.4l-5.1 1.5" stroke="#8a8a8a" stroke-width="1.6" opacity=".8"/></pattern>
<radialGradient id="pg" gradientUnits="userSpaceOnUse" cx="1659.0" cy="941.2" r="300"><stop offset="0" stop-color="#fff" stop-opacity="0"/><stop offset=".15" stop-color="#fff" stop-opacity=".7"/><stop offset=".6" stop-color="#fff" stop-opacity=".8"/><stop offset="1" stop-color="#fff" stop-opacity="0"/></radialGradient><mask id="pm"><rect x="1659.0" y="600" width="320" height="700" fill="url(#pg)"/></mask>
<radialGradient id="halo"><stop offset="0" stop-color="#000" stop-opacity="1"/><stop offset=".3" stop-color="#000" stop-opacity=".97"/><stop offset=".55" stop-color="#000" stop-opacity=".5"/><stop offset=".8" stop-color="#000" stop-opacity=".18"/><stop offset="1" stop-color="#000" stop-opacity="0"/></radialGradient>
<linearGradient id="nf" x1="1330" x2="1520" gradientUnits="userSpaceOnUse"><stop offset="0" stop-color="#fff" stop-opacity=".35"/><stop offset=".3" stop-color="#fff" stop-opacity=".95"/><stop offset=".6" stop-color="#fff" stop-opacity=".55"/><stop offset="1" stop-color="#fff" stop-opacity="0"/></linearGradient>
<mask id="nm"><rect x="1330" y="880" width="200" height="130" fill="url(#nf)"/></mask>
</defs>
<rect x="1415.5" y="346.0" width="244.5" height="495.20000000000005" fill="#000"/>
<rect x="1415.5" y="1041.2" width="244.5" height="493.79999999999995" fill="#000"/>
<path d="M1330.3 909.3L1421.0 913.2L1449.0 899.5L1477.0 888.0L1509.6 876.7L1556.0 862.7L1602.8 852.0L1655.0 842.4L1660.0 842.0L1660.0 1040.4L1655.0 1040.0L1602.8 1030.4L1556.0 1019.7L1509.6 1005.7L1477.0 994.4L1449.0 982.9L1421.0 969.2L1330.3 973.1Z" fill="#050505"/>
<g clip-path="url(#nc)"><rect x="1330" y="880" width="200" height="130" fill="url(#p4)" mask="url(#nm)"/><rect x="1440" y="830" width="225" height="220" fill="url(#spk)" opacity=".62"/><rect x="1440" y="830" width="225" height="220" fill="url(#spk)" opacity=".5" transform="translate(37 23)"/></g>
<g clip-path="url(#mc)">
<rect x="1659.0" y="346.0" width="1612.0" height="1189.0" fill="#9e9e9e"/>
<path d="M2515.5 346L2515.9 386L2516.4 426L2516.8 466L2517.1 506L2517.3 546L2517.3 586L2517.1 626L2516.7 666L2516.3 706L2515.8 746L2515.4 786L2515.1 826L2515.0 866L2515.1 906L2515.4 946L2515.8 986L2516.3 1026L2516.7 1066L2517.1 1106L2517.3 1146L2517.3 1186L2517.2 1226L2516.8 1266L2516.4 1306L2515.9 1346L2515.5 1386L2515.2 1426L2515.0 1466L2515.1 1506M2526.5 346L2526.5 386L2526.8 426L2527.2 466L2527.7 506L2528.2 546L2528.5 586L2528.8 626L2528.8 666L2528.7 706L2528.3 746L2527.9 786L2527.4 826L2527.0 866L2526.6 906L2526.5 946L2526.5 986L2526.7 1026L2527.1 1066L2527.6 1106L2528.0 1146L2528.5 1186L2528.7 1226L2528.8 1266L2528.7 1306L2528.4 1346L2528.0 1386L2527.5 1426L2527.1 1466L2526.7 1506M2538.4 346L2538.2 386L2538.2 426L2538.4 466L2538.8 506L2539.3 546L2539.8 586L2540.2 626L2540.5 666L2540.6 706L2540.5 746L2540.2 786L2539.8 826L2539.3 866L2538.8 906L2538.4 946L2538.2 986L2538.2 1026L2538.4 1066L2538.7 1106L2539.2 1146L2539.7 1186L2540.1 1226L2540.4 1266L2540.6 1306L2540.5 1346L2540.3 1386L2539.9 1426L2539.4 1466L2538.9 1506M2550.5 346L2550.2 386L2550.2 426L2550.3 466L2550.6 506L2551.1 546L2551.6 586L2552.0 626L2552.4 666L2552.6 706L2552.6 746L2552.4 786L2552.0 826L2551.5 866L2551.0 906L2550.6 946L2550.3 986L2550.2 1026L2550.3 1066L2550.5 1106L2550.9 1146L2551.4 1186L2551.9 1226L2552.3 1266L2552.6 1306L2552.6 1346L2552.5 1386L2552.1 1426L2551.7 1466L2551.2 1506M2564.2 346L2563.7 386L2563.2 426L2562.8 466L2562.5 506L2562.5 546L2562.6 586L2563.0 626L2563.4 666L2564.0 706L2564.4 746L2564.8 786L2565.0 826L2564.9 866L2564.7 906L2564.3 946L2563.8 986L2563.3 1026L2562.8 1066L2562.5 1106L2562.4 1146L2562.6 1186L2562.9 1226L2563.3 1266L2563.8 1306L2564.3 1346L2564.7 1386L2564.9 1426L2565.0 1466L2564.8 1506M2577.5 346L2577.2 386L2576.7 426L2576.1 466L2575.6 506L2575.3 546L2575.1 586L2575.1 626L2575.3 666L2575.7 706L2576.3 746L2576.8 786L2577.2 826L2577.6 866L2577.7 906L2577.6 946L2577.3 986L2576.8 1026L2576.3 1066L2575.8 1106L2575.3 1146L2575.1 1186L2575.1 1226L2575.3 1266L2575.6 1306L2576.1 1346L2576.7 1386L2577.1 1426L2577.5 1466L2577.7 1506M2590.7 346L2590.4 386L2590.0 426L2589.4 466L2588.9 506L2588.4 546L2588.1 586L2588.1 626L2588.2 666L2588.6 706L2589.1 746L2589.6 786L2590.1 826L2590.5 866L2590.7 906L2590.7 946L2590.5 986L2590.1 1026L2589.6 1066L2589.0 1106L2588.5 1146L2588.2 1186L2588.1 1226L2588.2 1266L2588.5 1306L2589.0 1346L2589.5 1386L2590.0 1426L2590.5 1466L2590.7 1506M2604.2 346L2604.3 386L2604.2 426L2603.9 466L2603.4 506L2602.8 546L2602.3 586L2601.8 626L2601.6 666L2601.5 706L2601.7 746L2602.1 786L2602.6 826L2603.2 866L2603.7 906L2604.1 946L2604.3 986L2604.2 1026L2604.0 1066L2603.5 1106L2603.0 1146L2602.4 1186L2601.9 1226L2601.6 1266L2601.5 1306L2601.6 1346L2602.0 1386L2602.5 1426L2603.0 1466L2603.6 1506M2616.8 346L2617.4 386L2617.8 426L2618.2 466L2618.2 506L2618.1 546L2617.7 586L2617.2 626L2616.6 666L2616.1 706L2615.6 746L2615.4 786L2615.4 826L2615.7 866L2616.1 906L2616.6 946L2617.2 986L2617.7 1026L2618.1 1066L2618.2 1106L2618.1 1146L2617.8 1186L2617.3 1226L2616.7 1266L2616.2 1306L2615.7 1346L2615.4 1386L2615.4 1426L2615.6 1466L2616.0 1506M2632.5 346L2632.7 386L2632.5 426L2632.2 466L2631.6 506L2631.0 546L2630.4 586L2630.0 626L2629.7 666L2629.7 706L2629.9 746L2630.4 786L2630.9 826L2631.5 866L2632.1 906L2632.5 946L2632.6 986L2632.6 1026L2632.3 1066L2631.8 1106L2631.2 1146L2630.6 1186L2630.1 1226L2629.8 1266L2629.7 1306L2629.9 1346L2630.2 1386L2630.8 1426L2631.4 1466L2632.0 1506M2645.9 346L2645.3 386L2644.8 426L2644.5 466L2644.5 506L2644.7 546L2645.1 586L2645.7 626L2646.3 666L2646.9 706L2647.3 746L2647.5 786L2647.5 826L2647.2 866L2646.7 906L2646.1 946L2645.5 986L2644.9 1026L2644.6 1066L2644.5 1106L2644.6 1146L2645.0 1186L2645.5 1226L2646.1 1266L2646.7 1306L2647.2 1346L2647.5 1386L2647.5 1426L2647.3 1466L2646.8 1506M2659.9 346L2659.7 386L2659.8 426L2660.1 466L2660.6 506L2661.3 546L2661.9 586L2662.4 626L2662.8 666L2662.9 706L2662.7 746L2662.3 786L2661.7 826L2661.1 866L2660.4 906L2660.0 946L2659.7 986L2659.7 1026L2660.0 1066L2660.5 1106L2661.1 1146L2661.8 1186L2662.3 1226L2662.7 1266L2662.9 1306L2662.7 1346L2662.4 1386L2661.8 1426L2661.2 1466L2660.6 1506M2676.3 346L2676.9 386L2677.5 426L2678.1 466L2678.5 506L2678.7 546L2678.6 586L2678.2 626L2677.7 666L2677.0 706L2676.4 746L2675.8 786L2675.5 826L2675.5 866L2675.7 906L2676.1 946L2676.7 986L2677.4 1026L2678.0 1066L2678.5 1106L2678.7 1146L2678.6 1186L2678.3 1226L2677.8 1266L2677.2 1306L2676.5 1346L2675.9 1386L2675.6 1426L2675.4 1466L2675.6 1506M2694.0 346L2693.3 386L2692.7 426L2692.1 466L2691.8 506L2691.7 546L2691.9 586L2692.4 626L2693.0 666L2693.7 706L2694.3 746L2694.8 786L2695.0 826L2695.0 866L2694.7 906L2694.2 946L2693.5 986L2692.8 1026L2692.2 1066L2691.8 1106L2691.7 1146L2691.8 1186L2692.2 1226L2692.8 1266L2693.5 1306L2694.2 1346L2694.7 1386L2695.0 1426L2695.0 1466L2694.8 1506M2710.7 346L2711.3 386L2711.7 426L2711.9 466L2711.8 506L2711.4 546L2710.9 586L2710.2 626L2709.5 666L2708.9 706L2708.5 746L2708.5 786L2708.7 826L2709.1 866L2709.8 906L2710.5 946L2711.2 986L2711.7 1026L2711.9 1066L2711.9 1106L2711.6 1146L2711.0 1186L2710.3 1226L2709.6 1266L2709.0 1306L2708.6 1346L2708.4 1386L2708.6 1426L2709.0 1466L2709.6 1506M2729.3 346L2728.9 386L2728.3 426L2727.6 466L2726.9 506L2726.3 546L2725.9 586L2725.8 626L2726.1 666L2726.6 706L2727.2 746L2728.0 786L2728.7 826L2729.2 866L2729.4 906L2729.4 946L2729.0 986L2728.5 1026L2727.8 1066L2727.0 1106L2726.4 1146L2726.0 1186L2725.8 1226L2726.0 1266L2726.4 1306L2727.1 1346L2727.8 1386L2728.5 1426L2729.1 1466L2729.4 1506M2744.8 346L2745.5 386L2746.3 426L2747.0 466L2747.5 506L2747.7 546L2747.5 586L2747.1 626L2746.5 666L2745.7 706L2745.0 746L2744.4 786L2744.0 826L2743.9 866L2744.1 906L2744.7 946L2745.4 986L2746.1 1026L2746.8 1066L2747.4 1106L2747.6 1146L2747.6 1186L2747.2 1226L2746.7 1266L2745.9 1306L2745.1 1346L2744.5 1386L2744.0 1426L2743.9 1466L2744.1 1506M2766.2 346L2765.6 386L2764.9 426L2764.1 466L2763.4 506L2762.9 546L2762.7 586L2762.8 626L2763.3 666L2764.0 706L2764.8 746L2765.5 786L2766.2 826L2766.5 866L2766.6 906L2766.3 946L2765.8 986L2765.0 1026L2764.2 1066L2763.5 1106L2763.0 1146L2762.7 1186L2762.8 1226L2763.1 1266L2763.8 1306L2764.6 1346L2765.4 1386L2766.0 1426L2766.5 1466L2766.6 1506M2782.3 346L2782.3 386L2782.7 426L2783.3 466L2784.1 506L2784.9 546L2785.6 586L2786.1 626L2786.3 666L2786.2 706L2785.7 746L2785.0 786L2784.1 826L2783.3 866L2782.7 906L2782.3 946L2782.3 986L2782.5 1026L2783.1 1066L2783.9 1106L2784.7 1146L2785.5 1186L2786.0 1226L2786.3 1266L2786.2 1306L2785.8 1346L2785.1 1386L2784.3 1426L2783.5 1466L2782.8 1506M2806.8 346L2806.5 386L2806.0 426L2805.2 466L2804.3 506L2803.5 546L2802.9 586L2802.6 626L2802.6 666L2803.0 706L2803.7 746L2804.5 786L2805.4 826L2806.1 866L2806.6 906L2806.8 946L2806.6 986L2806.1 1026L2805.4 1066L2804.5 1106L2803.7 1146L2803.0 1186L2802.6 1226L2802.6 1266L2802.9 1306L2803.5 1346L2804.3 1386L2805.2 1426L2806.0 1466L2806.5 1506M2826.3 346L2827.1 386L2827.8 426L2828.1 466L2828.1 506L2827.7 546L2827.0 586L2826.1 626L2825.2 666L2824.4 706L2823.9 746L2823.7 786L2823.9 826L2824.4 866L2825.2 906L2826.1 946L2826.9 986L2827.6 1026L2828.0 1066L2828.1 1106L2827.8 1146L2827.2 1186L2826.3 1226L2825.4 1266L2824.6 1306L2824.0 1346L2823.7 1386L2823.8 1426L2824.2 1466L2825.0 1506M2845.9 346L2845.7 386L2845.8 426L2846.3 466L2847.1 506L2848.0 546L2848.9 586L2849.7 626L2850.2 666L2850.3 706L2850.0 746L2849.4 786L2848.5 826L2847.6 866L2846.7 906L2846.1 946L2845.7 986L2845.8 1026L2846.2 1066L2846.9 1106L2847.8 1146L2848.7 1186L2849.5 1226L2850.1 1266L2850.3 1306L2850.1 1346L2849.6 1386L2848.7 1426L2847.8 1466L2846.9 1506M2868.6 346L2868.8 386L2869.4 426L2870.3 466L2871.2 506L2872.2 546L2872.9 586L2873.3 626L2873.3 666L2872.9 706L2872.2 746L2871.3 786L2870.3 826L2869.4 866L2868.8 906L2868.6 946L2868.7 986L2869.2 1026L2870.0 1066L2871.0 1106L2872.0 1146L2872.7 1186L2873.2 1226L2873.3 1266L2873.0 1306L2872.4 1346L2871.5 1386L2870.5 1426L2869.6 1466L2868.9 1506M2897.3 346L2896.9 386L2896.2 426L2895.2 466L2894.2 506L2893.3 546L2892.6 586L2892.4 626L2892.5 666L2893.0 706L2893.8 746L2894.8 786L2895.8 826L2896.7 866L2897.2 906L2897.3 946L2897.0 986L2896.4 1026L2895.4 1066L2894.4 1106L2893.5 1146L2892.8 1186L2892.4 1226L2892.4 1266L2892.9 1306L2893.6 1346L2894.6 1386L2895.6 1426L2896.5 1466L2897.1 1506M2922.1 346L2922.2 386L2921.9 426L2921.2 466L2920.3 506L2919.2 546L2918.2 586L2917.5 626L2917.1 666L2917.2 706L2917.6 746L2918.4 786L2919.4 826L2920.5 866L2921.4 906L2922.0 946L2922.2 986L2922.0 1026L2921.4 1066L2920.5 1106L2919.5 1146L2918.5 1186L2917.6 1226L2917.2 1266L2917.1 1306L2917.5 1346L2918.2 1386L2919.2 1426L2920.2 1466L2921.2 1506M2948.0 346L2948.2 386L2947.8 426L2947.1 466L2946.1 506L2945.0 546L2944.0 586L2943.2 626L2942.8 666L2942.9 706L2943.4 746L2944.2 786L2945.3 826L2946.3 866L2947.3 906L2947.9 946L2948.2 986L2948.0 1026L2947.3 1066L2946.4 1106L2945.3 1146L2944.2 1186L2943.4 1226L2942.9 1266L2942.8 1306L2943.2 1346L2944.0 1386L2945.0 1426L2946.1 1466L2947.1 1506M2975.0 346L2974.3 386L2973.4 426L2972.2 466L2971.1 506L2970.2 546L2969.7 586L2969.6 626L2969.9 666L2970.7 706L2971.7 746L2972.9 786L2973.9 826L2974.7 866L2975.1 906L2975.0 946L2974.5 986L2973.6 1026L2972.5 1066L2971.4 1106L2970.4 1146L2969.8 1186L2969.6 1226L2969.8 1266L2970.5 1306L2971.5 1346L2972.6 1386L2973.7 1426L2974.6 1466L2975.1 1506M3001.1 346L3002.1 386L3002.9 426L3003.2 466L3003.0 506L3002.4 546L3001.4 586L3000.2 626L2999.1 666L2998.1 706L2997.5 746L2997.4 786L2997.7 826L2998.5 866L2999.6 906L3000.8 946L3001.9 986L3002.7 1026L3003.1 1066L3003.1 1106L3002.6 1146L3001.7 1186L3000.5 1226L2999.3 1266L2998.3 1306L2997.6 1346L2997.4 1386L2997.6 1426L2998.3 1466L2999.3 1506M3032.2 346L3032.3 386L3031.9 426L3031.1 466L3030.0 506L3028.8 546L3027.6 586L3026.8 626L3026.4 666L3026.4 706L3027.0 746L3027.9 786L3029.1 826L3030.3 866L3031.4 906L3032.1 946L3032.3 986L3032.0 1026L3031.3 1066L3030.3 1106L3029.1 1146L3027.9 1186L3027.0 1226L3026.4 1266L3026.4 1306L3026.8 1346L3027.7 1386L3028.8 1426L3030.1 1466L3031.2 1506M3059.5 346L3060.7 386L3061.6 426L3062.1 466L3062.2 506L3061.7 546L3060.9 586L3059.7 626L3058.5 666L3057.4 706L3056.6 746L3056.2 786L3056.4 826L3057.0 866L3058.0 906L3059.2 946L3060.4 986L3061.4 1026L3062.1 1066L3062.2 1106L3061.9 1146L3061.1 1186L3060.0 1226L3058.8 1266L3057.6 1306L3056.8 1346L3056.3 1386L3056.3 1426L3056.8 1466L3057.7 1506M3088.4 346L3089.6 386L3090.8 426L3091.9 466L3092.7 506L3093.0 546L3092.9 586L3092.2 626L3091.2 666L3090.0 706L3088.8 746L3087.8 786L3087.2 826L3087.0 866L3087.4 906L3088.2 946L3089.3 986L3090.5 1026L3091.7 1066L3092.5 1106L3093.0 1146L3092.9 1186L3092.4 1226L3091.5 1266L3090.3 1306L3089.1 1346L3088.0 1386L3087.3 1426L3087.0 1466L3087.3 1506M3119.3 346L3120.2 386L3121.3 426L3122.6 466L3123.6 506L3124.4 546L3124.8 586L3124.6 626L3124.0 666L3122.9 706L3121.7 746L3120.5 786L3119.5 826L3118.9 866L3118.8 906L3119.1 946L3119.9 986L3121.0 1026L3122.3 1066L3123.4 1106L3124.3 1146L3124.7 1186L3124.7 1226L3124.1 1266L3123.2 1306L3122.0 1346L3120.8 1386L3119.8 1426L3119.0 1466L3118.8 1506M3156.8 346L3157.4 386L3157.4 426L3157.0 466L3156.1 506L3155.0 546L3153.7 586L3152.6 626L3151.8 666L3151.5 706L3151.6 746L3152.2 786L3153.2 826L3154.4 866L3155.6 906L3156.6 946L3157.3 986L3157.4 1026L3157.1 1066L3156.3 1106L3155.3 1146L3154.0 1186L3152.9 1226L3152.0 1266L3151.5 1306L3151.5 1346L3152.0 1386L3152.9 1426L3154.1 1466L3155.3 1506M3185.1 346L3185.3 386L3185.9 426L3186.9 466L3188.1 506L3189.3 546L3190.3 586L3191.0 626L3191.1 666L3190.7 706L3189.9 746L3188.8 786L3187.6 826L3186.5 866L3185.6 906L3185.2 946L3185.2 986L3185.7 1026L3186.7 1066L3187.9 1106L3189.1 1146L3190.1 1186L3190.9 1226L3191.1 1266L3190.9 1306L3190.2 1346L3189.1 1386L3187.9 1426L3186.7 1466L3185.8 1506M3219.9 346L3220.5 386L3221.4 426L3222.6 466L3223.8 506L3224.9 546L3225.6 586L3225.8 626L3225.5 666L3224.8 706L3223.7 746L3222.5 786L3221.3 826L3220.4 866L3219.9 906L3219.8 946L3220.3 986L3221.2 1026L3222.3 1066L3223.5 1106L3224.6 1146L3225.4 1186L3225.8 1226L3225.6 1266L3225.0 1306L3224.0 1346L3222.8 1386L3221.6 1426L3220.6 1466L3220.0 1506M3257.9 346L3256.7 386L3255.7 426L3255.2 466L3255.1 506L3255.6 546L3256.4 586L3257.6 626L3258.8 666L3259.9 706L3260.7 746L3261.1 786L3260.9 826L3260.3 866L3259.3 906L3258.2 946L3256.9 986L3255.9 1026L3255.3 1066L3255.1 1106L3255.4 1146L3256.2 1186L3257.3 1226L3258.5 1266L3259.6 1306L3260.5 1346L3261.0 1386L3261.0 1426L3260.5 1466L3259.6 1506M2505 347.1L2539 332.1M2505 361.0L2539 346.2L2573 330.0M2505 369.5L2539 355.0L2573 339.7M2505 382.8L2539 369.0L2573 354.0L2607 337.0M2505 393.3L2539 378.9L2573 363.4L2607 346.4L2641 330.5M2505 405.7L2539 392.1L2573 377.3L2607 360.7L2641 344.7L2675 329.3M2505 414.2L2539 401.1L2573 387.1L2607 371.7L2641 357.2L2675 343.3L2709 329.0M2505 425.6L2539 412.8L2573 399.3L2607 384.3L2641 370.0L2675 356.4L2709 342.2L2743 326.2M2505 438.5L2539 426.2L2573 412.8L2607 397.6L2641 383.0L2675 368.9L2709 354.2L2743 337.9M2505 450.4L2539 437.8L2573 424.0L2607 408.6L2641 393.8L2675 379.7L2709 365.4L2743 349.9L2777 335.2M2505 460.1L2539 448.5L2573 435.9L2607 421.7L2641 408.1L2675 394.8L2709 381.0L2743 365.5L2777 350.6L2811 336.2M2505 470.4L2539 458.2L2573 445.4L2607 431.4L2641 418.3L2675 405.9L2709 393.3L2743 379.3L2777 365.8L2811 352.6L2845 339.7M2505 484.0L2539 472.4L2573 459.7L2607 445.5L2641 431.8L2675 418.5L2709 405.1L2743 390.3L2777 376.4L2811 363.4L2845 351.1L2871 342.3M2505 494.6L2539 483.7L2573 471.7L2607 458.1L2641 445.0L2675 432.3L2709 419.1L2743 404.5L2777 390.6L2811 377.5L2845 365.1L2879 353.5L2913 342.6L2947 332.2M2505 505.8L2539 495.1L2573 483.5L2607 470.3L2641 457.5L2675 445.1L2709 432.2L2743 418.0L2777 404.4L2811 391.6L2845 379.5L2879 368.1L2913 357.5L2920 355.4M2505 517.5L2539 506.8L2573 495.1L2607 481.9L2641 469.2L2675 456.9L2709 444.3L2743 430.6L2777 417.6L2811 405.5L2845 394.1L2879 383.4L2913 373.4L2947 363.7L2981 354.3L3015 346.2L3049 339.3M2505 526.5L2539 515.7L2573 504.2L2607 491.7L2641 480.1L2675 469.3L2709 458.2L2743 446.0L2777 434.2L2811 422.8L2845 411.6L2879 400.6L2913 389.6L2945 379.3M2505 539.2L2539 529.5L2573 518.7L2607 506.6L2641 494.9L2675 483.4L2709 471.5L2743 458.3L2777 445.8L2811 433.8L2845 422.6L2879 412.0L2913 402.1L2947 392.8L2981 384.0L3015 376.6L3049 370.5L3083 364.4L3117 358.0L3151 351.5L3185 344.9L3219 340.2M2505 550.1L2539 539.7L2573 528.4L2607 516.1L2641 504.6L2675 493.8L2709 483.0L2743 471.2L2777 460.2L2811 449.8L2845 439.7L2879 429.9L2895 425.4M2505 562.3L2539 552.4L2573 541.6L2607 529.6L2641 518.0L2675 507.0L2709 495.9L2743 483.9L2777 472.6L2811 462.2L2845 452.3L2879 443.0L2913 434.1L2947 425.4L2981 416.8L3015 409.3L3049 402.7L3083 395.9L3117 389.1L3151 382.3L3185 375.7L3219 371.3L3253 368.5L3287 366.2M2505 573.3L2539 564.1L2573 554.1L2607 542.7L2641 531.6L2675 520.9L2709 509.9L2743 497.8L2777 486.4L2811 475.7L2845 465.8L2879 456.5L2913 447.7L2920 446.1M2505 582.4L2539 573.0L2573 563.1L2607 552.3L2641 542.3L2675 533.0L2709 523.5L2743 513.0L2777 502.9L2811 493.1L2845 483.4L2879 473.8L2913 464.3L2947 454.9L2981 445.7L3015 437.7L3049 431.1L3083 425.0L3117 419.2L3151 413.9L3185 409.0L3219 406.2L3253 404.7L3287 403.2M2505 593.2L2539 584.4L2573 575.1L2607 565.0L2641 555.6L2675 546.7L2709 537.5L2743 527.1L2777 517.0L2811 507.1L2845 497.3L2879 487.6L2913 478.1L2920 476.3M2505 607.0L2539 598.4L2573 589.0L2607 578.3L2641 568.1L2675 558.3L2709 548.3L2743 537.5L2777 527.5L2811 518.2L2845 509.4L2879 501.3L2913 493.5L2947 486.0L2981 478.6L3015 472.0L3049 466.4L3083 460.5L3117 454.5L3151 448.4L3185 442.4L3219 438.4L3253 435.8L3287 433.6M2505 616.7L2539 609.1L2573 600.7L2607 591.3L2641 582.1L2675 573.2L2709 563.7L2743 553.1L2777 542.8L2811 532.9L2845 523.5L2879 514.6L2895 510.7M2505 628.0L2539 619.5L2573 610.5L2607 600.7L2641 591.6L2675 583.1L2709 574.7L2743 565.5L2777 556.9L2811 548.6L2845 540.6L2879 532.7L2913 524.7L2947 516.8L2981 508.9L3015 501.8L3049 495.8L3083 489.9L3117 484.4L3151 479.2L3185 474.5L3219 471.8L3253 470.5L3287 469.3M2505 639.7L2539 632.5L2573 624.6L2607 615.6L2641 606.9L2675 598.3L2709 589.3L2743 579.2L2777 569.6L2811 560.5L2845 551.9L2879 543.8L2913 536.4L2947 529.5L2981 523.0L3000 519.5M2505 651.7L2539 644.4L2573 636.2L2607 627.0L2641 618.1L2675 609.5L2709 600.7L2743 591.3L2777 582.4L2811 574.2L2845 566.6L2879 559.6L2913 552.9L2947 546.5L2981 540.3L3015 534.8L3049 530.0L3083 525.0L3117 519.8L3151 514.5L3185 509.2L3219 505.5L3253 503.1L3287 501.0M2505 660.3L2539 653.5L2573 646.3L2607 638.4L2641 631.0L2675 623.8L2709 616.3L2743 607.7L2777 599.3L2811 590.9L2845 582.7L2879 574.6L2913 566.9L2947 559.5L2972 554.2M2505 671.5L2539 664.8L2573 657.8L2607 650.1L2641 643.0L2675 636.2L2709 629.2L2743 621.1L2777 613.2L2811 605.3L2845 597.5L2879 589.8L2913 582.3L2947 575.0L2981 568.2L3015 562.5L3049 558.1L3083 554.0L3117 550.4L3151 546.9L3185 543.5L3219 541.5L3253 540.3L3287 538.7M2505 684.3L2539 678.3L2573 671.6L2607 664.1L2641 656.7L2675 649.4L2709 641.6L2743 633.0L2777 624.7L2805 618.2M2505 694.6L2539 688.9L2573 682.7L2607 675.8L2641 669.1L2675 662.4L2709 655.4L2743 647.4L2777 639.5L2811 631.9L2845 624.5L2879 617.5L2913 610.9L2947 604.8L2981 599.2L3015 594.7L3049 591.3L3083 588.0L3117 584.8L3151 581.5L3185 577.9L3219 575.4L3253 573.5L3287 571.3M2505 706.7L2539 700.2L2573 693.3L2607 685.7L2641 678.6L2675 672.2L2709 665.8L2743 658.9L2777 652.5L2811 646.5L2845 640.7L2879 635.0L2895 632.4M2505 716.6L2539 711.4L2573 705.8L2607 699.6L2641 693.7L2675 687.9L2709 681.7L2743 674.5L2777 667.4L2811 660.5L2845 653.7L2879 647.1L2913 641.0L2947 635.2L2981 629.9L3015 625.7L3049 622.5L3083 619.6L3117 616.8L3151 614.0L3185 611.0L3219 608.9L3253 607.4L3287 605.5M2505 727.7L2539 722.8L2573 717.5L2607 711.7L2641 706.1L2675 700.6L2709 694.7L2743 688.0L2777 681.2L2811 674.6L2845 668.1L2879 661.9L2913 655.9L2947 650.4L2972 646.6M2505 741.2L2539 736.0L2573 730.2L2607 723.7L2641 717.3L2675 711.2L2709 705.0L2743 698.4L2777 692.3L2811 686.8L2845 681.8L2879 677.1L2913 672.7L2947 668.5L2981 664.3L3015 660.5L3049 657.0L3083 653.4L3117 649.5L3151 645.6L3185 641.7L3219 639.0L3253 637.2L3287 635.8M2505 752.4L2539 747.4L2573 741.8L2607 735.6L2641 729.5L2675 723.7L2709 717.9L2743 711.7L2777 706.1L2811 701.0L2845 696.3L2879 692.0L2913 687.9L2920 687.1M2505 763.6L2539 759.1L2573 754.0L2607 748.2L2641 742.6L2675 737.0L2709 731.4L2743 725.4L2777 719.8L2811 714.7L2845 710.1L2879 706.0L2913 702.1L2947 698.5L2981 694.9L3015 691.7L3049 688.9L3083 685.8L3117 682.5L3151 679.0L3185 675.4L3219 672.8L3253 671.1L3287 669.6M2505 774.8L2539 770.3L2573 765.3L2607 759.7L2641 754.3L2675 749.1L2709 744.0L2743 738.5L2777 733.6L2811 729.2L2845 725.2L2879 721.4L2913 717.9L2947 714.4L2972 711.8M2505 784.5L2539 780.0L2573 775.3L2607 770.2L2641 765.7L2675 761.5L2709 757.5L2743 753.2L2777 749.2L2811 745.4L2845 741.6L2879 737.8L2913 733.8L2947 729.7L2981 725.4L3015 721.5L3049 718.1L3083 714.9L3117 711.9L3151 709.2L3185 706.9L3219 705.8L3253 705.5L3287 705.4M2505 796.4L2539 793.1L2573 789.5L2607 785.2L2641 780.9L2675 776.5L2709 771.9L2743 766.7L2777 761.8L2811 757.1L2845 752.8L2879 749.0L2913 745.6L2945 742.7M2505 805.7L2539 802.2L2573 798.7L2607 794.9L2641 791.6L2675 788.5L2709 785.3L2743 781.6L2777 778.0L2811 774.2L2845 770.3L2879 766.3L2913 762.3L2947 758.2L2981 754.4L3015 751.1L3049 748.6L3083 746.5L3117 744.7L3151 743.2L3185 741.9L3219 741.4L3253 741.2L3287 740.8M2505 816.8L2539 813.8L2573 810.8L2607 807.6L2641 804.6L2675 801.9L2709 798.9L2743 795.3L2777 791.7L2811 788.0L2845 784.1L2848 783.8M2505 830.6L2539 827.9L2573 824.7L2607 821.0L2641 817.3L2675 813.6L2709 809.9L2743 805.9L2777 802.2L2811 799.0L2845 796.2L2879 793.7L2913 791.5L2947 789.5L2981 787.6L3015 785.8L3049 784.2L3083 782.3L3117 780.1L3151 777.7L3185 775.2L3219 773.3L3253 771.9L3287 770.8M2505 840.4L2539 837.3L2573 834.1L2607 830.8L2641 827.8L2675 825.3L2709 822.8L2743 820.3L2777 818.0L2811 815.7L2826 814.7M2505 852.1L2539 850.4L2573 848.3L2607 845.8L2641 843.1L2675 840.4L2709 837.3L2743 833.9L2777 830.6L2811 827.5L2845 824.7L2879 822.2L2913 820.2L2947 818.4L2981 817.0L3015 815.9L3049 815.1L3083 814.2L3117 813.1L3151 811.7L3185 810.0L3219 808.5L3253 807.1L3287 805.7M2505 863.4L2539 861.9L2573 860.1L2607 857.9L2641 855.5L2675 853.0L2709 850.3L2743 847.2L2777 844.2L2811 841.5L2845 839.0L2848 838.8M2505 874.0L2539 871.7L2573 869.4L2607 867.1L2641 865.1L2675 863.5L2709 862.0L2743 860.5L2777 859.2L2811 857.9L2845 856.5L2879 855.0L2913 853.3L2947 851.3L2981 849.2L3015 847.1L3049 845.2L3083 843.4L3117 841.9L3151 840.7L3185 839.8L3219 839.6L3253 839.9L3287 840.3M2505 885.8L2539 884.9L2573 883.7L2607 882.1L2641 880.3L2675 878.4L2709 876.3L2743 873.9L2777 871.6L2811 869.5L2845 867.7L2848 867.6M2505 895.1L2539 894.1L2573 893.1L2607 892.3L2641 891.6L2675 890.9L2709 890.2L2743 889.1L2777 887.9L2811 886.4L2845 884.8L2879 883.0L2913 881.1L2947 879.3L2981 877.7L3015 876.5L3049 875.8L3083 875.4L3117 875.3L3151 875.3L3185 875.4L3219 875.7L3253 875.9L3287 875.8M2505 908.9L2539 907.8L2573 906.5L2607 904.9L2641 903.3L2675 901.9L2709 900.6L2743 899.4L2777 898.5L2811 897.9L2848 897.6M2505 919.6L2539 919.4L2573 919.0L2607 918.4L2641 917.5L2675 916.5L2709 915.3L2743 913.9L2777 912.7L2811 911.6L2845 910.8L2879 910.3L2913 910.0L2947 910.1L2981 910.3L3015 910.6L3049 910.8L3083 910.9L3117 910.6L3151 910.1L3185 909.2L3219 908.3L3253 907.3L3287 906.4M2505 931.0L2539 931.0L2573 930.8L2607 930.4L2641 929.7L2675 928.9L2709 927.9L2743 926.9L2777 926.1L2811 925.5L2845 925.2L2871 925.1M2505 940.1L2539 940.4L2573 941.0L2607 941.5L2641 942.1L2675 942.5L2709 942.8L2743 942.7L2777 942.4L2811 941.9L2845 941.3L2879 940.6L2913 939.9L2947 939.5L2981 939.3L3015 939.5L3049 939.9L3083 940.6L3117 941.4L3151 942.2L3185 942.8L3219 943.1L3253 943.2L3287 942.9M2505 953.1L2539 952.9L2573 952.7L2607 952.4L2641 952.3L2675 952.4L2709 952.8L2743 953.4L2777 954.2L2811 955.2L2845 956.2L2848 956.3M2505 963.7L2539 964.8L2573 965.9L2607 966.8L2641 967.5L2675 968.0L2709 968.2L2743 968.3L2777 968.3L2811 968.3L2845 968.4L2879 968.8L2913 969.4L2947 970.2L2981 971.3L3015 972.5L3049 973.6L3083 974.7L3117 975.5L3151 976.0L3185 976.2L3219 976.0L3253 975.4L3287 974.7M2505 974.7L2539 975.0L2573 975.5L2607 976.1L2641 977.0L2675 978.1L2709 979.4L2743 981.0L2777 982.7L2811 984.3L2845 985.7L2879 986.9L2920 987.9M2505 987.1L2539 988.4L2573 989.6L2607 990.8L2641 991.6L2675 992.3L2709 992.9L2743 993.7L2777 994.6L2811 995.7L2845 997.1L2879 998.6L2913 1000.4L2947 1002.2L2981 1004.0L3015 1005.5L3049 1006.6L3083 1007.4L3117 1007.9L3151 1008.0L3185 1008.0L3219 1007.6L3253 1007.2L3287 1006.9M2505 998.3L2539 999.9L2573 1001.4L2607 1002.8L2641 1003.9L2675 1004.8L2709 1005.8L2743 1007.0L2777 1008.3L2811 1009.8L2845 1011.5L2879 1013.4L2913 1015.5L2947 1017.6L2972 1019.1M2505 1007.3L2539 1009.4L2573 1011.7L2607 1014.4L2641 1016.8L2675 1019.0L2709 1021.1L2743 1023.1L2777 1024.7L2811 1026.1L2845 1027.2L2879 1028.3L2913 1029.4L2947 1030.7L2981 1032.2L3015 1033.8L3049 1035.4L3083 1037.2L3117 1039.1L3151 1040.9L3185 1042.5L3219 1043.5L3253 1043.8L3287 1043.9M2505 1018.2L2539 1020.3L2573 1022.8L2607 1025.7L2641 1028.5L2675 1031.2L2709 1033.9L2743 1036.6L2777 1038.9L2811 1040.9L2845 1042.5L2879 1043.9L2913 1045.2L2947 1046.4L2972 1047.5M2505 1030.8L2539 1032.5L2573 1034.5L2607 1036.8L2641 1039.2L2675 1041.7L2709 1044.5L2743 1047.8L2777 1051.1L2811 1054.3L2845 1057.4L2879 1060.1L2913 1062.5L2947 1064.5L2981 1066.1L3015 1067.3L3049 1068.0L3083 1068.7L3117 1069.6L3151 1070.7L3185 1072.1L3219 1073.3L3253 1074.5L3287 1075.8M2505 1040.5L2539 1043.3L2573 1046.5L2607 1050.0L2641 1053.5L2675 1056.9L2709 1060.1L2743 1063.4L2777 1066.4L2811 1068.9L2845 1071.1L2848 1071.3M2505 1053.6L2539 1055.9L2573 1058.4L2607 1061.3L2641 1064.1L2675 1067.1L2709 1070.4L2743 1074.2L2777 1078.1L2811 1082.0L2845 1085.7L2879 1089.2L2913 1092.3L2947 1095.1L2981 1097.5L3015 1099.2L3049 1100.4L3083 1101.4L3117 1102.5L3151 1103.7L3185 1105.2L3219 1106.4L3253 1107.6L3287 1108.9M2505 1065.5L2539 1068.3L2573 1071.3L2607 1074.4L2641 1077.4L2675 1080.2L2709 1083.3L2743 1087.0L2777 1090.8L2811 1094.7L2845 1098.7L2879 1102.6L2913 1106.4L2945 1109.8M2505 1076.1L2539 1079.0L2573 1082.1L2607 1085.6L2641 1089.1L2675 1092.6L2709 1096.4L2743 1100.9L2777 1105.4L2811 1109.9L2845 1114.2L2879 1118.4L2913 1122.1L2947 1125.5L2981 1128.5L3015 1130.8L3049 1132.3L3083 1133.8L3117 1135.2L3151 1136.7L3185 1138.5L3219 1139.8L3253 1141.0L3287 1142.4M2505 1086.1L2539 1090.3L2573 1094.8L2607 1099.7L2641 1104.2L2675 1108.3L2709 1112.3L2743 1116.5L2777 1120.2L2811 1123.7L2845 1127.0L2879 1130.2L2895 1131.8M2505 1099.0L2539 1102.7L2573 1106.5L2607 1110.7L2641 1114.6L2675 1118.4L2709 1122.5L2743 1127.2L2777 1132.1L2811 1136.9L2845 1141.8L2879 1146.6L2913 1151.3L2947 1155.7L2981 1159.7L3015 1162.8L3049 1165.2L3083 1167.2L3117 1168.9L3151 1170.6L3185 1172.3L3219 1173.4L3253 1174.2L3287 1175.3M2505 1110.2L2539 1114.6L2573 1119.1L2607 1123.8L2641 1128.1L2675 1132.1L2709 1136.2L2743 1141.0L2777 1145.6L2811 1150.3L2845 1155.2L2879 1160.0L2913 1164.9L2947 1169.8L2972 1173.3M2505 1119.3L2539 1124.3L2573 1129.7L2607 1135.7L2641 1141.3L2675 1146.5L2709 1151.6L2743 1157.0L2777 1161.9L2811 1166.3L2845 1170.5L2879 1174.6L2913 1178.6L2947 1182.7L2981 1187.0L3015 1191.0L3049 1194.6L3083 1198.3L3117 1202.0L3151 1205.5L3185 1208.7L3219 1210.6L3253 1211.6L3287 1212.2M2505 1131.2L2539 1136.5L2573 1142.3L2607 1148.4L2641 1154.1L2675 1159.2L2709 1164.3L2743 1169.7L2777 1174.7L2811 1179.4L2845 1184.0L2848 1184.4M2505 1143.0L2539 1147.5L2573 1152.5L2607 1158.1L2641 1163.6L2675 1169.0L2709 1174.9L2743 1181.5L2777 1188.1L2811 1194.5L2845 1200.7L2879 1206.5L2913 1211.8L2947 1216.7L2981 1221.2L3015 1224.7L3049 1227.3L3083 1229.9L3117 1232.4L3151 1235.1L3185 1238.1L3219 1240.2L3253 1242.0L3287 1243.9M2505 1154.4L2539 1159.3L2573 1164.6L2607 1170.5L2641 1176.1L2675 1181.7L2709 1187.7L2743 1194.6L2777 1201.4L2811 1208.1L2845 1214.6L2871 1219.4M2505 1164.6L2539 1169.7L2573 1175.4L2607 1182.0L2641 1188.4L2675 1194.8L2709 1201.6L2743 1209.2L2777 1216.5L2811 1223.4L2845 1230.0L2879 1236.0L2913 1241.6L2947 1246.6L2981 1251.3L3015 1255.1L3049 1258.1L3083 1261.2L3117 1264.4L3151 1267.8L3185 1271.5L3219 1274.3L3253 1276.5L3287 1278.7M2505 1177.1L2539 1182.6L2573 1188.5L2607 1195.0L2641 1201.3L2675 1207.3L2709 1213.8L2743 1221.2L2777 1228.5L2811 1235.8L2845 1242.9L2879 1249.7L2913 1256.3L2947 1262.4L2972 1266.6M2505 1186.0L2539 1192.1L2573 1198.9L2607 1206.7L2641 1214.3L2675 1221.7L2709 1229.2L2743 1237.4L2777 1245.0L2811 1252.0L2845 1258.5L2879 1264.5L2913 1270.1L2947 1275.4L2981 1280.5L3015 1285.0L3049 1288.9L3083 1293.0L3117 1297.3L3151 1301.8L3185 1306.4L3219 1309.7L3253 1311.9L3287 1313.9M2505 1197.3L2539 1203.6L2573 1210.6L2607 1218.6L2641 1226.4L2675 1234.0L2709 1241.9L2743 1250.5L2777 1258.6L2811 1266.1L2845 1273.1L2848 1273.7M2505 1208.3L2539 1215.0L2573 1222.5L2607 1230.9L2641 1239.2L2675 1247.2L2709 1255.3L2743 1264.2L2777 1272.5L2811 1280.1L2845 1287.2L2879 1293.8L2913 1299.9L2947 1305.7L2981 1311.4L3015 1316.4L3049 1320.6L3083 1325.1L3117 1329.8L3151 1334.7L3185 1339.6L3219 1343.1L3253 1345.5L3287 1347.6M2505 1219.5L2539 1226.7L2573 1234.8L2607 1243.7L2641 1252.4L2675 1260.6L2709 1268.9L2743 1277.9L2777 1286.2L2811 1293.8L2826 1297.0M2505 1230.8L2539 1238.0L2573 1245.9L2607 1255.0L2641 1263.8L2675 1272.3L2709 1281.2L2743 1290.8L2777 1299.8L2811 1308.3L2845 1316.1L2879 1323.4L2913 1330.1L2947 1336.5L2981 1342.7L3015 1348.0L3049 1352.5L3083 1357.2L3117 1362.1L3151 1367.2L3185 1372.5L3219 1376.2L3253 1378.8L3287 1381.1M2505 1243.5L2539 1250.6L2573 1258.3L2607 1267.0L2641 1275.4L2675 1283.7L2709 1292.4L2743 1302.3L2777 1311.9L2811 1321.1L2845 1330.0L2879 1338.4L2913 1346.3L2945 1353.3M2505 1253.1L2539 1260.9L2573 1269.5L2607 1279.3L2641 1288.8L2675 1298.0L2709 1307.4L2743 1317.7L2777 1327.4L2811 1336.4L2845 1344.8L2879 1352.6L2913 1359.9L2947 1366.8L2981 1373.5L3015 1379.3L3049 1384.2L3083 1389.4L3117 1394.7L3151 1400.2L3185 1405.8L3219 1409.8L3253 1412.5L3287 1414.9M2505 1266.2L2539 1273.9L2573 1282.1L2607 1291.4L2641 1300.4L2675 1309.1L2709 1318.4L2743 1328.8L2777 1339.0L2811 1348.9L2845 1358.4L2848 1359.2M2505 1278.0L2539 1286.6L2573 1295.6L2607 1305.4L2641 1314.5L2675 1323.1L2709 1332.0L2743 1342.0L2777 1351.6L2811 1361.2L2845 1370.6L2879 1379.9L2913 1389.1L2947 1398.0L2981 1406.6L3015 1413.9L3049 1419.8L3083 1425.2L3117 1430.2L3151 1434.8L3185 1439.2L3219 1441.8L3253 1443.2L3287 1444.9M2505 1288.2L2539 1296.4L2573 1305.4L2607 1315.4L2641 1325.2L2675 1334.7L2709 1344.7L2743 1355.9L2777 1366.9L2811 1377.4L2848 1388.4M2505 1299.2L2539 1308.8L2573 1319.1L2607 1330.2L2641 1340.5L2675 1350.2L2709 1359.8L2743 1370.4L2777 1380.4L2811 1389.9L2845 1399.2L2879 1408.3L2913 1417.4L2947 1426.5L2981 1435.6L3015 1443.6L3049 1450.3L3083 1456.9L3117 1463.1L3151 1468.9L3185 1474.3L3219 1477.4L3253 1478.9L3287 1480.3M2505 1311.1L2539 1320.8L2573 1331.1L2607 1342.3L2641 1352.6L2675 1362.3L2709 1372.0L2743 1382.9L2777 1393.3L2811 1403.4L2826 1407.8M2505 1322.7L2539 1332.0L2573 1341.9L2607 1352.9L2641 1363.2L2675 1373.2L2709 1383.6L2743 1395.3L2777 1406.8L2811 1418.1L2845 1429.1L2879 1439.7L2913 1450.0L2947 1459.9L2981 1469.2L3015 1476.8L3049 1482.9L3083 1488.6L3117 1493.9L3151 1499.1L3185 1504.3L3219 1507.6L3253 1509.9L3287 1512.4M2505 1332.4L2539 1342.8L2573 1354.1L2607 1366.3L2641 1377.8L2675 1388.6L2709 1399.3L2743 1411.1L2777 1422.1L2811 1432.5L2845 1442.6L2871 1450.1M2505 1345.1L2539 1355.1L2573 1365.6L2607 1377.3L2641 1388.3L2675 1398.8L2709 1409.7L2743 1422.1L2777 1434.2L2811 1446.0L2845 1457.6L2879 1468.8L2913 1479.7L2947 1490.2L2981 1500.1L3015 1508.3L3049 1514.8L3083 1520.9L3117 1526.7L3151 1532.2L3185 1537.7L3219 1541.2L3253 1543.4M2505 1353.7L2539 1364.4L2573 1376.1L2607 1389.2L2641 1401.7L2675 1413.6L2709 1425.7L2743 1438.7L2777 1450.9L2811 1462.4L2826 1467.2M2505 1367.5L2539 1378.3L2573 1389.7L2607 1402.1L2641 1413.8L2675 1424.8L2709 1436.2L2743 1449.1L2777 1461.5L2811 1473.7L2845 1485.7L2879 1497.4L2913 1508.9L2947 1520.0L2981 1530.6L3015 1539.6L3049 1546.9M2505 1376.5L2539 1387.2L2573 1398.9L2607 1412.2L2641 1425.0L2675 1437.4L2709 1450.3L2743 1464.6L2777 1478.1L2811 1490.9L2845 1502.9L2871 1511.6M2505 1388.1L2539 1398.9L2573 1410.8L2607 1424.2L2641 1437.2L2675 1449.8L2709 1462.9L2743 1477.5L2777 1491.4L2811 1504.7L2845 1517.2L2879 1529.0L2913 1540.1L2947 1550.6M2505 1398.9L2539 1410.9L2573 1424.0L2607 1438.5L2641 1452.1L2675 1465.0L2709 1478.0L2743 1492.1L2777 1505.3L2811 1517.7L2845 1529.5L2879 1540.9L2913 1552.0M2505 1411.6L2539 1423.0L2573 1435.3L2607 1449.0L2641 1462.1L2675 1474.8L2709 1488.0L2743 1502.9L2777 1517.4L2811 1531.4L2845 1544.9M2505 1423.4L2539 1435.6L2573 1448.4L2607 1462.5L2641 1475.7L2675 1488.3L2709 1501.4L2743 1516.0L2777 1530.2L2811 1544.1M2505 1434.5L2539 1446.7L2573 1459.7L2607 1474.0L2641 1487.6L2675 1500.6L2709 1514.1L2743 1529.4L2777 1544.2M2505 1443.1L2539 1455.9L2573 1469.9L2607 1485.6L2641 1500.7L2675 1515.1L2709 1529.8L2743 1545.9M2505 1456.3L2539 1469.8L2573 1484.1L2607 1499.8L2641 1514.4L2675 1528.1L2709 1542.0M2505 1468.1L2539 1481.5L2573 1495.8L2607 1511.4L2641 1526.0L2675 1539.8L2709 1554.0M2505 1478.3L2539 1491.3L2573 1505.4L2607 1521.3L2641 1536.5L2675 1551.3M2505 1488.8L2539 1502.2L2573 1516.8L2607 1533.2L2641 1549.0M2505 1499.0L2539 1513.3L2573 1528.9L2607 1546.3M2505 1512.7L2539 1527.4L2573 1543.0M2505 1523.9L2539 1538.2L2573 1553.6M2505 1532.9L2539 1547.6" fill="none" stroke="#000" stroke-width="1.25"/>
<path d="M2576 352h0M2576 362h0M2589 355h0M2603 348h0M2576 376h0M2589 369h0M2603 363h0M2617 356h0M2631 349h0M2576 386h0M2589 380h0M2603 374h0M2617 367h0M2631 361h0M2646 355h0M2661 349h0M2576 398h0M2589 392h0M2603 386h0M2617 380h0M2631 374h0M2646 368h0M2661 362h0M2677 356h0M2693 349h0M2576 411h0M2589 405h0M2603 399h0M2617 393h0M2631 387h0M2646 381h0M2661 375h0M2677 368h0M2693 361h0M2710 354h0M2576 422h0M2589 416h0M2603 410h0M2617 404h0M2631 398h0M2646 392h0M2661 385h0M2677 379h0M2693 372h0M2710 365h0M2728 357h0M2746 349h0M2576 434h0M2589 429h0M2603 423h0M2617 418h0M2631 412h0M2646 406h0M2661 400h0M2677 394h0M2693 388h0M2710 380h0M2728 372h0M2746 364h0M2765 356h0M2784 347h0M2576 444h0M2589 438h0M2603 433h0M2617 427h0M2631 422h0M2646 416h0M2661 411h0M2677 405h0M2693 400h0M2710 393h0M2728 386h0M2746 378h0M2765 371h0M2784 363h0M2805 355h0M2826 347h0M2576 458h0M2589 453h0M2603 447h0M2617 441h0M2631 436h0M2646 430h0M2661 424h0M2677 418h0M2693 412h0M2710 405h0M2728 397h0M2746 389h0M2765 381h0M2784 374h0M2805 366h0M2826 358h0M2848 350h0M2576 470h0M2589 465h0M2603 460h0M2617 454h0M2631 449h0M2646 443h0M2661 437h0M2677 432h0M2693 426h0M2710 419h0M2728 411h0M2746 403h0M2765 396h0M2784 388h0M2805 380h0M2826 372h0M2848 364h0M2871 356h0M2895 348h0M2576 482h0M2589 477h0M2603 472h0M2617 467h0M2631 461h0M2646 456h0M2661 450h0M2677 444h0M2693 439h0M2710 432h0M2728 424h0M2746 417h0M2765 409h0M2784 402h0M2805 394h0M2826 386h0M2848 378h0M2871 371h0M2895 363h0M2920 355h0M2576 494h0M2589 489h0M2603 483h0M2617 478h0M2631 473h0M2646 467h0M2661 462h0M2677 456h0M2693 450h0M2710 444h0M2728 437h0M2746 429h0M2765 422h0M2784 415h0M2805 408h0M2826 400h0M2848 393h0M2871 386h0M2895 379h0M2920 371h0M2945 364h0M2972 357h0M3000 349h0M2576 503h0M2589 498h0M2603 493h0M2617 488h0M2631 483h0M2646 478h0M2661 474h0M2677 469h0M2693 464h0M2710 458h0M2728 451h0M2746 445h0M2765 438h0M2784 432h0M2805 425h0M2826 418h0M2848 411h0M2871 403h0M2895 395h0M2920 388h0M2945 379h0M2576 518h0M2589 513h0M2603 508h0M2617 503h0M2631 498h0M2646 493h0M2661 488h0M2677 483h0M2693 477h0M2710 471h0M2728 464h0M2746 457h0M2765 450h0M2784 443h0M2805 436h0M2826 429h0M2848 422h0M2871 414h0M2895 407h0M2920 400h0M2945 393h0M2972 386h0M3000 379h0M3029 374h0M3059 369h0M3090 363h0M3122 357h0M3154 351h0M2576 527h0M2589 522h0M2603 518h0M2617 513h0M2631 508h0M2646 503h0M2661 498h0M2677 493h0M2693 488h0M2710 483h0M2728 476h0M2746 470h0M2765 464h0M2784 458h0M2805 452h0M2826 445h0M2848 439h0M2871 432h0M2895 425h0M2576 540h0M2589 536h0M2603 531h0M2617 526h0M2631 521h0M2646 516h0M2661 511h0M2677 506h0M2693 501h0M2710 495h0M2728 489h0M2746 483h0M2765 477h0M2784 470h0M2805 464h0M2826 458h0M2848 452h0M2871 445h0M2895 439h0M2920 432h0M2945 426h0M2972 419h0M3000 412h0M3029 406h0M3059 401h0M3090 395h0M3122 388h0M3154 382h0M3188 375h0M3223 371h0M3258 368h0M2576 553h0M2589 549h0M2603 544h0M2617 539h0M2631 535h0M2646 530h0M2661 525h0M2677 520h0M2693 515h0M2710 509h0M2728 503h0M2746 497h0M2765 490h0M2784 484h0M2805 478h0M2826 471h0M2848 465h0M2871 459h0M2895 452h0M2920 446h0M2576 562h0M2589 558h0M2603 554h0M2617 549h0M2631 545h0M2646 541h0M2661 537h0M2677 532h0M2693 528h0M2710 523h0M2728 518h0M2746 512h0M2765 507h0M2784 501h0M2805 495h0M2826 489h0M2848 483h0M2871 476h0M2895 469h0M2920 462h0M2945 455h0M2972 448h0M3000 441h0M3029 435h0M3059 429h0M3090 424h0M3122 418h0M3154 413h0M3188 409h0M3223 406h0M3258 405h0M2576 574h0M2589 570h0M2603 566h0M2617 562h0M2631 558h0M2646 554h0M2661 550h0M2677 546h0M2693 542h0M2710 537h0M2728 532h0M2746 526h0M2765 521h0M2784 515h0M2805 509h0M2826 503h0M2848 496h0M2871 490h0M2895 483h0M2920 476h0M2576 588h0M2589 584h0M2603 580h0M2617 575h0M2631 571h0M2646 567h0M2661 562h0M2677 558h0M2693 553h0M2710 548h0M2728 542h0M2746 537h0M2765 531h0M2784 525h0M2805 520h0M2826 514h0M2848 509h0M2871 503h0M2895 498h0M2920 492h0M2945 486h0M2972 480h0M3000 474h0M3029 470h0M3059 465h0M3090 459h0M3122 454h0M3154 448h0M3188 442h0M3223 438h0M3258 435h0M2576 600h0M2589 596h0M2603 592h0M2617 589h0M2631 585h0M2646 581h0M2661 577h0M2677 573h0M2693 568h0M2710 563h0M2728 558h0M2746 552h0M2765 547h0M2784 541h0M2805 535h0M2826 529h0M2848 523h0M2871 517h0M2895 511h0M2576 610h0M2589 606h0M2603 602h0M2617 598h0M2631 594h0M2646 590h0M2661 586h0M2677 583h0M2693 579h0M2710 574h0M2728 570h0M2746 565h0M2765 560h0M2784 555h0M2805 550h0M2826 545h0M2848 540h0M2871 535h0M2895 529h0M2920 523h0M2945 517h0M2972 511h0M3000 504h0M3029 499h0M3059 494h0M3090 489h0M3122 484h0M3154 479h0M3188 474h0M3223 472h0M3258 470h0M2576 624h0M2589 620h0M2603 617h0M2617 613h0M2631 609h0M2646 606h0M2661 602h0M2677 598h0M2693 594h0M2710 589h0M2728 584h0M2746 578h0M2765 573h0M2784 568h0M2805 562h0M2826 557h0M2848 551h0M2871 546h0M2895 540h0M2920 535h0M2945 530h0M2972 525h0M3000 520h0M2576 635h0M2589 632h0M2603 628h0M2617 624h0M2631 621h0M2646 617h0M2661 613h0M2677 609h0M2693 605h0M2710 600h0M2728 595h0M2746 591h0M2765 586h0M2784 581h0M2805 576h0M2826 571h0M2848 566h0M2871 561h0M2895 556h0M2920 552h0M2945 547h0M2972 542h0M3000 537h0M3029 533h0M3059 529h0M3090 524h0M3122 519h0M3154 514h0M3188 509h0M3223 505h0M3258 503h0M2576 646h0M2589 642h0M2603 639h0M2617 636h0M2631 633h0M2646 630h0M2661 627h0M2677 623h0M2693 620h0M2710 616h0M2728 612h0M2746 607h0M2765 602h0M2784 597h0M2805 592h0M2826 587h0M2848 582h0M2871 576h0M2895 571h0M2920 565h0M2945 560h0M2972 554h0M2576 657h0M2589 654h0M2603 651h0M2617 648h0M2631 645h0M2646 642h0M2661 639h0M2677 636h0M2693 633h0M2710 629h0M2728 625h0M2746 620h0M2765 616h0M2784 611h0M2805 607h0M2826 602h0M2848 597h0M2871 592h0M2895 586h0M2920 581h0M2945 575h0M2972 570h0M3000 565h0M3029 561h0M3059 557h0M3090 553h0M3122 550h0M3154 547h0M3188 543h0M3223 541h0M3258 540h0M2576 671h0M2589 668h0M2603 665h0M2617 662h0M2631 659h0M2646 656h0M2661 652h0M2677 649h0M2693 645h0M2710 641h0M2728 637h0M2746 632h0M2765 628h0M2784 623h0M2805 618h0M2576 682h0M2589 679h0M2603 677h0M2617 674h0M2631 671h0M2646 668h0M2661 665h0M2677 662h0M2693 659h0M2710 655h0M2728 651h0M2746 647h0M2765 642h0M2784 638h0M2805 633h0M2826 629h0M2848 624h0M2871 619h0M2895 614h0M2920 610h0M2945 605h0M2972 601h0M3000 596h0M3029 593h0M3059 590h0M3090 587h0M3122 584h0M3154 581h0M3188 578h0M3223 575h0M3258 573h0M2576 692h0M2589 690h0M2603 687h0M2617 684h0M2631 681h0M2646 678h0M2661 675h0M2677 672h0M2693 669h0M2710 666h0M2728 662h0M2746 658h0M2765 655h0M2784 651h0M2805 648h0M2826 644h0M2848 640h0M2871 636h0M2895 632h0M2576 705h0M2589 703h0M2603 700h0M2617 698h0M2631 695h0M2646 693h0M2661 690h0M2677 688h0M2693 685h0M2710 681h0M2728 678h0M2746 674h0M2765 670h0M2784 666h0M2805 662h0M2826 657h0M2848 653h0M2871 649h0M2895 644h0M2920 640h0M2945 635h0M2972 631h0M3000 627h0M3029 624h0M3059 622h0M3090 619h0M3122 616h0M3154 614h0M3188 611h0M3223 609h0M3258 607h0M2576 717h0M2589 715h0M2603 712h0M2617 710h0M2631 708h0M2646 705h0M2661 703h0M2677 700h0M2693 698h0M2710 694h0M2728 691h0M2746 687h0M2765 684h0M2784 680h0M2805 676h0M2826 672h0M2848 668h0M2871 663h0M2895 659h0M2920 655h0M2945 651h0M2972 647h0M2576 730h0M2589 727h0M2603 724h0M2617 722h0M2631 719h0M2646 716h0M2661 714h0M2677 711h0M2693 708h0M2710 705h0M2728 701h0M2746 698h0M2765 694h0M2784 691h0M2805 688h0M2826 685h0M2848 681h0M2871 678h0M2895 675h0M2920 672h0M2945 669h0M2972 665h0M3000 662h0M3029 659h0M3059 656h0M3090 653h0M3122 649h0M3154 645h0M3188 641h0M3223 639h0M3258 637h0M2576 741h0M2589 739h0M2603 736h0M2617 734h0M2631 731h0M2646 729h0M2661 726h0M2677 723h0M2693 721h0M2710 718h0M2728 714h0M2746 711h0M2765 708h0M2784 705h0M2805 702h0M2826 699h0M2848 696h0M2871 693h0M2895 690h0M2920 687h0M2576 753h0M2589 751h0M2603 749h0M2617 747h0M2631 744h0M2646 742h0M2661 739h0M2677 737h0M2693 734h0M2710 731h0M2728 728h0M2746 725h0M2765 722h0M2784 719h0M2805 716h0M2826 713h0M2848 710h0M2871 707h0M2895 704h0M2920 701h0M2945 699h0M2972 696h0M3000 693h0M3029 691h0M3059 688h0M3090 685h0M3122 682h0M3154 679h0M3188 675h0M3223 673h0M3258 671h0M2576 765h0M2589 763h0M2603 760h0M2617 758h0M2631 756h0M2646 753h0M2661 751h0M2677 749h0M2693 746h0M2710 744h0M2728 741h0M2746 738h0M2765 735h0M2784 733h0M2805 730h0M2826 727h0M2848 725h0M2871 722h0M2895 720h0M2920 717h0M2945 715h0M2972 712h0M2576 775h0M2589 773h0M2603 771h0M2617 769h0M2631 767h0M2646 765h0M2661 763h0M2677 761h0M2693 759h0M2710 757h0M2728 755h0M2746 753h0M2765 751h0M2784 748h0M2805 746h0M2826 744h0M2848 741h0M2871 739h0M2895 736h0M2920 733h0M2945 730h0M2972 727h0M3000 723h0M3029 720h0M3059 717h0M3090 714h0M3122 711h0M3154 709h0M3188 707h0M3223 706h0M3258 706h0M2576 789h0M2589 787h0M2603 786h0M2617 784h0M2631 782h0M2646 780h0M2661 778h0M2677 776h0M2693 774h0M2710 772h0M2728 769h0M2746 766h0M2765 764h0M2784 761h0M2805 758h0M2826 755h0M2848 752h0M2871 750h0M2895 747h0M2920 745h0M2945 743h0M2576 798h0M2589 797h0M2603 795h0M2617 794h0M2631 792h0M2646 791h0M2661 790h0M2677 788h0M2693 787h0M2710 785h0M2728 783h0M2746 781h0M2765 779h0M2784 777h0M2805 775h0M2826 773h0M2848 770h0M2871 767h0M2895 764h0M2920 761h0M2945 758h0M2972 755h0M3000 752h0M3029 750h0M3059 748h0M3090 746h0M3122 744h0M3154 743h0M3188 742h0M3223 741h0M3258 741h0M2576 810h0M2589 809h0M2603 808h0M2617 807h0M2631 805h0M2646 804h0M2661 803h0M2677 802h0M2693 800h0M2710 799h0M2728 797h0M2746 795h0M2765 793h0M2784 791h0M2805 789h0M2826 786h0M2848 784h0M2576 824h0M2589 823h0M2603 821h0M2617 820h0M2631 818h0M2646 817h0M2661 815h0M2677 813h0M2693 812h0M2710 810h0M2728 808h0M2746 806h0M2765 804h0M2784 802h0M2805 800h0M2826 798h0M2848 796h0M2871 794h0M2895 793h0M2920 791h0M2945 790h0M2972 788h0M3000 786h0M3029 785h0M3059 784h0M3090 782h0M3122 780h0M3154 777h0M3188 775h0M3223 773h0M3258 772h0M2576 834h0M2589 832h0M2603 831h0M2617 830h0M2631 829h0M2646 827h0M2661 826h0M2677 825h0M2693 824h0M2710 823h0M2728 821h0M2746 820h0M2765 819h0M2784 817h0M2805 816h0M2826 815h0M2576 848h0M2589 847h0M2603 846h0M2617 845h0M2631 844h0M2646 843h0M2661 841h0M2677 840h0M2693 839h0M2710 837h0M2728 835h0M2746 834h0M2765 832h0M2784 830h0M2805 828h0M2826 826h0M2848 824h0M2871 823h0M2895 821h0M2920 820h0M2945 819h0M2972 817h0M3000 816h0M3029 816h0M3059 815h0M3090 814h0M3122 813h0M3154 812h0M3188 810h0M3223 808h0M3258 807h0M2576 860h0M2589 859h0M2603 858h0M2617 857h0M2631 856h0M2646 855h0M2661 854h0M2677 853h0M2693 852h0M2710 850h0M2728 849h0M2746 847h0M2765 845h0M2784 844h0M2805 842h0M2826 840h0M2848 839h0M2576 869h0M2589 868h0M2603 867h0M2617 867h0M2631 866h0M2646 865h0M2661 864h0M2677 863h0M2693 863h0M2710 862h0M2728 861h0M2746 860h0M2765 860h0M2784 859h0M2805 858h0M2826 857h0M2848 856h0M2871 855h0M2895 854h0M2920 853h0M2945 851h0M2972 850h0M3000 848h0M3029 846h0M3059 845h0M3090 843h0M3122 842h0M3154 841h0M3188 840h0M3223 840h0M3258 840h0M2576 884h0M2589 883h0M2603 882h0M2617 882h0M2631 881h0M2646 880h0M2661 879h0M2677 878h0M2693 877h0M2710 876h0M2728 875h0M2746 874h0M2765 872h0M2784 871h0M2805 870h0M2826 869h0M2848 868h0M2576 893h0M2589 893h0M2603 892h0M2617 892h0M2631 892h0M2646 891h0M2661 891h0M2677 891h0M2693 891h0M2710 890h0M2728 890h0M2746 889h0M2765 888h0M2784 888h0M2805 887h0M2826 886h0M2848 885h0M2871 883h0M2895 882h0M2920 881h0M2945 879h0M2972 878h0M3000 877h0M3029 876h0M3059 876h0M3090 875h0M3122 875h0M3154 875h0M3188 875h0M3223 876h0M3258 876h0M2576 906h0M2589 906h0M2603 905h0M2617 904h0M2631 904h0M2646 903h0M2661 902h0M2677 902h0M2693 901h0M2710 901h0M2728 900h0M2746 899h0M2765 899h0M2784 898h0M2805 898h0M2826 898h0M2848 898h0M2576 919h0M2589 919h0M2603 918h0M2617 918h0M2631 918h0M2646 917h0M2661 917h0M2677 916h0M2693 916h0M2710 915h0M2728 915h0M2746 914h0M2765 913h0M2784 912h0M2805 912h0M2826 911h0M2848 911h0M2871 910h0M2895 910h0M2920 910h0M2945 910h0M2972 910h0M3000 910h0M3029 911h0M3059 911h0M3090 911h0M3122 911h0M3154 910h0M3188 909h0M3223 908h0M3258 907h0M2576 931h0M2589 931h0M2603 930h0M2617 930h0M2631 930h0M2646 930h0M2661 929h0M2677 929h0M2693 928h0M2710 928h0M2728 927h0M2746 927h0M2765 926h0M2784 926h0M2805 926h0M2826 925h0M2848 925h0M2871 925h0M2576 941h0M2589 941h0M2603 941h0M2617 942h0M2631 942h0M2646 942h0M2661 942h0M2677 943h0M2693 943h0M2710 943h0M2728 943h0M2746 943h0M2765 943h0M2784 942h0M2805 942h0M2826 942h0M2848 941h0M2871 941h0M2895 940h0M2920 940h0M2945 940h0M2972 939h0M3000 939h0M3029 940h0M3059 940h0M3090 941h0M3122 942h0M3154 942h0M3188 943h0M3223 943h0M3258 943h0M2576 953h0M2589 953h0M2603 952h0M2617 952h0M2631 952h0M2646 952h0M2661 952h0M2677 952h0M2693 953h0M2710 953h0M2728 953h0M2746 953h0M2765 954h0M2784 954h0M2805 955h0M2826 956h0M2848 956h0M2576 966h0M2589 966h0M2603 967h0M2617 967h0M2631 967h0M2646 968h0M2661 968h0M2677 968h0M2693 968h0M2710 968h0M2728 968h0M2746 968h0M2765 968h0M2784 968h0M2805 968h0M2826 968h0M2848 968h0M2871 969h0M2895 969h0M2920 970h0M2945 970h0M2972 971h0M3000 972h0M3029 973h0M3059 974h0M3090 975h0M3122 976h0M3154 976h0M3188 976h0M3223 976h0M3258 975h0M2576 976h0M2589 976h0M2603 976h0M2617 976h0M2631 977h0M2646 977h0M2661 978h0M2677 978h0M2693 979h0M2710 979h0M2728 980h0M2746 981h0M2765 982h0M2784 983h0M2805 984h0M2826 985h0M2848 986h0M2871 987h0M2895 987h0M2920 988h0M2576 990h0M2589 990h0M2603 991h0M2617 991h0M2631 991h0M2646 992h0M2661 992h0M2677 992h0M2693 993h0M2710 993h0M2728 993h0M2746 994h0M2765 994h0M2784 995h0M2805 996h0M2826 996h0M2848 997h0M2871 998h0M2895 999h0M2920 1001h0M2945 1002h0M2972 1004h0M3000 1005h0M3029 1006h0M3059 1007h0M3090 1008h0M3122 1008h0M3154 1008h0M3188 1008h0M3223 1008h0M3258 1007h0M2576 1002h0M2589 1002h0M2603 1003h0M2617 1003h0M2631 1004h0M2646 1004h0M2661 1004h0M2677 1005h0M2693 1005h0M2710 1006h0M2728 1006h0M2746 1007h0M2765 1008h0M2784 1009h0M2805 1010h0M2826 1011h0M2848 1012h0M2871 1013h0M2895 1014h0M2920 1016h0M2945 1017h0M2972 1019h0M2576 1012h0M2589 1013h0M2603 1014h0M2617 1015h0M2631 1016h0M2646 1017h0M2661 1018h0M2677 1019h0M2693 1020h0M2710 1021h0M2728 1022h0M2746 1023h0M2765 1024h0M2784 1025h0M2805 1026h0M2826 1027h0M2848 1027h0M2871 1028h0M2895 1029h0M2920 1030h0M2945 1031h0M2972 1032h0M3000 1033h0M3029 1034h0M3059 1036h0M3090 1038h0M3122 1039h0M3154 1041h0M3188 1043h0M3223 1044h0M3258 1044h0M2576 1023h0M2589 1024h0M2603 1025h0M2617 1026h0M2631 1028h0M2646 1029h0M2661 1030h0M2677 1031h0M2693 1033h0M2710 1034h0M2728 1035h0M2746 1037h0M2765 1038h0M2784 1039h0M2805 1041h0M2826 1042h0M2848 1043h0M2871 1044h0M2895 1045h0M2920 1045h0M2945 1046h0M2972 1047h0M2576 1035h0M2589 1036h0M2603 1036h0M2617 1037h0M2631 1038h0M2646 1040h0M2661 1041h0M2677 1042h0M2693 1043h0M2710 1045h0M2728 1046h0M2746 1048h0M2765 1050h0M2784 1052h0M2805 1054h0M2826 1056h0M2848 1058h0M2871 1059h0M2895 1061h0M2920 1063h0M2945 1064h0M2972 1066h0M3000 1067h0M3029 1068h0M3059 1068h0M3090 1069h0M3122 1070h0M3154 1071h0M3188 1072h0M3223 1073h0M3258 1075h0M2576 1047h0M2589 1048h0M2603 1050h0M2617 1051h0M2631 1053h0M2646 1054h0M2661 1056h0M2677 1057h0M2693 1059h0M2710 1060h0M2728 1062h0M2746 1064h0M2765 1065h0M2784 1067h0M2805 1068h0M2826 1070h0M2848 1071h0M2576 1059h0M2589 1060h0M2603 1061h0M2617 1062h0M2631 1063h0M2646 1065h0M2661 1066h0M2677 1067h0M2693 1069h0M2710 1070h0M2728 1072h0M2746 1075h0M2765 1077h0M2784 1079h0M2805 1081h0M2826 1084h0M2848 1086h0M2871 1088h0M2895 1091h0M2920 1093h0M2945 1095h0M2972 1097h0M3000 1099h0M3029 1100h0M3059 1101h0M3090 1102h0M3122 1103h0M3154 1104h0M3188 1105h0M3223 1107h0M3258 1108h0M2576 1072h0M2589 1073h0M2603 1074h0M2617 1075h0M2631 1077h0M2646 1078h0M2661 1079h0M2677 1080h0M2693 1082h0M2710 1083h0M2728 1085h0M2746 1087h0M2765 1089h0M2784 1092h0M2805 1094h0M2826 1096h0M2848 1099h0M2871 1102h0M2895 1104h0M2920 1107h0M2945 1110h0M2576 1082h0M2589 1084h0M2603 1085h0M2617 1087h0M2631 1088h0M2646 1090h0M2661 1091h0M2677 1093h0M2693 1094h0M2710 1097h0M2728 1099h0M2746 1101h0M2765 1104h0M2784 1106h0M2805 1109h0M2826 1112h0M2848 1115h0M2871 1117h0M2895 1120h0M2920 1123h0M2945 1125h0M2972 1128h0M3000 1130h0M3029 1131h0M3059 1133h0M3090 1134h0M3122 1135h0M3154 1137h0M3188 1139h0M3223 1140h0M3258 1141h0M2576 1095h0M2589 1097h0M2603 1099h0M2617 1101h0M2631 1103h0M2646 1105h0M2661 1107h0M2677 1109h0M2693 1110h0M2710 1112h0M2728 1115h0M2746 1117h0M2765 1119h0M2784 1121h0M2805 1123h0M2826 1125h0M2848 1127h0M2871 1129h0M2895 1132h0M2576 1107h0M2589 1109h0M2603 1110h0M2617 1112h0M2631 1114h0M2646 1115h0M2661 1117h0M2677 1119h0M2693 1120h0M2710 1123h0M2728 1125h0M2746 1128h0M2765 1130h0M2784 1133h0M2805 1136h0M2826 1139h0M2848 1142h0M2871 1146h0M2895 1149h0M2920 1152h0M2945 1155h0M2972 1159h0M3000 1162h0M3029 1164h0M3059 1166h0M3090 1168h0M3122 1169h0M3154 1171h0M3188 1172h0M3223 1173h0M3258 1174h0M2576 1120h0M2589 1121h0M2603 1123h0M2617 1125h0M2631 1127h0M2646 1129h0M2661 1131h0M2677 1132h0M2693 1134h0M2710 1136h0M2728 1139h0M2746 1141h0M2765 1144h0M2784 1147h0M2805 1149h0M2826 1152h0M2848 1156h0M2871 1159h0M2895 1162h0M2920 1166h0M2945 1170h0M2972 1173h0M2576 1130h0M2589 1133h0M2603 1135h0M2617 1137h0M2631 1140h0M2646 1142h0M2661 1144h0M2677 1147h0M2693 1149h0M2710 1152h0M2728 1155h0M2746 1157h0M2765 1160h0M2784 1163h0M2805 1166h0M2826 1168h0M2848 1171h0M2871 1174h0M2895 1176h0M2920 1179h0M2945 1183h0M2972 1186h0M3000 1189h0M3029 1192h0M3059 1196h0M3090 1199h0M3122 1202h0M3154 1206h0M3188 1209h0M3223 1211h0M3258 1212h0M2576 1143h0M2589 1145h0M2603 1148h0M2617 1150h0M2631 1152h0M2646 1155h0M2661 1157h0M2677 1160h0M2693 1162h0M2710 1164h0M2728 1167h0M2746 1170h0M2765 1173h0M2784 1176h0M2805 1179h0M2826 1181h0M2848 1184h0M2576 1153h0M2589 1155h0M2603 1157h0M2617 1160h0M2631 1162h0M2646 1164h0M2661 1167h0M2677 1169h0M2693 1172h0M2710 1175h0M2728 1179h0M2746 1182h0M2765 1186h0M2784 1190h0M2805 1193h0M2826 1197h0M2848 1201h0M2871 1205h0M2895 1209h0M2920 1213h0M2945 1217h0M2972 1220h0M3000 1223h0M3029 1226h0M3059 1228h0M3090 1230h0M3122 1233h0M3154 1235h0M3188 1238h0M3223 1240h0M3258 1242h0M2576 1165h0M2589 1167h0M2603 1170h0M2617 1172h0M2631 1175h0M2646 1177h0M2661 1179h0M2677 1182h0M2693 1185h0M2710 1188h0M2728 1192h0M2746 1195h0M2765 1199h0M2784 1203h0M2805 1207h0M2826 1211h0M2848 1215h0M2871 1219h0M2576 1176h0M2589 1179h0M2603 1181h0M2617 1184h0M2631 1187h0M2646 1189h0M2661 1192h0M2677 1195h0M2693 1198h0M2710 1202h0M2728 1206h0M2746 1210h0M2765 1214h0M2784 1218h0M2805 1222h0M2826 1226h0M2848 1231h0M2871 1235h0M2895 1239h0M2920 1243h0M2945 1246h0M2972 1250h0M3000 1254h0M3029 1256h0M3059 1259h0M3090 1262h0M3122 1265h0M3154 1268h0M3188 1272h0M3223 1275h0M3258 1277h0M2576 1189h0M2589 1192h0M2603 1194h0M2617 1197h0M2631 1199h0M2646 1202h0M2661 1205h0M2677 1208h0M2693 1211h0M2710 1214h0M2728 1218h0M2746 1222h0M2765 1226h0M2784 1230h0M2805 1234h0M2826 1239h0M2848 1243h0M2871 1248h0M2895 1253h0M2920 1257h0M2945 1262h0M2972 1267h0M2576 1200h0M2589 1203h0M2603 1206h0M2617 1209h0M2631 1212h0M2646 1215h0M2661 1219h0M2677 1222h0M2693 1226h0M2710 1229h0M2728 1234h0M2746 1238h0M2765 1242h0M2784 1247h0M2805 1251h0M2826 1255h0M2848 1259h0M2871 1263h0M2895 1267h0M2920 1271h0M2945 1275h0M2972 1279h0M3000 1283h0M3029 1287h0M3059 1290h0M3090 1294h0M3122 1298h0M3154 1302h0M3188 1307h0M3223 1310h0M3258 1312h0M2576 1211h0M2589 1214h0M2603 1218h0M2617 1221h0M2631 1224h0M2646 1228h0M2661 1231h0M2677 1234h0M2693 1238h0M2710 1242h0M2728 1247h0M2746 1251h0M2765 1256h0M2784 1260h0M2805 1265h0M2826 1269h0M2848 1274h0M2576 1223h0M2589 1227h0M2603 1230h0M2617 1233h0M2631 1237h0M2646 1240h0M2661 1244h0M2677 1248h0M2693 1251h0M2710 1256h0M2728 1260h0M2746 1265h0M2765 1270h0M2784 1274h0M2805 1279h0M2826 1283h0M2848 1288h0M2871 1292h0M2895 1297h0M2920 1301h0M2945 1305h0M2972 1310h0M3000 1315h0M3029 1318h0M3059 1322h0M3090 1326h0M3122 1331h0M3154 1335h0M3188 1340h0M3223 1343h0M3258 1346h0M2576 1236h0M2589 1239h0M2603 1243h0M2617 1246h0M2631 1250h0M2646 1254h0M2661 1257h0M2677 1261h0M2693 1265h0M2710 1269h0M2728 1274h0M2746 1279h0M2765 1283h0M2784 1288h0M2805 1292h0M2826 1297h0M2576 1247h0M2589 1250h0M2603 1254h0M2617 1258h0M2631 1261h0M2646 1265h0M2661 1269h0M2677 1273h0M2693 1277h0M2710 1282h0M2728 1287h0M2746 1292h0M2765 1297h0M2784 1302h0M2805 1307h0M2826 1312h0M2848 1317h0M2871 1322h0M2895 1327h0M2920 1331h0M2945 1336h0M2972 1341h0M3000 1346h0M3029 1350h0M3059 1354h0M3090 1358h0M3122 1363h0M3154 1368h0M3188 1373h0M3223 1376h0M3258 1379h0M2576 1259h0M2589 1263h0M2603 1266h0M2617 1269h0M2631 1273h0M2646 1277h0M2661 1280h0M2677 1284h0M2693 1288h0M2710 1293h0M2728 1298h0M2746 1303h0M2765 1308h0M2784 1314h0M2805 1319h0M2826 1325h0M2848 1331h0M2871 1336h0M2895 1342h0M2920 1348h0M2945 1353h0M2576 1270h0M2589 1274h0M2603 1278h0M2617 1282h0M2631 1286h0M2646 1290h0M2661 1294h0M2677 1299h0M2693 1303h0M2710 1308h0M2728 1313h0M2746 1319h0M2765 1324h0M2784 1329h0M2805 1335h0M2826 1340h0M2848 1345h0M2871 1351h0M2895 1356h0M2920 1361h0M2945 1366h0M2972 1372h0M3000 1377h0M3029 1381h0M3059 1386h0M3090 1390h0M3122 1395h0M3154 1401h0M3188 1406h0M3223 1410h0M3258 1413h0M2576 1283h0M2589 1287h0M2603 1290h0M2617 1294h0M2631 1298h0M2646 1302h0M2661 1306h0M2677 1310h0M2693 1314h0M2710 1319h0M2728 1324h0M2746 1330h0M2765 1335h0M2784 1341h0M2805 1347h0M2826 1353h0M2848 1359h0M2576 1297h0M2589 1300h0M2603 1304h0M2617 1308h0M2631 1312h0M2646 1316h0M2661 1320h0M2677 1324h0M2693 1328h0M2710 1332h0M2728 1337h0M2746 1343h0M2765 1348h0M2784 1354h0M2805 1359h0M2826 1365h0M2848 1371h0M2871 1378h0M2895 1384h0M2920 1391h0M2945 1398h0M2972 1404h0M3000 1411h0M3029 1416h0M3059 1421h0M3090 1426h0M3122 1431h0M3154 1435h0M3188 1440h0M3223 1442h0M3258 1443h0M2576 1306h0M2589 1310h0M2603 1314h0M2617 1318h0M2631 1322h0M2646 1327h0M2661 1331h0M2677 1335h0M2693 1340h0M2710 1345h0M2728 1351h0M2746 1357h0M2765 1363h0M2784 1369h0M2805 1375h0M2826 1382h0M2848 1388h0M2576 1320h0M2589 1325h0M2603 1329h0M2617 1333h0M2631 1338h0M2646 1342h0M2661 1346h0M2677 1351h0M2693 1355h0M2710 1360h0M2728 1366h0M2746 1371h0M2765 1377h0M2784 1382h0M2805 1388h0M2826 1394h0M2848 1400h0M2871 1406h0M2895 1413h0M2920 1419h0M2945 1426h0M2972 1433h0M3000 1441h0M3029 1446h0M3059 1452h0M3090 1458h0M3122 1464h0M3154 1469h0M3188 1475h0M3223 1478h0M3258 1479h0M2576 1332h0M2589 1337h0M2603 1341h0M2617 1345h0M2631 1350h0M2646 1354h0M2661 1358h0M2677 1363h0M2693 1367h0M2710 1372h0M2728 1378h0M2746 1384h0M2765 1390h0M2784 1395h0M2805 1402h0M2826 1408h0M2576 1343h0M2589 1347h0M2603 1352h0M2617 1356h0M2631 1360h0M2646 1365h0M2661 1369h0M2677 1374h0M2693 1378h0M2710 1384h0M2728 1390h0M2746 1396h0M2765 1403h0M2784 1409h0M2805 1416h0M2826 1423h0M2848 1430h0M2871 1437h0M2895 1445h0M2920 1452h0M2945 1459h0M2972 1467h0M3000 1474h0M3029 1479h0M3059 1485h0M3090 1490h0M3122 1495h0M3154 1500h0M3188 1505h0M3223 1508h0M3258 1510h0M2576 1355h0M2589 1360h0M2603 1365h0M2617 1370h0M2631 1375h0M2646 1379h0M2661 1384h0M2677 1389h0M2693 1394h0M2710 1400h0M2728 1406h0M2746 1412h0M2765 1418h0M2784 1424h0M2805 1431h0M2826 1437h0M2848 1443h0M2871 1450h0M2576 1367h0M2589 1371h0M2603 1376h0M2617 1381h0M2631 1385h0M2646 1390h0M2661 1395h0M2677 1399h0M2693 1404h0M2710 1410h0M2728 1417h0M2746 1423h0M2765 1430h0M2784 1437h0M2805 1444h0M2826 1451h0M2848 1459h0M2871 1466h0M2895 1474h0M2920 1482h0M2945 1490h0M2972 1498h0M3000 1505h0M3029 1511h0M3059 1517h0M3090 1522h0M3122 1527h0M3154 1533h0M2576 1377h0M2589 1382h0M2603 1388h0M2617 1393h0M2631 1398h0M2646 1403h0M2661 1409h0M2677 1414h0M2693 1420h0M2710 1426h0M2728 1433h0M2746 1440h0M2765 1447h0M2784 1453h0M2805 1460h0M2826 1467h0M2576 1391h0M2589 1396h0M2603 1401h0M2617 1406h0M2631 1410h0M2646 1415h0M2661 1420h0M2677 1425h0M2693 1431h0M2710 1437h0M2728 1443h0M2746 1450h0M2765 1457h0M2784 1464h0M2805 1471h0M2826 1479h0M2848 1487h0M2871 1495h0M2895 1503h0M2920 1511h0M2945 1520h0M2972 1528h0M2576 1400h0M2589 1405h0M2603 1411h0M2617 1416h0M2631 1421h0M2646 1427h0M2661 1432h0M2677 1438h0M2693 1444h0M2710 1451h0M2728 1458h0M2746 1466h0M2765 1473h0M2784 1481h0M2805 1489h0M2826 1496h0M2848 1504h0M2871 1512h0M2576 1412h0M2589 1417h0M2603 1423h0M2617 1428h0M2631 1433h0M2646 1439h0M2661 1445h0M2677 1451h0M2693 1456h0M2710 1463h0M2728 1471h0M2746 1479h0M2765 1486h0M2784 1494h0M2805 1502h0M2826 1510h0M2848 1518h0M2871 1526h0M2895 1534h0M2576 1425h0M2589 1431h0M2603 1437h0M2617 1442h0M2631 1448h0M2646 1454h0M2661 1460h0M2677 1466h0M2693 1472h0M2710 1479h0M2728 1486h0M2746 1493h0M2765 1501h0M2784 1508h0M2805 1515h0M2826 1523h0M2848 1531h0M2576 1437h0M2589 1442h0M2603 1447h0M2617 1453h0M2631 1458h0M2646 1464h0M2661 1470h0M2677 1476h0M2693 1481h0M2710 1489h0M2728 1496h0M2746 1504h0M2765 1512h0M2784 1520h0M2805 1529h0M2576 1450h0M2589 1455h0M2603 1461h0M2617 1466h0M2631 1472h0M2646 1478h0M2661 1483h0M2677 1489h0M2693 1495h0M2710 1502h0M2728 1509h0M2746 1517h0M2765 1525h0M2784 1533h0M2576 1461h0M2589 1467h0M2603 1472h0M2617 1478h0M2631 1484h0M2646 1489h0M2661 1495h0M2677 1501h0M2693 1507h0M2710 1515h0M2728 1523h0M2746 1531h0M2576 1472h0M2589 1478h0M2603 1484h0M2617 1490h0M2631 1496h0M2646 1503h0M2661 1509h0M2677 1516h0M2693 1523h0M2710 1530h0M2576 1486h0M2589 1492h0M2603 1498h0M2617 1504h0M2631 1510h0M2646 1516h0M2661 1523h0M2677 1529h0M2576 1497h0M2589 1503h0M2603 1510h0M2617 1516h0M2631 1522h0M2646 1528h0M2661 1534h0M2576 1507h0M2589 1513h0M2603 1519h0M2617 1526h0M2631 1532h0M2576 1518h0M2589 1525h0M2603 1531h0M2576 1531h0" fill="none" stroke="#000" stroke-width="3.2" stroke-linecap="round"/>
<g filter="url(#wob)">
<path d="M1815 958L1795 906L1789 904L1754 945L1762 962L1811 964Z" fill="url(#q0)"/><path d="M2285 421L2312 422L2337 306L2257 306L2240 374Z" fill="url(#q1)"/><path d="M1791 1403L1746 1481L1746 1482L1777 1505L1848 1494L1838 1417Z" fill="url(#q2)"/><path d="M1756 516L1770 458L1767 450L1733 432L1715 435L1685 487L1699 534L1702 535Z" fill="url(#q3)"/><path d="M2040 1002L2095 949L2087 930L2054 915L1996 942L1996 950Z" fill="url(#q5)"/><path d="M2311 705L2405 708L2398 630L2340 622L2289 676Z" fill="url(#q6)"/><path d="M1841 1314L1817 1257L1764 1248L1750 1281L1759 1310L1807 1331Z" fill="url(#q7)"/><path d="M2313 1004L2344 1024L2352 1022L2429 935L2402 894L2368 891L2291 950L2290 953Z" fill="url(#q8)"/><path d="M2556 1085L2608 1002L2527 929L2459 948L2470 1077L2472 1079Z" fill="url(#q9)"/><path d="M2291 954L2292 950L2263 892L2188 882L2183 929L2207 968Z" fill="url(#q11)"/><path d="M2022 1091L2071 1057L2072 1051L2040 1006L1987 1031L1986 1073Z" fill="url(#q12)"/><path d="M1925 1277L1888 1272L1846 1315L1881 1353L1919 1343L1938 1305Z" fill="url(#q13)"/><path d="M2502 510L2591 583L2683 462L2671 452L2520 415L2502 436Z" fill="url(#q14)"/><path d="M2179 696L2187 647L2150 626L2114 638L2102 671L2132 712Z" fill="url(#q15)"/><path d="M1702 1388L1700 1442L1747 1482L1792 1403L1791 1402L1721 1370Z" fill="url(#q16)"/><path d="M2133 473L2086 467L2058 493L2073 553L2081 560L2150 549Z" fill="url(#q17)"/><path d="M2340 623L2397 631L2429 593L2428 560L2399 534L2337 541L2316 579Z" fill="url(#q18)"/><path d="M1699 533L1619 567L1619 601L1700 611L1721 580L1702 534Z" fill="url(#q19)"/><path d="M1982 923L1997 943L2054 916L2027 851L2023 849L1987 862Z" fill="url(#q20)"/><path d="M1959 375L2026 397L2065 306L1949 306Z" fill="url(#q21)"/><path d="M1777 1504L1779 1575L1880 1575L1865 1505L1848 1493Z" fill="url(#q22)"/><path d="M2109 1123L2100 1133L2095 1194L2155 1209L2192 1172L2116 1122Z" fill="url(#q23)"/><path d="M1756 306L1707 306L1656 402L1715 436L1734 433L1757 310Z" fill="url(#q24)"/><path d="M1953 677L1927 696L1926 724L1958 769L1999 766L2024 691Z" fill="url(#q25)"/><path d="M1722 1358L1676 1309L1619 1319L1619 1377L1702 1389L1722 1371Z" fill="url(#q26)"/><path d="M1743 1046L1714 1029L1690 1036L1686 1068L1707 1085L1751 1066Z" fill="url(#q27)"/><path d="M1989 1169L1915 1198L1942 1247L1990 1243L1999 1172Z" fill="url(#q29)"/><path d="M2197 1336L2136 1335L2135 1392L2195 1410L2219 1367Z" fill="url(#q30)"/><path d="M1842 737L1881 750L1927 724L1928 696L1905 682L1846 694Z" fill="url(#q31)"/><path d="M1864 1505L1879 1575L1942 1575L1968 1499L1907 1479Z" fill="url(#q32)"/><path d="M2521 416L2510 306L2395 306L2398 439L2503 437Z" fill="url(#q34)"/><path d="M1710 796L1694 834L1739 854L1743 851L1747 840L1731 797Z" fill="url(#q35)"/><path d="M2317 1231L2347 1234L2423 1151L2423 1149L2329 1112L2297 1130L2289 1142L2305 1218Z" fill="url(#q36)"/><path d="M2413 1482L2511 1520L2555 1443L2459 1394L2402 1460Z" fill="url(#q37)"/><path d="M1777 1072L1799 1124L1837 1098L1820 1062L1796 1061Z" fill="url(#q38)"/><path d="M1802 845L1779 864L1786 902L1789 905L1795 907L1821 895L1829 873Z" fill="url(#q39)"/><path d="M2017 486L1985 541L2011 569L2074 553L2058 492Z" fill="url(#q40)"/><path d="M1959 768L1927 723L1880 749L1885 785L1917 803L1942 795Z" fill="url(#q41)"/><path d="M2141 466L2215 464L2200 394L2167 383L2146 392Z" fill="url(#q42)"/><path d="M2279 674L2290 676L2341 623L2317 578L2258 579L2241 596L2235 627Z" fill="url(#q43)"/><path d="M2290 1143L2298 1130L2238 1054L2232 1053L2194 1076L2210 1155Z" fill="url(#q44)"/><path d="M1989 1170L1999 1173L2004 1171L2030 1136L2023 1090L1987 1072L1948 1096L1944 1111Z" fill="url(#q45)"/><path d="M1988 863L2024 850L2027 791L1998 765L1958 768L1941 795L1968 856Z" fill="url(#q46)"/><path d="M1769 1009L1753 987L1724 992L1714 1030L1743 1047Z" fill="url(#q47)"/><path d="M2422 1151L2465 1212L2539 1220L2593 1158L2556 1084L2472 1078L2422 1149Z" fill="url(#q49)"/><path d="M2368 1344L2454 1357L2470 1328L2439 1268L2378 1268L2363 1336Z" fill="url(#q50)"/><path d="M2397 630L2404 707L2410 714L2462 721L2530 646L2429 592Z" fill="url(#q51)"/><path d="M1776 821L1802 835L1832 808L1788 779L1773 791Z" fill="url(#q52)"/><path d="M2330 1113L2345 1023L2313 1003L2237 1054L2297 1131Z" fill="url(#q53)"/><path d="M1912 1127L1945 1111L1949 1096L1923 1062L1880 1068L1870 1101Z" fill="url(#q54)"/><path d="M1989 1243L2004 1262L2051 1262L2072 1241L2074 1213L2003 1170L1998 1172Z" fill="url(#q55)"/><path d="M2039 1007L2071 1052L2136 1022L2137 1018L2102 952L2095 948L2040 1001Z" fill="url(#q56)"/><path d="M1777 705L1725 704L1721 709L1728 744L1740 753L1787 740Z" fill="url(#q57)"/><path d="M2527 929L2555 817L2514 804L2429 838L2401 895L2428 935L2459 949Z" fill="url(#q59)"/><path d="M2196 1336L2219 1368L2268 1362L2290 1322L2285 1305L2212 1276Z" fill="url(#q60)"/><path d="M2086 468L2074 422L2029 403L1997 462L2017 487L2058 493Z" fill="url(#q61)"/><path d="M2292 951L2369 891L2324 841L2283 849L2262 892Z" fill="url(#q62)"/><path d="M2137 1335L2124 1321L2064 1331L2045 1352L2079 1405L2112 1410L2136 1392Z" fill="url(#q63)"/><path d="M2176 548L2230 488L2225 471L2215 463L2142 465L2132 473L2149 549L2151 550Z" fill="url(#q64)"/><path d="M1885 306L1755 306L1756 310L1827 401L1859 402Z" fill="url(#q65)"/><path d="M1703 912L1733 912L1745 893L1735 865L1686 887L1684 891Z" fill="url(#q66)"/><path d="M1746 839L1742 851L1780 864L1802 846L1803 834L1777 820Z" fill="url(#q67)"/><path d="M1832 1197L1843 1228L1873 1235L1914 1198L1896 1169L1851 1165Z" fill="url(#q68)"/><path d="M2216 736L2280 673L2236 626L2186 647L2178 696Z" fill="url(#q69)"/><path d="M1881 1352L1870 1399L1914 1426L1975 1406L1978 1394L1919 1342Z" fill="url(#q70)"/><path d="M1839 807L1839 739L1791 744L1787 779L1831 809Z" fill="url(#q71)"/><path d="M1977 1394L1974 1406L1989 1436L2051 1445L2079 1405L2046 1352L2015 1354Z" fill="url(#q72)"/><path d="M2385 777L2430 839L2515 805L2462 720L2410 713Z" fill="url(#q73)"/><path d="M1820 1063L1839 1045L1827 1000L1818 995L1788 1013L1796 1062Z" fill="url(#q74)"/><path d="M1726 1172L1776 1155L1780 1147L1748 1114L1723 1120L1714 1167Z" fill="url(#q75)"/><path d="M2127 1464L2086 1488L2114 1575L2124 1575L2177 1482Z" fill="url(#q76)"/><path d="M1821 894L1794 906L1814 958L1848 943L1847 914Z" fill="url(#q77)"/><path d="M2122 736L2155 783L2172 785L2217 744L2217 735L2179 695L2132 711Z" fill="url(#q78)"/><path d="M1695 834L1711 797L1693 780L1619 807L1619 815L1682 840Z" fill="url(#q79)"/><path d="M2208 968L2184 928L2101 952L2137 1018L2204 978Z" fill="url(#q80)"/><path d="M2023 850L2026 852L2111 847L2114 820L2068 777L2026 790Z" fill="url(#q81)"/><path d="M1879 423L1944 402L1960 375L1950 306L1884 306L1858 401Z" fill="url(#q82)"/><path d="M2113 821L2156 783L2123 736L2083 747L2068 778Z" fill="url(#q83)"/><path d="M1685 1031L1619 1032L1619 1084L1651 1086L1687 1068L1691 1036Z" fill="url(#q84)"/><path d="M2051 1261L2064 1332L2124 1322L2134 1275L2071 1240Z" fill="url(#q85)"/><path d="M2023 691L1998 765L2027 791L2068 778L2084 747L2041 690L2031 687Z" fill="url(#q86)"/><path d="M2268 1361L2219 1367L2194 1410L2204 1450L2270 1458L2295 1409Z" fill="url(#q87)"/><path d="M2150 627L2151 550L2149 549L2081 559L2078 608L2114 639Z" fill="url(#q88)"/><path d="M2368 892L2402 895L2430 838L2385 776L2335 790L2323 842Z" fill="url(#q89)"/><path d="M1918 1342L1977 1395L2015 1355L1987 1307L1937 1304Z" fill="url(#q90)"/><path d="M1896 1170L1913 1198L1916 1199L1990 1169L1945 1110L1912 1126Z" fill="url(#q91)"/><path d="M1884 555L1882 541L1835 512L1791 557L1791 574L1848 588Z" fill="url(#q92)"/><path d="M2204 1449L2177 1482L2233 1552L2287 1489L2270 1457Z" fill="url(#q93)"/><path d="M1875 956L1847 942L1814 957L1811 963L1818 995L1826 1000L1879 990Z" fill="url(#q94)"/><path d="M2189 882L2188 880L2120 862L2086 930L2094 949L2102 953L2184 929Z" fill="url(#q95)"/><path d="M1958 621L1928 594L1888 633L1905 683L1927 697L1954 678Z" fill="url(#q96)"/><path d="M2232 1231L2306 1219L2290 1142L2210 1154L2194 1171Z" fill="url(#q97)"/><path d="M1677 1130L1619 1157L1619 1169L1681 1190L1708 1168Z" fill="url(#q98)"/><path d="M2135 1391L2111 1409L2127 1465L2176 1483L2178 1482L2205 1450L2195 1409Z" fill="url(#q99)"/><path d="M1857 627L1848 587L1791 573L1778 589L1779 622L1834 647Z" fill="url(#q100)"/><path d="M1785 690L1765 641L1722 652L1725 705L1777 706Z" fill="url(#q101)"/><path d="M1847 1494L1864 1506L1908 1480L1915 1425L1871 1398L1837 1417Z" fill="url(#q102)"/><path d="M1895 936L1874 956L1878 990L1893 1003L1902 1004L1934 969L1925 939Z" fill="url(#q103)"/><path d="M1920 874L1883 896L1895 937L1925 940L1939 922L1923 875Z" fill="url(#q104)"/><path d="M1673 667L1673 700L1686 713L1722 710L1726 704L1723 652L1715 648Z" fill="url(#q105)"/><path d="M2390 445L2399 439L2396 306L2336 306L2311 422L2333 442Z" fill="url(#q106)"/><path d="M2294 1409L2269 1458L2286 1489L2309 1499L2393 1457L2349 1406Z" fill="url(#q107)"/><path d="M2308 1498L2338 1575L2385 1575L2414 1482L2403 1459L2392 1456Z" fill="url(#q108)"/><path d="M1739 853L1735 865L1744 894L1787 902L1780 863L1743 850Z" fill="url(#q109)"/><path d="M1907 1480L1968 1500L1978 1494L1990 1435L1975 1405L1914 1425Z" fill="url(#q110)"/><path d="M1748 1230L1685 1230L1679 1238L1693 1285L1751 1282L1765 1248L1761 1238Z" fill="url(#q111)"/><path d="M2168 384L2176 306L2072 306L2113 382L2147 393Z" fill="url(#q112)"/><path d="M2136 1021L2071 1051L2070 1056L2109 1124L2116 1123L2167 1071Z" fill="url(#q113)"/><path d="M1827 400L1766 450L1769 459L1832 493L1880 444L1879 422L1858 401Z" fill="url(#q114)"/><path d="M1970 542L1924 494L1922 494L1881 542L1883 555L1927 592Z" fill="url(#q115)"/><path d="M1878 989L1826 1000L1838 1045L1867 1048L1894 1003Z" fill="url(#q116)"/><path d="M1789 1013L1819 995L1812 963L1762 961L1752 987L1768 1009Z" fill="url(#q117)"/><path d="M2110 846L2120 863L2188 881L2202 838L2172 784L2155 782L2113 820Z" fill="url(#q118)"/><path d="M2324 842L2336 790L2304 762L2257 775L2250 818L2283 850Z" fill="url(#q119)"/><path d="M1898 838L1860 838L1853 860L1882 896L1884 896L1921 875Z" fill="url(#q120)"/><path d="M1756 309L1733 433L1766 451L1828 400Z" fill="url(#q121)"/><path d="M1934 968L1901 1004L1926 1028L1971 1019L1967 976Z" fill="url(#q122)"/><path d="M1715 649L1723 653L1765 642L1780 622L1779 589L1720 579L1699 611Z" fill="url(#q123)"/><path d="M1701 1441L1619 1464L1619 1501L1709 1516L1747 1482L1747 1481Z" fill="url(#q124)"/><path d="M1944 401L1878 422L1879 444L1922 495L1923 495L1974 458Z" fill="url(#q125)"/><path d="M2229 488L2259 511L2308 502L2333 441L2312 421L2286 420L2224 471Z" fill="url(#q126)"/><path d="M1989 1435L1977 1494L2025 1517L2067 1482L2051 1444Z" fill="url(#q127)"/><path d="M1760 1238L1764 1249L1817 1258L1844 1228L1833 1196L1790 1191Z" fill="url(#q128)"/><path d="M2026 1516L1978 1493L1967 1499L1941 1575L2040 1575Z" fill="url(#q129)"/><path d="M2241 597L2259 580L2260 510L2229 487L2175 548Z" fill="url(#q130)"/><path d="M2398 438L2390 445L2398 535L2428 561L2503 510L2503 436Z" fill="url(#q131)"/><path d="M1906 683L1889 633L1856 626L1834 646L1834 681L1846 695Z" fill="url(#q132)"/><path d="M1683 890L1647 943L1698 950L1703 911L1685 890Z" fill="url(#q133)"/><path d="M2041 691L2103 671L2115 639L2079 607L2030 633L2031 688Z" fill="url(#q134)"/><path d="M2289 1322L2267 1362L2294 1410L2349 1407L2369 1343L2364 1335Z" fill="url(#q135)"/><path d="M1708 1107L1708 1085L1686 1067L1650 1085L1679 1121Z" fill="url(#q136)"/><path d="M1674 700L1674 667L1619 634L1619 712Z" fill="url(#q137)"/><path d="M2284 1306L2289 1323L2364 1336L2378 1269L2347 1233L2317 1230Z" fill="url(#q138)"/><path d="M1998 462L1973 457L1923 494L1969 542L1986 541L2018 487Z" fill="url(#q139)"/><path d="M1725 1171L1748 1230L1761 1239L1791 1192L1776 1154Z" fill="url(#q140)"/><path d="M1795 1135L1779 1146L1775 1154L1790 1192L1833 1197L1852 1165L1848 1157Z" fill="url(#q141)"/><path d="M2073 1213L2071 1241L2134 1276L2157 1260L2155 1208L2096 1193Z" fill="url(#q142)"/><path d="M1924 940L1933 969L1966 977L1997 950L1997 943L1982 922L1939 922Z" fill="url(#q143)"/><path d="M1898 839L1918 802L1885 784L1843 809L1861 839Z" fill="url(#q144)"/><path d="M1799 1123L1794 1136L1848 1158L1858 1105L1836 1097Z" fill="url(#q145)"/><path d="M1748 1115L1779 1147L1795 1136L1800 1123L1778 1072L1759 1072Z" fill="url(#q146)"/><path d="M2110 1123L2071 1056L2022 1090L2029 1137L2101 1134Z" fill="url(#q147)"/><path d="M2553 1305L2540 1219L2465 1211L2438 1268L2469 1329Z" fill="url(#q148)"/><path d="M2113 381L2073 422L2085 468L2133 474L2142 465L2148 392Z" fill="url(#q149)"/><path d="M2031 633L2007 610L1957 621L1953 678L2024 692L2032 688Z" fill="url(#q150)"/><path d="M1674 667L1716 648L1700 610L1619 600L1619 635Z" fill="url(#q151)"/><path d="M1922 875L1939 923L1983 923L1988 862L1968 855Z" fill="url(#q152)"/><path d="M1791 1404L1837 1418L1871 1399L1882 1352L1847 1315L1840 1313L1807 1330L1790 1402Z" fill="url(#q153)"/><path d="M1746 942L1754 946L1790 905L1786 901L1744 893L1732 912Z" fill="url(#q155)"/><path d="M2423 1150L2472 1079L2471 1076L2352 1021L2344 1023L2329 1113Z" fill="url(#q156)"/><path d="M2156 1259L2133 1275L2123 1322L2136 1336L2197 1337L2213 1276L2212 1275Z" fill="url(#q157)"/><path d="M2233 1054L2204 977L2136 1017L2136 1022L2166 1071L2195 1077Z" fill="url(#q158)"/><path d="M1709 1515L1619 1500L1619 1575L1705 1575Z" fill="url(#q160)"/><path d="M2346 1234L2378 1269L2439 1269L2466 1211L2423 1150Z" fill="url(#q161)"/><path d="M1703 1388L1619 1376L1619 1465L1701 1442Z" fill="url(#q162)"/><path d="M1687 887L1683 839L1619 814L1619 874L1683 891L1685 891Z" fill="url(#q163)"/><path d="M2029 1136L2003 1171L2074 1214L2097 1194L2101 1133Z" fill="url(#q164)"/><path d="M1774 791L1788 779L1792 744L1787 739L1740 752L1742 788Z" fill="url(#q165)"/><path d="M1619 1247L1619 1320L1677 1310L1694 1285L1680 1237Z" fill="url(#q166)"/><path d="M1835 680L1784 690L1776 706L1786 740L1792 745L1839 740L1843 737L1847 694Z" fill="url(#q168)"/><path d="M2251 818L2258 775L2217 743L2171 784L2201 838Z" fill="url(#q169)"/><path d="M2335 791L2386 777L2411 714L2405 707L2311 704L2303 763Z" fill="url(#q170)"/><path d="M2529 646L2589 635L2591 582L2502 509L2427 560L2428 593Z" fill="url(#q171)"/><path d="M1791 1403L1808 1331L1759 1309L1721 1358L1721 1371Z" fill="url(#q172)"/><path d="M2236 627L2242 596L2176 547L2150 549L2149 627L2187 648Z" fill="url(#q173)"/><path d="M1741 752L1728 743L1694 764L1692 780L1710 797L1731 798L1743 788Z" fill="url(#q174)"/><path d="M1657 401L1619 405L1619 482L1686 488L1716 435Z" fill="url(#q175)"/><path d="M1998 463L2029 404L2026 396L1959 374L1943 402L1973 458Z" fill="url(#q176)"/><path d="M2066 1482L2025 1516L2039 1575L2115 1575L2087 1488Z" fill="url(#q177)"/><path d="M2053 916L2087 931L2121 863L2111 846L2026 851Z" fill="url(#q178)"/><path d="M2015 1355L2046 1353L2065 1331L2051 1261L2004 1261L1987 1308Z" fill="url(#q179)"/><path d="M1720 580L1779 590L1792 573L1792 557L1755 515L1701 535Z" fill="url(#q180)"/><path d="M1707 1084L1707 1107L1723 1121L1749 1115L1760 1072L1750 1065Z" fill="url(#q181)"/><path d="M1861 838L1844 809L1839 806L1831 808L1802 834L1801 846L1829 873L1854 860Z" fill="url(#q182)"/><path d="M1882 895L1846 914L1847 943L1874 957L1896 937L1884 896Z" fill="url(#q183)"/><path d="M1673 699L1619 711L1619 754L1678 742L1687 712Z" fill="url(#q184)"/><path d="M2079 1404L2050 1444L2066 1483L2086 1489L2128 1465L2112 1409Z" fill="url(#q185)"/><path d="M1708 1515L1704 1575L1780 1575L1778 1504L1747 1481Z" fill="url(#q186)"/><path d="M1677 741L1619 753L1619 808L1693 781L1695 764Z" fill="url(#q187)"/><path d="M1677 993L1704 975L1704 956L1698 949L1648 942L1619 954L1619 973Z" fill="url(#q188)"/><path d="M2012 568L1986 540L1969 541L1927 591L1928 595L1957 622L2007 611Z" fill="url(#q189)"/><path d="M2232 1054L2238 1055L2314 1004L2291 953L2207 967L2203 978Z" fill="url(#q190)"/><path d="M1759 1073L1778 1073L1797 1062L1789 1012L1768 1008L1742 1046L1750 1066Z" fill="url(#q191)"/><path d="M2073 306L2064 306L2025 396L2028 404L2074 423L2114 382Z" fill="url(#q192)"/><path d="M1847 1158L1851 1166L1896 1170L1913 1126L1870 1100L1857 1105Z" fill="url(#q193)"/><path d="M2349 1407L2391 1457L2402 1460L2460 1395L2454 1356L2368 1343Z" fill="url(#q194)"/><path d="M2399 535L2391 444L2333 441L2307 502L2337 542Z" fill="url(#q195)"/><path d="M1762 961L1755 945L1746 941L1703 955L1703 975L1724 993L1753 988Z" fill="url(#q196)"/><path d="M1836 1098L1857 1106L1871 1101L1881 1069L1867 1047L1838 1044L1819 1063Z" fill="url(#q197)"/><path d="M2453 1357L2459 1395L2554 1444L2579 1433L2616 1347L2553 1304L2469 1328Z" fill="url(#q198)"/><path d="M1681 1189L1619 1167L1619 1248L1680 1238L1685 1231Z" fill="url(#q199)"/><path d="M1893 1002L1866 1047L1880 1069L1923 1063L1926 1027L1902 1003Z" fill="url(#q200)"/><path d="M1987 1073L1988 1031L1970 1018L1926 1027L1922 1063L1948 1097Z" fill="url(#q201)"/><path d="M2079 608L2082 559L2073 552L2011 568L2006 610L2031 634Z" fill="url(#q202)"/><path d="M1722 709L1686 712L1677 741L1694 765L1729 744Z" fill="url(#q203)"/><path d="M1725 992L1704 975L1676 992L1684 1032L1690 1037L1714 1030Z" fill="url(#q204)"/><path d="M1987 1308L2005 1261L1989 1242L1942 1246L1924 1278L1937 1305Z" fill="url(#q205)"/><path d="M1707 1168L1680 1189L1684 1231L1749 1231L1726 1171L1714 1166Z" fill="url(#q206)"/><path d="M1923 494L1879 443L1832 492L1835 513L1882 542Z" fill="url(#q207)"/><path d="M1966 977L1970 1019L1988 1032L2040 1007L2041 1001L1996 949Z" fill="url(#q208)"/><path d="M2191 1171L2154 1208L2156 1260L2212 1276L2233 1230L2195 1171Z" fill="url(#q209)"/><path d="M1685 1032L1677 992L1619 972L1619 1033Z" fill="url(#q210)"/><path d="M2241 374L2258 306L2175 306L2167 384L2199 395Z" fill="url(#q211)"/><path d="M2211 1155L2195 1076L2166 1070L2115 1122L2192 1172L2195 1172Z" fill="url(#q212)"/><path d="M1942 794L1917 802L1898 838L1920 875L1922 876L1969 856Z" fill="url(#q213)"/><path d="M1730 797L1746 840L1777 820L1774 790L1742 787Z" fill="url(#q214)"/><path d="M2263 893L2284 849L2250 818L2201 837L2187 880L2188 883Z" fill="url(#q215)"/><path d="M2216 744L2257 776L2304 763L2312 704L2290 675L2279 673L2216 735Z" fill="url(#q216)"/><path d="M1686 487L1619 481L1619 568L1700 534Z" fill="url(#q217)"/><path d="M1657 402L1708 306L1619 306L1619 406Z" fill="url(#q218)"/><path d="M1889 634L1929 595L1928 591L1883 554L1847 587L1856 627Z" fill="url(#q219)"/><path d="M2176 1482L2122 1575L2233 1575L2234 1551L2178 1481Z" fill="url(#q220)"/><path d="M1873 1234L1843 1227L1816 1258L1840 1314L1847 1316L1889 1272Z" fill="url(#q221)"/><path d="M2384 1575L2519 1575L2511 1519L2413 1481Z" fill="url(#q222)"/><path d="M2211 1275L2212 1277L2285 1306L2318 1230L2305 1218L2232 1230Z" fill="url(#q223)"/><path d="M1652 1085L1619 1083L1619 1158L1677 1131L1680 1120Z" fill="url(#q224)"/><path d="M1828 872L1820 895L1847 915L1883 896L1853 860Z" fill="url(#q225)"/><path d="M2103 670L2040 690L2083 748L2123 737L2133 711Z" fill="url(#q226)"/><path d="M2233 1551L2232 1575L2339 1575L2309 1498L2286 1488Z" fill="url(#q227)"/><path d="M1844 810L1886 785L1881 749L1842 736L1838 740L1838 807Z" fill="url(#q228)"/><path d="M1769 458L1755 516L1792 558L1836 513L1833 492Z" fill="url(#q229)"/><path d="M2338 542L2308 501L2259 510L2258 580L2317 579Z" fill="url(#q230)"/><path d="M2461 721L2514 805L2554 818L2568 813L2602 649L2588 634L2528 645Z" fill="url(#q231)"/><path d="M2460 948L2428 934L2351 1022L2471 1078Z" fill="url(#q232)"/><path d="M1686 888L1736 866L1740 853L1695 833L1682 839Z" fill="url(#q233)"/><path d="M1648 943L1684 891L1619 873L1619 955Z" fill="url(#q234)"/><path d="M1760 1310L1751 1281L1693 1284L1676 1309L1721 1359Z" fill="url(#q235)"/><path d="M1724 1120L1707 1106L1679 1120L1676 1131L1707 1169L1715 1167Z" fill="url(#q236)"/><path d="M1835 646L1779 621L1764 642L1784 691L1835 681Z" fill="url(#q237)"/><path d="M1916 1198L1914 1197L1873 1234L1888 1273L1925 1278L1943 1247Z" fill="url(#q238)"/><path d="M2286 420L2241 373L2199 394L2214 464L2224 472Z" fill="url(#q239)"/><path d="M1697 949L1703 956L1747 942L1733 911L1702 911Z" fill="url(#q240)"/>
</g>
<ellipse cx="1659.0" cy="941.2" rx="172" ry="192" fill="url(#halo)"/>
<rect x="1659.0" y="600" width="320" height="700" fill="url(#spk)" mask="url(#pm)" opacity=".7"/>
<rect x="1659.0" y="346.0" width="600" height="10.6" fill="url(#p5)"/>
<rect x="2259.0" y="346.0" width="500" height="12.8" fill="url(#p6)"/>
<rect x="2759.0" y="346.0" width="520" height="16.400" fill="url(#p8)"/>
<rect x="1659.0" y="1524.4" width="600" height="10.6" fill="url(#p5)"/>
<rect x="2259.0" y="1522.2" width="500" height="12.8" fill="url(#p6)"/>
<rect x="2759.0" y="1518.6" width="520" height="16.400" fill="url(#p8)"/>
<rect x="1659.0" y="346.0" width="10.6" height="344.0" fill="url(#p5)"/>
<rect x="1659.0" y="1190" width="10.6" height="345.0" fill="url(#p5)"/>
</g>
<rect x="1659.0" y="346.0" width="1612.0" height="1189.0" fill="none" stroke="#000" stroke-width="1.6"/>
</svg>
<div class="b" style="left:727.0px;top:1686.0px;width:3113.0px;height:6.0px;background:#eeeef2;"></div>
<div class="b" style="left:727.0px;top:1692.0px;width:3113.0px;height:28.0px;background:#eeeef2;"></div>
<div class="b" style="left:727.0px;top:1691.6px;width:3113.0px;height:1.0px;background:#dcdce2;"></div>
<div class="b" style="left:727.0px;top:1692.0px;width:1.0px;height:28.0px;background:#dcdce2;"></div>
<span class="t" style="left:733.8px;top:1697.7px;font-size:17.5px;color:#444;letter-spacing:0.34px;">Mesh Metrics</span>
<div class="b dots" style="left:849.0px;top:1701.0px;width:2905.0px;height:9px"></div>
<svg class="b" style="left:3765.0px;top:1702.0px;" width="13" height="7.5" viewBox="0 0 13 7.5"><path d="M0 0H13L6.5 7Z" fill="#1e1e1e"/></svg>
<svg class="b" style="left:3790.3px;top:1696.5px;" width="11" height="17" viewBox="0 0 11 17"><path d="M3 1H8.5" stroke="#1e1e1e" stroke-width="1.6"/><path d="M3.6 1V8.5" stroke="#1e1e1e" stroke-width="1.5"/><rect x="6" y="1" width="2.4" height="7.5" fill="#1e1e1e"/><path d="M0.8 8.8H10.2M5.5 8.8V16.5" stroke="#1e1e1e" stroke-width="1.8"/></svg>
<svg class="b" style="left:3813.5px;top:1699.0px;" width="13" height="12" viewBox="0 0 13 12"><path d="M1.2 1L11.8 11M11.8 1L1.2 11" stroke="#1e1e1e" stroke-width="2.1"/></svg>
<div class="b" style="left:728.0px;top:1720.0px;width:3088.4px;height:379.5px;background:#fff;"></div>
<div class="b" style="left:3816.4px;top:1720.0px;width:23.6px;height:379.5px;background:#f0f0f0;"></div>
<svg class="b" style="left:3819.0px;top:1746.0px;" width="18" height="12" viewBox="0 0 18 12"><path d="M2 10L9 3L16 10" fill="none" stroke="#555" stroke-width="2.6"/></svg>
<svg class="b" style="left:3819.0px;top:2062.0px;" width="18" height="12" viewBox="0 0 18 12"><path d="M2 2L9 9L16 2" fill="none" stroke="#555" stroke-width="2.6"/></svg>
<div class="b" style="left:3818.0px;top:1772.0px;width:20.5px;height:206.6px;background:#c9c9c9;"></div>
<div class="b" style="left:743.0px;top:1742.4px;width:108.4px;height:35.6px;background:#e9e9e9;border:1.2px solid #fff;box-sizing:border-box;border-right:2px solid #6e6e6e;border-bottom:2px solid #6e6e6e;"></div>
<span class="t" style="left:760.2px;top:1752.3px;font-size:18px;color:#111;letter-spacing:0.96px;">Controls</span>
<div class="b" style="left:901.7px;top:1827.2px;width:2863.5px;height:27.8px;background:#fff;border:1.5px solid #222;box-sizing:border-box;"></div>
<div class="b" style="left:909.0px;top:1839.3px;width:76.0px;height:2.6px;background:#c8f5f7;"></div>
<svg class="b" style="left:939.0px;top:1833.5px;" width="14" height="14" viewBox="0 0 14 14"><circle cx="7" cy="7" r="4.6" fill="#d8f8f8" stroke="#111" stroke-width="1.5"/></svg>
<span class="t" style="left:990.5px;top:1834.2px;font-size:16px;color:#222;letter-spacing:1.00px;">Tri3</span>
<div class="b" style="left:2338.7px;top:1839.3px;width:77.3px;height:2.8px;background:#f4f400;"></div>
<svg class="b" style="left:2370.0px;top:1833.5px;" width="14" height="14" viewBox="0 0 14 14"><circle cx="7" cy="7" r="4.6" fill="#ffff00" stroke="#111" stroke-width="1.5"/></svg>
<span class="t" style="left:2421.2px;top:1834.2px;font-size:16px;color:#222;letter-spacing:0.88px;">Quad4</span>
<div class="b" style="left:894.4px;top:1878.0px;width:2869.3px;height:138.7px;background:#fff;border:1.5px solid #222;box-sizing:border-box;"></div>
<svg class="b" style="left:0;top:0" width="3840" height="2160"><path d="M894.4 1920.3H3763.7" stroke="#b4b4b4" stroke-width="1.2" stroke-dasharray="4 4"/><path d="M894.4 1953.0H3763.7" stroke="#b4b4b4" stroke-width="1.2" stroke-dasharray="4 4"/><path d="M894.4 1986.0H3763.7" stroke="#b4b4b4" stroke-width="1.2" stroke-dasharray="4 4"/><path d="M1253.1 1878.0V2028.7" stroke="#b4b4b4" stroke-width="1.2" stroke-dasharray="4 4"/><path d="M1611.7 1878.0V2028.7" stroke="#b4b4b4" stroke-width="1.2" stroke-dasharray="4 4"/><path d="M1970.4 1878.0V2028.7" stroke="#b4b4b4" stroke-width="1.2" stroke-dasharray="4 4"/><path d="M2329.0 1878.0V2028.7" stroke="#b4b4b4" stroke-width="1.2" stroke-dasharray="4 4"/><path d="M2687.7 1878.0V2028.7" stroke="#b4b4b4" stroke-width="1.2" stroke-dasharray="4 4"/><path d="M3046.4 1878.0V2028.7" stroke="#b4b4b4" stroke-width="1.2" stroke-dasharray="4 4"/><path d="M3405.0 1878.0V2028.7" stroke="#b4b4b4" stroke-width="1.2" stroke-dasharray="4 4"/><path d="M894.4 2016.7V2028.7M3763.7 2016.7V2028.7" stroke="#b4b4b4" stroke-width="1.2" stroke-dasharray="4 4"/><rect x="1037.9" y="1878.0" width="20.4" height="138.7" fill="#ffff00" stroke="#222" stroke-width="1.4"/><rect x="1017.5" y="2014.7" width="20.4" height="2" fill="#111"/><rect x="1324.8" y="1994.3" width="20.4" height="22.4" fill="#ffff00" stroke="#222" stroke-width="1.4"/><rect x="1304.4" y="2014.7" width="20.4" height="2" fill="#111"/><rect x="1611.7" y="2006.4" width="20.4" height="10.3" fill="#ffff00" stroke="#222" stroke-width="1.4"/><rect x="1591.3" y="2014.7" width="20.4" height="2" fill="#111"/><rect x="1898.7" y="2008.2" width="20.4" height="8.5" fill="#ffff00" stroke="#222" stroke-width="1.4"/><rect x="1878.3" y="2014.7" width="20.4" height="2" fill="#111"/><rect x="2185.6" y="2013.7" width="20.4" height="3.0" fill="#ffff00" stroke="#222" stroke-width="1.4"/><rect x="2165.2" y="2014.7" width="20.4" height="2" fill="#111"/><rect x="2452.1" y="2014.2" width="40.8" height="2.5" fill="#111"/><rect x="2739.0" y="2014.2" width="40.8" height="2.5" fill="#111"/><rect x="3026.0" y="2014.2" width="40.8" height="2.5" fill="#111"/><rect x="3312.9" y="2014.2" width="40.8" height="2.5" fill="#111"/><rect x="3599.8" y="2014.2" width="40.8" height="2.5" fill="#111"/></svg>
<span class="t" style="left:800.8px;top:1874.4px;font-size:16px;color:#222;letter-spacing:0.16px;">105191.00</span>
<span class="t" style="left:801.0px;top:1913.8px;font-size:16px;color:#222;letter-spacing:0.14px;">75000.00</span>
<span class="t" style="left:801.3px;top:1946.4px;font-size:16px;color:#222;letter-spacing:0.11px;">50000.00</span>
<span class="t" style="left:801.0px;top:1979.8px;font-size:16px;color:#222;letter-spacing:0.14px;">25000.00</span>
<span class="t" style="left:801.3px;top:2012.4px;font-size:16px;color:#222;letter-spacing:0.08px;">0.00</span>
<span class="t" style="left:876.9px;top:2035.4px;font-size:16px;color:#222;letter-spacing:0.25px;">0.00</span>
<span class="t" style="left:1235.6px;top:2035.4px;font-size:16px;color:#222;letter-spacing:0.33px;">0.13</span>
<span class="t" style="left:1594.2px;top:2035.4px;font-size:16px;color:#222;letter-spacing:0.33px;">0.25</span>
<span class="t" style="left:1952.9px;top:2035.4px;font-size:16px;color:#222;letter-spacing:0.33px;">0.38</span>
<span class="t" style="left:2311.5px;top:2035.4px;font-size:16px;color:#222;letter-spacing:0.25px;">0.50</span>
<span class="t" style="left:2670.2px;top:2035.4px;font-size:16px;color:#222;letter-spacing:0.33px;">0.63</span>
<span class="t" style="left:3028.9px;top:2035.4px;font-size:16px;color:#222;letter-spacing:0.33px;">0.75</span>
<span class="t" style="left:3387.5px;top:2035.4px;font-size:16px;color:#222;letter-spacing:0.33px;">0.88</span>
<span class="t" style="left:3745.7px;top:2035.4px;font-size:16px;color:#222;letter-spacing:0.42px;">1.00</span>
<span class="t" style="left:2260.0px;top:2068.4px;font-size:16.5px;color:#111;font-weight:700;letter-spacing:0.79px;">Element Metrics</span>
<span class="t" style="left:786.6px;top:1947.2px;font-size:16.5px;font-weight:700;color:#111;transform:translate(-50%,-50%) rotate(-90deg);letter-spacing:0.55px">Number of Elements</span>
<div class="b" style="left:727.0px;top:2099.5px;width:3113.0px;height:29.0px;background:#eeeef2;"></div>
<span class="t" style="left:736.2px;top:2105.9px;font-size:17.5px;color:#444;letter-spacing:0.34px;">Selection Information</span>
<span class="t" style="left:924.6px;top:2105.9px;font-size:17.5px;color:#444;letter-spacing:-0.33px;">Messages</span>
<div class="b" style="left:1012.5px;top:2099.5px;width:122.3px;height:28.5px;background:#f6f6f9;border:1px solid #dadade;box-sizing:border-box;border-top:none;"></div>
<span class="t" style="left:1019.8px;top:2105.9px;font-size:17.5px;color:#2b7fc0;letter-spacing:0.28px;">Mesh Metrics</span>
<div class="b" style="left:0.0px;top:2128.3px;width:3840.0px;height:31.7px;background:#007acc;"></div>
<span class="t" style="left:11.2px;top:2137.1px;font-size:17.5px;color:#fff;letter-spacing:-0.44px;">Ready</span>
<svg class="b" style="left:3060.0px;top:2132.0px;" width="26" height="24" viewBox="0 0 26 24"><path d="M2 8H15V18H9L5 22V18H2Z" fill="#f2c230" stroke="#8a6a00" stroke-width="1"/><rect x="13" y="1" width="11" height="13" rx="4" fill="#fff" stroke="#222" stroke-width="1.6"/><text x="18.500" y="11.500" font-family="Liberation Sans" font-weight="700" font-size="10" text-anchor="middle" fill="#111">0</text></svg>
<span class="t" style="left:3085.9px;top:2137.1px;font-size:17.5px;color:#fff;letter-spacing:-0.10px;">No Messages</span>
<span class="t" style="left:3218.7px;top:2137.1px;font-size:17.5px;color:#fff;letter-spacing:0.15px;">No Selection</span>
<svg class="b" style="left:3351.0px;top:2139.0px;" width="14" height="9" viewBox="0 0 14 9"><path d="M1 8L7 1L13 8Z" fill="#fff"/></svg>
<span class="t" style="left:3373.7px;top:2137.1px;font-size:17.5px;color:#fff;letter-spacing:0.31px;">Metric (mm, kg, N, s, mV, mA)</span>
<span class="t" style="left:3632.2px;top:2137.1px;font-size:17.5px;color:#fff;letter-spacing:-0.47px;">Degrees</span>
<span class="t" style="left:3713.0px;top:2137.1px;font-size:17.5px;color:#fff;letter-spacing:0.78px;">rad/s</span>
<span class="t" style="left:3772.7px;top:2137.1px;font-size:17.5px;color:#fff;letter-spacing:-0.39px;">Celsius</span>
</body></html>
